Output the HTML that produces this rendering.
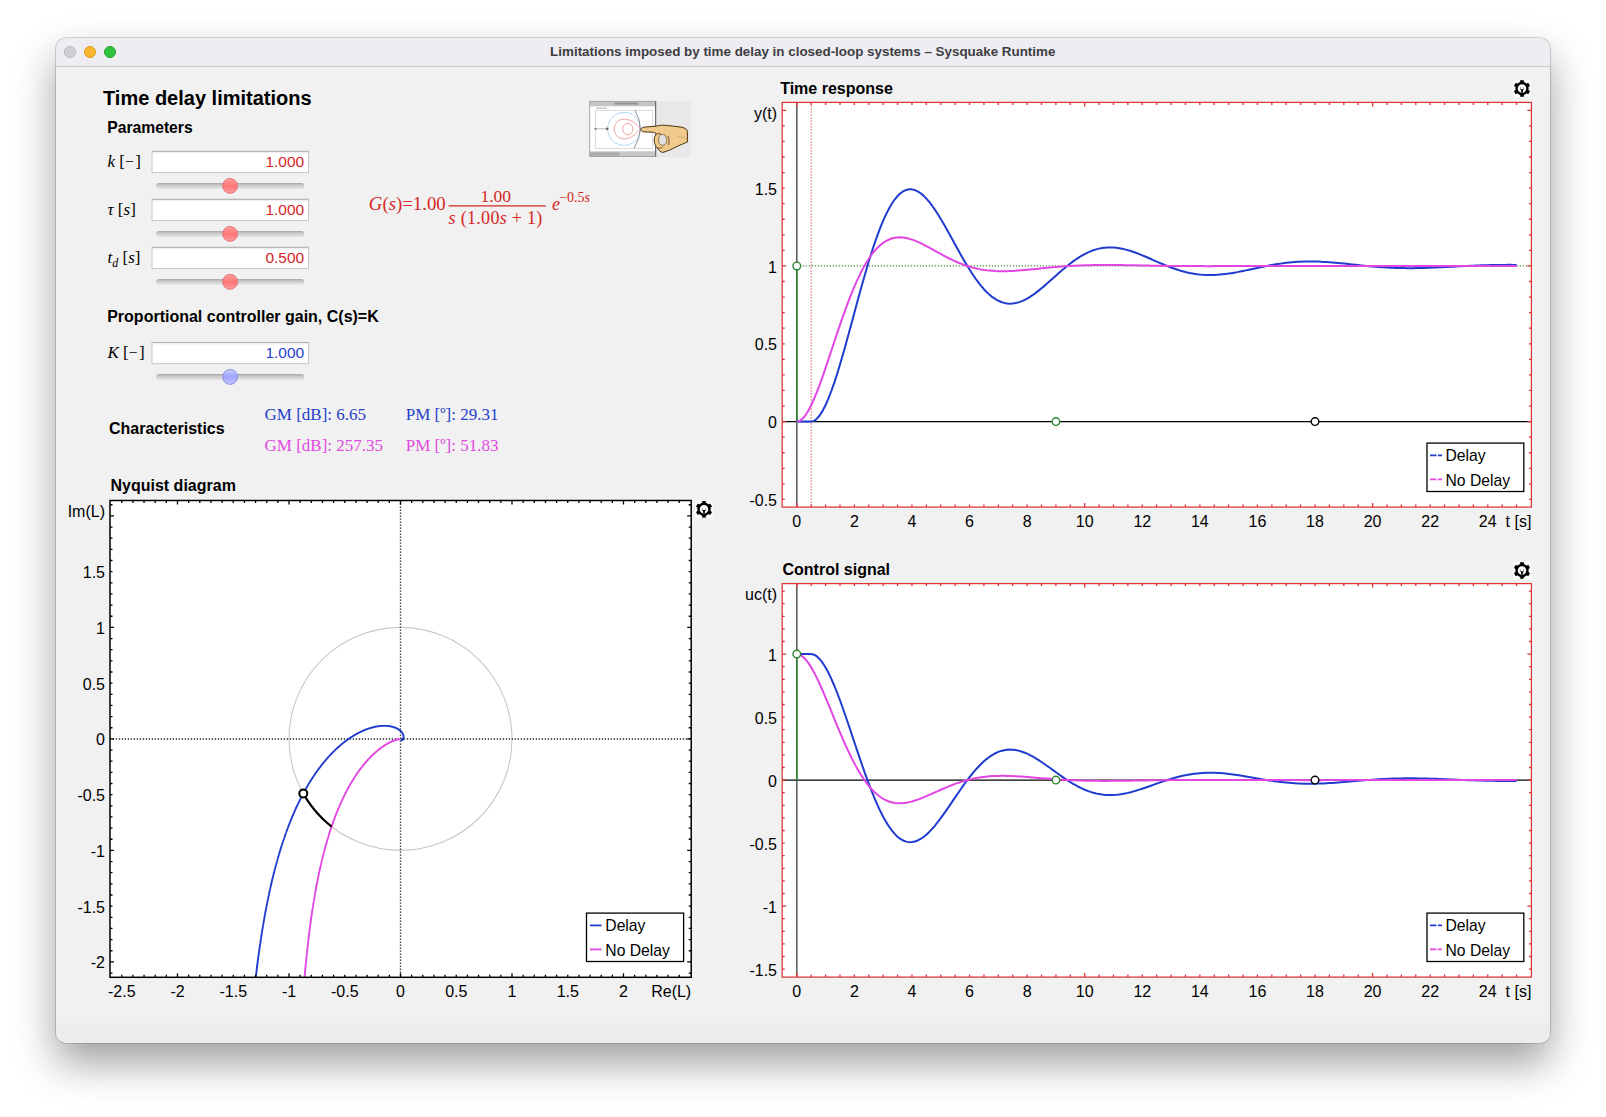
<!DOCTYPE html>
<html><head><meta charset="utf-8"><style>
html,body{margin:0;padding:0;background:#fff;width:1606px;height:1117px;overflow:hidden}
#win{position:absolute;left:55.5px;top:37.5px;width:1494.5px;height:1005.5px;border-radius:10px;background:#f1f1f1;
box-shadow:0 20px 42px rgba(0,0,0,0.38),0 0 0 0.6px rgba(0,0,0,0.28);overflow:hidden}
#tb{position:absolute;left:0;top:0;width:100%;height:28.5px;background:#eeedf1;border-bottom:1px solid #cdccd0}
#bb{position:absolute;left:0;bottom:0;width:100%;height:20px;background:#ececec}
.dot{position:absolute;top:8.5px;width:12px;height:12px;border-radius:50%;box-sizing:border-box}
#ttl{position:absolute;left:0;width:100%;top:6px;text-align:center;font:bold 13.4px "Liberation Sans",sans-serif;color:#3e3d42;letter-spacing:0}
svg{position:absolute;left:0;top:0}
</style></head><body>
<div id="win"><div id="tb"><div class="dot" style="left:8.5px;background:#d0cfd3;border:1px solid #b8b7bb"></div><div class="dot" style="left:28.5px;background:#f8b62c;border:1px solid #dd9a20"></div><div class="dot" style="left:48.5px;background:#2fc43f;border:1px solid #22a030"></div><div id="ttl">Limitations imposed by time delay in closed-loop systems – Sysquake Runtime</div></div><div id="bb"></div></div>
<svg width="1606" height="1117" viewBox="0 0 1606 1117">
<defs>
<linearGradient id="trk" x1="0" y1="0" x2="0" y2="1"><stop offset="0" stop-color="#a6a6a6"/><stop offset="0.35" stop-color="#c8c8c8"/><stop offset="1" stop-color="#e2e2e2"/></linearGradient>
<linearGradient id="thr" x1="0" y1="0" x2="0" y2="1"><stop offset="0" stop-color="#ffa0a0"/><stop offset="0.5" stop-color="#ff7676"/><stop offset="1" stop-color="#ff9c9c"/></linearGradient>
<linearGradient id="thb" x1="0" y1="0" x2="0" y2="1"><stop offset="0" stop-color="#c8ccff"/><stop offset="0.5" stop-color="#9ea4ff"/><stop offset="1" stop-color="#c4c8ff"/></linearGradient>
</defs>
<rect x="782.2" y="102.4" width="749.2" height="404.7" fill="#fff"/>
<clipPath id="c102"><rect x="782.2" y="102.4" width="749.2" height="404.7"/></clipPath>
<line x1="782.2" y1="421.6" x2="1531.4" y2="421.6" stroke="#000" stroke-width="1.3"/>
<line x1="796.8" y1="102.4" x2="796.8" y2="507.1" stroke="#555" stroke-width="1.5"/>
<line x1="796.8" y1="265.95" x2="1531.4" y2="265.95" stroke="#3f8a3f" stroke-width="1.2" stroke-dasharray="1.2 1.8"/>
<line x1="811.19" y1="102.4" x2="811.19" y2="507.1" stroke="#cc3030" stroke-width="1.2" stroke-dasharray="1.1 1.9"/>
<line x1="796.8" y1="421.6" x2="796.8" y2="265.95" stroke="#2a8530" stroke-width="1.6"/>
<path d="M796.8,421.6 L799.68,421.6 L802.56,421.6 L805.44,421.6 L808.32,421.6 L811.19,421.6 L814.07,420.85 L816.95,418.68 L819.83,415.25 L822.71,410.65 L825.59,405.02 L828.47,398.44 L831.35,391.01 L834.23,382.82 L837.11,373.97 L839.98,364.57 L842.86,354.71 L845.74,344.5 L848.62,334.03 L851.5,323.41 L854.38,312.74 L857.26,302.09 L860.14,291.57 L863.02,281.25 L865.9,271.22 L868.77,261.55 L871.65,252.3 L874.53,243.54 L877.41,235.32 L880.29,227.69 L883.17,220.68 L886.05,214.34 L888.93,208.69 L891.81,203.75 L894.69,199.54 L897.56,196.05 L900.44,193.29 L903.32,191.26 L906.2,189.94 L909.08,189.31 L911.96,189.35 L914.84,190.04 L917.72,191.35 L920.6,193.23 L923.48,195.64 L926.36,198.56 L929.23,201.92 L932.11,205.7 L934.99,209.82 L937.87,214.26 L940.75,218.95 L943.63,223.86 L946.51,228.92 L949.39,234.09 L952.27,239.32 L955.14,244.57 L958.02,249.79 L960.9,254.93 L963.78,259.96 L966.66,264.84 L969.54,269.53 L972.42,274 L975.3,278.23 L978.18,282.18 L981.06,285.84 L983.93,289.19 L986.81,292.2 L989.69,294.87 L992.57,297.19 L995.45,299.15 L998.33,300.75 L1001.21,302 L1004.09,302.89 L1006.97,303.43 L1009.85,303.64 L1012.72,303.52 L1015.6,303.09 L1018.48,302.36 L1021.36,301.35 L1024.24,300.08 L1027.12,298.58 L1030,296.86 L1032.88,294.95 L1035.76,292.88 L1038.64,290.65 L1041.51,288.31 L1044.39,285.88 L1047.27,283.37 L1050.15,280.82 L1053.03,278.24 L1055.91,275.67 L1058.79,273.11 L1061.67,270.6 L1064.55,268.15 L1067.43,265.78 L1070.3,263.5 L1073.18,261.34 L1076.06,259.3 L1078.94,257.4 L1081.82,255.65 L1084.7,254.06 L1087.58,252.63 L1090.46,251.37 L1093.34,250.28 L1096.22,249.37 L1099.1,248.64 L1101.97,248.08 L1104.85,247.7 L1107.73,247.48 L1110.61,247.43 L1113.49,247.54 L1116.37,247.8 L1119.25,248.2 L1122.13,248.73 L1125.01,249.39 L1127.88,250.16 L1130.76,251.04 L1133.64,252 L1136.52,253.05 L1139.4,254.16 L1142.28,255.32 L1145.16,256.53 L1148.04,257.77 L1150.92,259.03 L1153.8,260.3 L1156.67,261.56 L1159.55,262.81 L1162.43,264.04 L1165.31,265.23 L1168.19,266.38 L1171.07,267.48 L1173.95,268.53 L1176.83,269.51 L1179.71,270.42 L1182.59,271.26 L1185.46,272.02 L1188.34,272.69 L1191.22,273.29 L1194.1,273.79 L1196.98,274.22 L1199.86,274.55 L1202.74,274.8 L1205.62,274.96 L1208.5,275.04 L1211.38,275.04 L1214.25,274.97 L1217.13,274.82 L1220.01,274.6 L1222.89,274.32 L1225.77,273.98 L1228.65,273.58 L1231.53,273.14 L1234.41,272.65 L1237.29,272.13 L1240.17,271.57 L1243.05,270.99 L1245.92,270.39 L1248.8,269.78 L1251.68,269.16 L1254.56,268.54 L1257.44,267.92 L1260.32,267.31 L1263.2,266.71 L1266.08,266.13 L1268.96,265.57 L1271.84,265.04 L1274.71,264.53 L1277.59,264.06 L1280.47,263.62 L1283.35,263.22 L1286.23,262.86 L1289.11,262.54 L1291.99,262.26 L1294.87,262.03 L1297.75,261.83 L1300.62,261.68 L1303.5,261.57 L1306.38,261.51 L1309.26,261.48 L1312.14,261.49 L1315.02,261.54 L1317.9,261.62 L1320.78,261.74 L1323.66,261.89 L1326.54,262.06 L1329.41,262.26 L1332.29,262.49 L1335.17,262.73 L1338.05,263 L1340.93,263.27 L1343.81,263.56 L1346.69,263.86 L1349.57,264.16 L1352.45,264.47 L1355.33,264.77 L1358.2,265.08 L1361.08,265.37 L1363.96,265.67 L1366.84,265.95 L1369.72,266.22 L1372.6,266.48 L1375.48,266.72 L1378.36,266.95 L1381.24,267.16 L1384.12,267.35 L1386.99,267.52 L1389.87,267.67 L1392.75,267.8 L1395.63,267.91 L1398.51,268 L1401.39,268.07 L1404.27,268.11 L1407.15,268.14 L1410.03,268.15 L1412.91,268.14 L1415.78,268.11 L1418.66,268.06 L1421.54,268 L1424.42,267.92 L1427.3,267.83 L1430.18,267.73 L1433.06,267.61 L1435.94,267.49 L1438.82,267.36 L1441.7,267.22 L1444.57,267.08 L1447.45,266.93 L1450.33,266.78 L1453.21,266.63 L1456.09,266.48 L1458.97,266.33 L1461.85,266.19 L1464.73,266.05 L1467.61,265.91 L1470.49,265.78 L1473.36,265.65 L1476.24,265.54 L1479.12,265.43 L1482,265.33 L1484.88,265.24 L1487.76,265.16 L1490.64,265.08 L1493.52,265.02 L1496.4,264.97 L1499.28,264.93 L1502.15,264.9 L1505.03,264.88 L1507.91,264.87 L1510.79,264.87 L1513.67,264.88 L1516.55,264.9" fill="none" stroke="#1f3ccf" stroke-width="2" stroke-linejoin="round" clip-path="url(#c102)"/>
<path d="M796.8,421.6 L799.68,420.85 L802.56,418.69 L805.44,415.27 L808.32,410.74 L811.19,405.25 L814.07,398.92 L816.95,391.9 L819.83,384.32 L822.71,376.3 L825.59,367.95 L828.47,359.39 L831.35,350.71 L834.23,342.02 L837.11,333.38 L839.98,324.89 L842.86,316.6 L845.74,308.58 L848.62,300.88 L851.5,293.54 L854.38,286.61 L857.26,280.11 L860.14,274.06 L863.02,268.48 L865.9,263.38 L868.77,258.77 L871.65,254.64 L874.53,250.99 L877.41,247.82 L880.29,245.11 L883.17,242.84 L886.05,240.99 L888.93,239.55 L891.81,238.49 L894.69,237.79 L897.56,237.42 L900.44,237.36 L903.32,237.57 L906.2,238.03 L909.08,238.72 L911.96,239.6 L914.84,240.66 L917.72,241.86 L920.6,243.18 L923.48,244.6 L926.36,246.09 L929.23,247.64 L932.11,249.22 L934.99,250.82 L937.87,252.41 L940.75,253.99 L943.63,255.55 L946.51,257.06 L949.39,258.51 L952.27,259.91 L955.14,261.24 L958.02,262.49 L960.9,263.67 L963.78,264.75 L966.66,265.75 L969.54,266.67 L972.42,267.49 L975.3,268.22 L978.18,268.87 L981.06,269.43 L983.93,269.9 L986.81,270.3 L989.69,270.62 L992.57,270.86 L995.45,271.04 L998.33,271.15 L1001.21,271.2 L1004.09,271.2 L1006.97,271.15 L1009.85,271.05 L1012.72,270.91 L1015.6,270.74 L1018.48,270.54 L1021.36,270.31 L1024.24,270.06 L1027.12,269.8 L1030,269.52 L1032.88,269.24 L1035.76,268.94 L1038.64,268.65 L1041.51,268.36 L1044.39,268.07 L1047.27,267.78 L1050.15,267.51 L1053.03,267.24 L1055.91,266.99 L1058.79,266.75 L1061.67,266.52 L1064.55,266.31 L1067.43,266.12 L1070.3,265.94 L1073.18,265.77 L1076.06,265.63 L1078.94,265.5 L1081.82,265.38 L1084.7,265.28 L1087.58,265.2 L1090.46,265.13 L1093.34,265.08 L1096.22,265.04 L1099.1,265.01 L1101.97,264.99 L1104.85,264.98 L1107.73,264.99 L1110.61,265 L1113.49,265.02 L1116.37,265.05 L1119.25,265.08 L1122.13,265.12 L1125.01,265.16 L1127.88,265.21 L1130.76,265.26 L1133.64,265.31 L1136.52,265.36 L1139.4,265.41 L1142.28,265.47 L1145.16,265.52 L1148.04,265.58 L1150.92,265.63 L1153.8,265.68 L1156.67,265.73 L1159.55,265.77 L1162.43,265.81 L1165.31,265.86 L1168.19,265.89 L1171.07,265.93 L1173.95,265.96 L1176.83,265.99 L1179.71,266.02 L1182.59,266.04 L1185.46,266.06 L1188.34,266.08 L1191.22,266.09 L1194.1,266.1 L1196.98,266.11 L1199.86,266.12 L1202.74,266.12 L1205.62,266.13 L1208.5,266.13 L1211.38,266.13 L1214.25,266.12 L1217.13,266.12 L1220.01,266.11 L1222.89,266.11 L1225.77,266.1 L1228.65,266.09 L1231.53,266.08 L1234.41,266.07 L1237.29,266.07 L1240.17,266.06 L1243.05,266.05 L1245.92,266.04 L1248.8,266.03 L1251.68,266.02 L1254.56,266.01 L1257.44,266 L1260.32,265.99 L1263.2,265.98 L1266.08,265.97 L1268.96,265.97 L1271.84,265.96 L1274.71,265.95 L1277.59,265.95 L1280.47,265.94 L1283.35,265.94 L1286.23,265.93 L1289.11,265.93 L1291.99,265.93 L1294.87,265.92 L1297.75,265.92 L1300.62,265.92 L1303.5,265.92 L1306.38,265.92 L1309.26,265.92 L1312.14,265.92 L1315.02,265.92 L1317.9,265.92 L1320.78,265.92 L1323.66,265.92 L1326.54,265.92 L1329.41,265.92 L1332.29,265.92 L1335.17,265.93 L1338.05,265.93 L1340.93,265.93 L1343.81,265.93 L1346.69,265.93 L1349.57,265.93 L1352.45,265.94 L1355.33,265.94 L1358.2,265.94 L1361.08,265.94 L1363.96,265.94 L1366.84,265.94 L1369.72,265.95 L1372.6,265.95 L1375.48,265.95 L1378.36,265.95 L1381.24,265.95 L1384.12,265.95 L1386.99,265.95 L1389.87,265.95 L1392.75,265.95 L1395.63,265.95 L1398.51,265.96 L1401.39,265.96 L1404.27,265.96 L1407.15,265.96 L1410.03,265.96 L1412.91,265.96 L1415.78,265.96 L1418.66,265.96 L1421.54,265.96 L1424.42,265.96 L1427.3,265.96 L1430.18,265.96 L1433.06,265.95 L1435.94,265.95 L1438.82,265.95 L1441.7,265.95 L1444.57,265.95 L1447.45,265.95 L1450.33,265.95 L1453.21,265.95 L1456.09,265.95 L1458.97,265.95 L1461.85,265.95 L1464.73,265.95 L1467.61,265.95 L1470.49,265.95 L1473.36,265.95 L1476.24,265.95 L1479.12,265.95 L1482,265.95 L1484.88,265.95 L1487.76,265.95 L1490.64,265.95 L1493.52,265.95 L1496.4,265.95 L1499.28,265.95 L1502.15,265.95 L1505.03,265.95 L1507.91,265.95 L1510.79,265.95 L1513.67,265.95 L1516.55,265.95" fill="none" stroke="#e246e2" stroke-width="2" stroke-linejoin="round" clip-path="url(#c102)"/>
<circle cx="796.8" cy="265.95" r="3.8" fill="#fff" stroke="#2a8530" stroke-width="1.4"/>
<circle cx="1055.91" cy="421.6" r="3.8" fill="#fff" stroke="#2a8530" stroke-width="1.4"/>
<circle cx="1315.02" cy="421.6" r="3.8" fill="#fff" stroke="#000" stroke-width="1.4"/>
<path d="M796.8,507.1v-4M796.8,102.4v4M811.19,507.1v-2.5M811.19,102.4v2.5M825.59,507.1v-2.5M825.59,102.4v2.5M839.98,507.1v-2.5M839.98,102.4v2.5M854.38,507.1v-2.5M854.38,102.4v2.5M868.77,507.1v-2.5M868.77,102.4v2.5M883.17,507.1v-2.5M883.17,102.4v2.5M897.56,507.1v-2.5M897.56,102.4v2.5M911.96,507.1v-2.5M911.96,102.4v2.5M926.36,507.1v-2.5M926.36,102.4v2.5M940.75,507.1v-2.5M940.75,102.4v2.5M955.14,507.1v-2.5M955.14,102.4v2.5M969.54,507.1v-2.5M969.54,102.4v2.5M983.93,507.1v-2.5M983.93,102.4v2.5M998.33,507.1v-2.5M998.33,102.4v2.5M1012.72,507.1v-2.5M1012.72,102.4v2.5M1027.12,507.1v-2.5M1027.12,102.4v2.5M1041.51,507.1v-2.5M1041.51,102.4v2.5M1055.91,507.1v-2.5M1055.91,102.4v2.5M1070.3,507.1v-2.5M1070.3,102.4v2.5M1084.7,507.1v-4M1084.7,102.4v4M1099.1,507.1v-2.5M1099.1,102.4v2.5M1113.49,507.1v-2.5M1113.49,102.4v2.5M1127.88,507.1v-2.5M1127.88,102.4v2.5M1142.28,507.1v-2.5M1142.28,102.4v2.5M1156.67,507.1v-2.5M1156.67,102.4v2.5M1171.07,507.1v-2.5M1171.07,102.4v2.5M1185.46,507.1v-2.5M1185.46,102.4v2.5M1199.86,507.1v-2.5M1199.86,102.4v2.5M1214.25,507.1v-2.5M1214.25,102.4v2.5M1228.65,507.1v-2.5M1228.65,102.4v2.5M1243.05,507.1v-2.5M1243.05,102.4v2.5M1257.44,507.1v-2.5M1257.44,102.4v2.5M1271.84,507.1v-2.5M1271.84,102.4v2.5M1286.23,507.1v-2.5M1286.23,102.4v2.5M1300.62,507.1v-2.5M1300.62,102.4v2.5M1315.02,507.1v-2.5M1315.02,102.4v2.5M1329.41,507.1v-2.5M1329.41,102.4v2.5M1343.81,507.1v-2.5M1343.81,102.4v2.5M1358.2,507.1v-2.5M1358.2,102.4v2.5M1372.6,507.1v-4M1372.6,102.4v4M1386.99,507.1v-2.5M1386.99,102.4v2.5M1401.39,507.1v-2.5M1401.39,102.4v2.5M1415.78,507.1v-2.5M1415.78,102.4v2.5M1430.18,507.1v-2.5M1430.18,102.4v2.5M1444.57,507.1v-2.5M1444.57,102.4v2.5M1458.97,507.1v-2.5M1458.97,102.4v2.5M1473.36,507.1v-2.5M1473.36,102.4v2.5M1487.76,507.1v-2.5M1487.76,102.4v2.5M1502.15,507.1v-2.5M1502.15,102.4v2.5M1516.55,507.1v-2.5M1516.55,102.4v2.5M782.2,499.43h2.5M1531.4,499.43h-2.5M782.2,483.86h2.5M1531.4,483.86h-2.5M782.2,468.3h2.5M1531.4,468.3h-2.5M782.2,452.73h2.5M1531.4,452.73h-2.5M782.2,437.17h2.5M1531.4,437.17h-2.5M782.2,421.6h4M1531.4,421.6h-4M782.2,406.04h2.5M1531.4,406.04h-2.5M782.2,390.47h2.5M1531.4,390.47h-2.5M782.2,374.91h2.5M1531.4,374.91h-2.5M782.2,359.34h2.5M1531.4,359.34h-2.5M782.2,343.78h2.5M1531.4,343.78h-2.5M782.2,328.21h2.5M1531.4,328.21h-2.5M782.2,312.65h2.5M1531.4,312.65h-2.5M782.2,297.08h2.5M1531.4,297.08h-2.5M782.2,281.51h2.5M1531.4,281.51h-2.5M782.2,265.95h4M1531.4,265.95h-4M782.2,250.38h2.5M1531.4,250.38h-2.5M782.2,234.82h2.5M1531.4,234.82h-2.5M782.2,219.25h2.5M1531.4,219.25h-2.5M782.2,203.69h2.5M1531.4,203.69h-2.5M782.2,188.12h2.5M1531.4,188.12h-2.5M782.2,172.56h2.5M1531.4,172.56h-2.5M782.2,157h2.5M1531.4,157h-2.5M782.2,141.43h2.5M1531.4,141.43h-2.5M782.2,125.87h2.5M1531.4,125.87h-2.5M782.2,110.3h4M1531.4,110.3h-4" stroke="#de3535" stroke-width="1.3" fill="none"/>
<rect x="782.2" y="102.4" width="749.2" height="404.7" fill="none" stroke="#de3535" stroke-width="1.25"/>
<text x="777" y="506.03" font-family='"Liberation Sans", sans-serif' font-size="16" font-weight="normal" font-style="normal" fill="#000" text-anchor="end" >-0.5</text>
<text x="777" y="428.2" font-family='"Liberation Sans", sans-serif' font-size="16" font-weight="normal" font-style="normal" fill="#000" text-anchor="end" >0</text>
<text x="777" y="350.38" font-family='"Liberation Sans", sans-serif' font-size="16" font-weight="normal" font-style="normal" fill="#000" text-anchor="end" >0.5</text>
<text x="777" y="272.55" font-family='"Liberation Sans", sans-serif' font-size="16" font-weight="normal" font-style="normal" fill="#000" text-anchor="end" >1</text>
<text x="777" y="194.72" font-family='"Liberation Sans", sans-serif' font-size="16" font-weight="normal" font-style="normal" fill="#000" text-anchor="end" >1.5</text>
<text x="777" y="118.9" font-family='"Liberation Sans", sans-serif' font-size="16" font-weight="normal" font-style="normal" fill="#000" text-anchor="end" >y(t)</text>
<text x="796.8" y="526.8" font-family='"Liberation Sans", sans-serif' font-size="16" font-weight="normal" font-style="normal" fill="#000" text-anchor="middle" >0</text>
<text x="854.38" y="526.8" font-family='"Liberation Sans", sans-serif' font-size="16" font-weight="normal" font-style="normal" fill="#000" text-anchor="middle" >2</text>
<text x="911.96" y="526.8" font-family='"Liberation Sans", sans-serif' font-size="16" font-weight="normal" font-style="normal" fill="#000" text-anchor="middle" >4</text>
<text x="969.54" y="526.8" font-family='"Liberation Sans", sans-serif' font-size="16" font-weight="normal" font-style="normal" fill="#000" text-anchor="middle" >6</text>
<text x="1027.12" y="526.8" font-family='"Liberation Sans", sans-serif' font-size="16" font-weight="normal" font-style="normal" fill="#000" text-anchor="middle" >8</text>
<text x="1084.7" y="526.8" font-family='"Liberation Sans", sans-serif' font-size="16" font-weight="normal" font-style="normal" fill="#000" text-anchor="middle" >10</text>
<text x="1142.28" y="526.8" font-family='"Liberation Sans", sans-serif' font-size="16" font-weight="normal" font-style="normal" fill="#000" text-anchor="middle" >12</text>
<text x="1199.86" y="526.8" font-family='"Liberation Sans", sans-serif' font-size="16" font-weight="normal" font-style="normal" fill="#000" text-anchor="middle" >14</text>
<text x="1257.44" y="526.8" font-family='"Liberation Sans", sans-serif' font-size="16" font-weight="normal" font-style="normal" fill="#000" text-anchor="middle" >16</text>
<text x="1315.02" y="526.8" font-family='"Liberation Sans", sans-serif' font-size="16" font-weight="normal" font-style="normal" fill="#000" text-anchor="middle" >18</text>
<text x="1372.6" y="526.8" font-family='"Liberation Sans", sans-serif' font-size="16" font-weight="normal" font-style="normal" fill="#000" text-anchor="middle" >20</text>
<text x="1430.18" y="526.8" font-family='"Liberation Sans", sans-serif' font-size="16" font-weight="normal" font-style="normal" fill="#000" text-anchor="middle" >22</text>
<text x="1487.76" y="526.8" font-family='"Liberation Sans", sans-serif' font-size="16" font-weight="normal" font-style="normal" fill="#000" text-anchor="middle" >24</text>
<text x="1531.4" y="526.8" font-family='"Liberation Sans", sans-serif' font-size="16" font-weight="normal" font-style="normal" fill="#000" text-anchor="end" >t [s]</text>
<text x="780.2" y="93.5" font-family='"Liberation Sans", sans-serif' font-size="16" font-weight="bold" font-style="normal" fill="#000" text-anchor="start" >Time response</text>
<rect x="1427" y="443.1" width="96.8" height="48.4" fill="#fff" stroke="#000" stroke-width="1.3"/>
<path d="M1430,455.4h6.5M1438,455.4h4" stroke="#1f3ccf" stroke-width="1.8"/>
<path d="M1430,479.4h6.5M1438,479.4h4" stroke="#e246e2" stroke-width="1.8"/>
<text x="1445.5" y="461.4" font-family='"Liberation Sans", sans-serif' font-size="15.7" font-weight="normal" font-style="normal" fill="#000" text-anchor="start" >Delay</text>
<text x="1445.5" y="485.5" font-family='"Liberation Sans", sans-serif' font-size="15.7" font-weight="normal" font-style="normal" fill="#000" text-anchor="start" >No Delay</text>
<rect x="782.2" y="583.6" width="749.2" height="393.5" fill="#fff"/>
<clipPath id="c583"><rect x="782.2" y="583.6" width="749.2" height="393.5"/></clipPath>
<line x1="782.2" y1="780.1" x2="1531.4" y2="780.1" stroke="#000" stroke-width="1.3"/>
<line x1="796.8" y1="583.6" x2="796.8" y2="977.1" stroke="#555" stroke-width="1.5"/>
<line x1="796.8" y1="780.1" x2="796.8" y2="654.1" stroke="#2a8530" stroke-width="1.6"/>
<path d="M796.8,654.1 L799.68,654.1 L802.56,654.1 L805.44,654.1 L808.32,654.1 L811.19,654.1 L814.07,654.71 L816.95,656.46 L819.83,659.24 L822.71,662.96 L825.59,667.52 L828.47,672.85 L831.35,678.87 L834.23,685.5 L837.11,692.66 L839.98,700.27 L842.86,708.25 L845.74,716.51 L848.62,724.99 L851.5,733.58 L854.38,742.23 L857.26,750.84 L860.14,759.36 L863.02,767.71 L865.9,775.83 L868.77,783.66 L871.65,791.15 L874.53,798.24 L877.41,804.9 L880.29,811.07 L883.17,816.74 L886.05,821.88 L888.93,826.45 L891.81,830.45 L894.69,833.86 L897.56,836.68 L900.44,838.92 L903.32,840.56 L906.2,841.63 L909.08,842.14 L911.96,842.1 L914.84,841.55 L917.72,840.49 L920.6,838.97 L923.48,837.01 L926.36,834.65 L929.23,831.93 L932.11,828.88 L934.99,825.53 L937.87,821.94 L940.75,818.14 L943.63,814.17 L946.51,810.08 L949.39,805.89 L952.27,801.66 L955.14,797.41 L958.02,793.19 L960.9,789.02 L963.78,784.95 L966.66,781 L969.54,777.2 L972.42,773.58 L975.3,770.16 L978.18,766.96 L981.06,764 L983.93,761.29 L986.81,758.85 L989.69,756.69 L992.57,754.81 L995.45,753.22 L998.33,751.93 L1001.21,750.92 L1004.09,750.2 L1006.97,749.76 L1009.85,749.59 L1012.72,749.69 L1015.6,750.04 L1018.48,750.63 L1021.36,751.44 L1024.24,752.47 L1027.12,753.68 L1030,755.07 L1032.88,756.62 L1035.76,758.3 L1038.64,760.1 L1041.51,762 L1044.39,763.97 L1047.27,766 L1050.15,768.06 L1053.03,770.15 L1055.91,772.23 L1058.79,774.3 L1061.67,776.34 L1064.55,778.32 L1067.43,780.24 L1070.3,782.08 L1073.18,783.83 L1076.06,785.48 L1078.94,787.02 L1081.82,788.43 L1084.7,789.73 L1087.58,790.88 L1090.46,791.9 L1093.34,792.78 L1096.22,793.52 L1099.1,794.11 L1101.97,794.56 L1104.85,794.88 L1107.73,795.05 L1110.61,795.09 L1113.49,795 L1116.37,794.8 L1119.25,794.47 L1122.13,794.04 L1125.01,793.5 L1127.88,792.88 L1130.76,792.17 L1133.64,791.39 L1136.52,790.55 L1139.4,789.65 L1142.28,788.7 L1145.16,787.72 L1148.04,786.72 L1150.92,785.7 L1153.8,784.68 L1156.67,783.65 L1159.55,782.64 L1162.43,781.65 L1165.31,780.68 L1168.19,779.75 L1171.07,778.86 L1173.95,778.01 L1176.83,777.22 L1179.71,776.48 L1182.59,775.8 L1185.46,775.19 L1188.34,774.64 L1191.22,774.16 L1194.1,773.75 L1196.98,773.41 L1199.86,773.14 L1202.74,772.94 L1205.62,772.81 L1208.5,772.74 L1211.38,772.74 L1214.25,772.8 L1217.13,772.92 L1220.01,773.1 L1222.89,773.33 L1225.77,773.6 L1228.65,773.92 L1231.53,774.28 L1234.41,774.68 L1237.29,775.1 L1240.17,775.55 L1243.05,776.02 L1245.92,776.5 L1248.8,777 L1251.68,777.5 L1254.56,778.01 L1257.44,778.51 L1260.32,779 L1263.2,779.49 L1266.08,779.96 L1268.96,780.41 L1271.84,780.84 L1274.71,781.25 L1277.59,781.63 L1280.47,781.98 L1283.35,782.31 L1286.23,782.6 L1289.11,782.86 L1291.99,783.08 L1294.87,783.28 L1297.75,783.43 L1300.62,783.55 L1303.5,783.64 L1306.38,783.7 L1309.26,783.72 L1312.14,783.71 L1315.02,783.67 L1317.9,783.6 L1320.78,783.51 L1323.66,783.39 L1326.54,783.25 L1329.41,783.08 L1332.29,782.9 L1335.17,782.7 L1338.05,782.49 L1340.93,782.27 L1343.81,782.03 L1346.69,781.79 L1349.57,781.55 L1352.45,781.3 L1355.33,781.05 L1358.2,780.81 L1361.08,780.57 L1363.96,780.33 L1366.84,780.1 L1369.72,779.88 L1372.6,779.67 L1375.48,779.48 L1378.36,779.29 L1381.24,779.12 L1384.12,778.97 L1386.99,778.83 L1389.87,778.71 L1392.75,778.6 L1395.63,778.51 L1398.51,778.44 L1401.39,778.39 L1404.27,778.35 L1407.15,778.33 L1410.03,778.32 L1412.91,778.33 L1415.78,778.35 L1418.66,778.39 L1421.54,778.44 L1424.42,778.5 L1427.3,778.58 L1430.18,778.66 L1433.06,778.75 L1435.94,778.85 L1438.82,778.96 L1441.7,779.07 L1444.57,779.19 L1447.45,779.3 L1450.33,779.43 L1453.21,779.55 L1456.09,779.67 L1458.97,779.79 L1461.85,779.91 L1464.73,780.02 L1467.61,780.13 L1470.49,780.24 L1473.36,780.34 L1476.24,780.43 L1479.12,780.52 L1482,780.6 L1484.88,780.68 L1487.76,780.74 L1490.64,780.8 L1493.52,780.85 L1496.4,780.89 L1499.28,780.92 L1502.15,780.95 L1505.03,780.96 L1507.91,780.97 L1510.79,780.97 L1513.67,780.97 L1516.55,780.95" fill="none" stroke="#1f3ccf" stroke-width="2" stroke-linejoin="round" clip-path="url(#c583)"/>
<path d="M796.8,654.1 L799.68,654.71 L802.56,656.46 L805.44,659.22 L808.32,662.89 L811.19,667.34 L814.07,672.46 L816.95,678.14 L819.83,684.28 L822.71,690.77 L825.59,697.53 L828.47,704.46 L831.35,711.48 L834.23,718.52 L837.11,725.51 L839.98,732.39 L842.86,739.1 L845.74,745.59 L848.62,751.82 L851.5,757.76 L854.38,763.38 L857.26,768.64 L860.14,773.54 L863.02,778.05 L865.9,782.18 L868.77,785.91 L871.65,789.26 L874.53,792.21 L877.41,794.78 L880.29,796.97 L883.17,798.81 L886.05,800.3 L888.93,801.47 L891.81,802.33 L894.69,802.9 L897.56,803.19 L900.44,803.25 L903.32,803.08 L906.2,802.7 L909.08,802.14 L911.96,801.43 L914.84,800.57 L917.72,799.6 L920.6,798.53 L923.48,797.39 L926.36,796.18 L929.23,794.92 L932.11,793.64 L934.99,792.35 L937.87,791.06 L940.75,789.78 L943.63,788.52 L946.51,787.3 L949.39,786.12 L952.27,784.99 L955.14,783.91 L958.02,782.9 L960.9,781.95 L963.78,781.07 L966.66,780.26 L969.54,779.52 L972.42,778.85 L975.3,778.26 L978.18,777.74 L981.06,777.28 L983.93,776.9 L986.81,776.58 L989.69,776.32 L992.57,776.12 L995.45,775.98 L998.33,775.89 L1001.21,775.85 L1004.09,775.85 L1006.97,775.89 L1009.85,775.97 L1012.72,776.08 L1015.6,776.22 L1018.48,776.38 L1021.36,776.57 L1024.24,776.77 L1027.12,776.98 L1030,777.21 L1032.88,777.44 L1035.76,777.68 L1038.64,777.91 L1041.51,778.15 L1044.39,778.39 L1047.27,778.62 L1050.15,778.84 L1053.03,779.05 L1055.91,779.26 L1058.79,779.45 L1061.67,779.64 L1064.55,779.81 L1067.43,779.96 L1070.3,780.11 L1073.18,780.24 L1076.06,780.36 L1078.94,780.47 L1081.82,780.56 L1084.7,780.64 L1087.58,780.71 L1090.46,780.76 L1093.34,780.81 L1096.22,780.84 L1099.1,780.86 L1101.97,780.88 L1104.85,780.88 L1107.73,780.88 L1110.61,780.87 L1113.49,780.85 L1116.37,780.83 L1119.25,780.8 L1122.13,780.77 L1125.01,780.74 L1127.88,780.7 L1130.76,780.66 L1133.64,780.62 L1136.52,780.58 L1139.4,780.53 L1142.28,780.49 L1145.16,780.45 L1148.04,780.4 L1150.92,780.36 L1153.8,780.32 L1156.67,780.28 L1159.55,780.24 L1162.43,780.21 L1165.31,780.18 L1168.19,780.15 L1171.07,780.12 L1173.95,780.09 L1176.83,780.07 L1179.71,780.05 L1182.59,780.03 L1185.46,780.01 L1188.34,780 L1191.22,779.99 L1194.1,779.98 L1196.98,779.97 L1199.86,779.96 L1202.74,779.96 L1205.62,779.96 L1208.5,779.96 L1211.38,779.96 L1214.25,779.96 L1217.13,779.96 L1220.01,779.97 L1222.89,779.97 L1225.77,779.98 L1228.65,779.98 L1231.53,779.99 L1234.41,780 L1237.29,780.01 L1240.17,780.01 L1243.05,780.02 L1245.92,780.03 L1248.8,780.04 L1251.68,780.05 L1254.56,780.05 L1257.44,780.06 L1260.32,780.07 L1263.2,780.08 L1266.08,780.08 L1268.96,780.09 L1271.84,780.09 L1274.71,780.1 L1277.59,780.1 L1280.47,780.11 L1283.35,780.11 L1286.23,780.11 L1289.11,780.12 L1291.99,780.12 L1294.87,780.12 L1297.75,780.12 L1300.62,780.12 L1303.5,780.13 L1306.38,780.13 L1309.26,780.13 L1312.14,780.13 L1315.02,780.13 L1317.9,780.13 L1320.78,780.13 L1323.66,780.12 L1326.54,780.12 L1329.41,780.12 L1332.29,780.12 L1335.17,780.12 L1338.05,780.12 L1340.93,780.12 L1343.81,780.12 L1346.69,780.11 L1349.57,780.11 L1352.45,780.11 L1355.33,780.11 L1358.2,780.11 L1361.08,780.11 L1363.96,780.11 L1366.84,780.1 L1369.72,780.1 L1372.6,780.1 L1375.48,780.1 L1378.36,780.1 L1381.24,780.1 L1384.12,780.1 L1386.99,780.1 L1389.87,780.1 L1392.75,780.1 L1395.63,780.1 L1398.51,780.1 L1401.39,780.1 L1404.27,780.1 L1407.15,780.1 L1410.03,780.1 L1412.91,780.1 L1415.78,780.1 L1418.66,780.1 L1421.54,780.1 L1424.42,780.1 L1427.3,780.1 L1430.18,780.1 L1433.06,780.1 L1435.94,780.1 L1438.82,780.1 L1441.7,780.1 L1444.57,780.1 L1447.45,780.1 L1450.33,780.1 L1453.21,780.1 L1456.09,780.1 L1458.97,780.1 L1461.85,780.1 L1464.73,780.1 L1467.61,780.1 L1470.49,780.1 L1473.36,780.1 L1476.24,780.1 L1479.12,780.1 L1482,780.1 L1484.88,780.1 L1487.76,780.1 L1490.64,780.1 L1493.52,780.1 L1496.4,780.1 L1499.28,780.1 L1502.15,780.1 L1505.03,780.1 L1507.91,780.1 L1510.79,780.1 L1513.67,780.1 L1516.55,780.1" fill="none" stroke="#e246e2" stroke-width="2" stroke-linejoin="round" clip-path="url(#c583)"/>
<circle cx="796.8" cy="654.1" r="3.8" fill="#fff" stroke="#2a8530" stroke-width="1.4"/>
<circle cx="1055.91" cy="780.1" r="3.8" fill="#fff" stroke="#2a8530" stroke-width="1.4"/>
<circle cx="1315.02" cy="780.1" r="3.8" fill="#fff" stroke="#000" stroke-width="1.4"/>
<path d="M796.8,977.1v-4M796.8,583.6v4M811.19,977.1v-2.5M811.19,583.6v2.5M825.59,977.1v-2.5M825.59,583.6v2.5M839.98,977.1v-2.5M839.98,583.6v2.5M854.38,977.1v-2.5M854.38,583.6v2.5M868.77,977.1v-2.5M868.77,583.6v2.5M883.17,977.1v-2.5M883.17,583.6v2.5M897.56,977.1v-2.5M897.56,583.6v2.5M911.96,977.1v-2.5M911.96,583.6v2.5M926.36,977.1v-2.5M926.36,583.6v2.5M940.75,977.1v-2.5M940.75,583.6v2.5M955.14,977.1v-2.5M955.14,583.6v2.5M969.54,977.1v-2.5M969.54,583.6v2.5M983.93,977.1v-2.5M983.93,583.6v2.5M998.33,977.1v-2.5M998.33,583.6v2.5M1012.72,977.1v-2.5M1012.72,583.6v2.5M1027.12,977.1v-2.5M1027.12,583.6v2.5M1041.51,977.1v-2.5M1041.51,583.6v2.5M1055.91,977.1v-2.5M1055.91,583.6v2.5M1070.3,977.1v-2.5M1070.3,583.6v2.5M1084.7,977.1v-4M1084.7,583.6v4M1099.1,977.1v-2.5M1099.1,583.6v2.5M1113.49,977.1v-2.5M1113.49,583.6v2.5M1127.88,977.1v-2.5M1127.88,583.6v2.5M1142.28,977.1v-2.5M1142.28,583.6v2.5M1156.67,977.1v-2.5M1156.67,583.6v2.5M1171.07,977.1v-2.5M1171.07,583.6v2.5M1185.46,977.1v-2.5M1185.46,583.6v2.5M1199.86,977.1v-2.5M1199.86,583.6v2.5M1214.25,977.1v-2.5M1214.25,583.6v2.5M1228.65,977.1v-2.5M1228.65,583.6v2.5M1243.05,977.1v-2.5M1243.05,583.6v2.5M1257.44,977.1v-2.5M1257.44,583.6v2.5M1271.84,977.1v-2.5M1271.84,583.6v2.5M1286.23,977.1v-2.5M1286.23,583.6v2.5M1300.62,977.1v-2.5M1300.62,583.6v2.5M1315.02,977.1v-2.5M1315.02,583.6v2.5M1329.41,977.1v-2.5M1329.41,583.6v2.5M1343.81,977.1v-2.5M1343.81,583.6v2.5M1358.2,977.1v-2.5M1358.2,583.6v2.5M1372.6,977.1v-4M1372.6,583.6v4M1386.99,977.1v-2.5M1386.99,583.6v2.5M1401.39,977.1v-2.5M1401.39,583.6v2.5M1415.78,977.1v-2.5M1415.78,583.6v2.5M1430.18,977.1v-2.5M1430.18,583.6v2.5M1444.57,977.1v-2.5M1444.57,583.6v2.5M1458.97,977.1v-2.5M1458.97,583.6v2.5M1473.36,977.1v-2.5M1473.36,583.6v2.5M1487.76,977.1v-2.5M1487.76,583.6v2.5M1502.15,977.1v-2.5M1502.15,583.6v2.5M1516.55,977.1v-2.5M1516.55,583.6v2.5M782.2,969.1h2.5M1531.4,969.1h-2.5M782.2,956.5h2.5M1531.4,956.5h-2.5M782.2,943.9h2.5M1531.4,943.9h-2.5M782.2,931.3h2.5M1531.4,931.3h-2.5M782.2,918.7h2.5M1531.4,918.7h-2.5M782.2,906.1h4M1531.4,906.1h-4M782.2,893.5h2.5M1531.4,893.5h-2.5M782.2,880.9h2.5M1531.4,880.9h-2.5M782.2,868.3h2.5M1531.4,868.3h-2.5M782.2,855.7h2.5M1531.4,855.7h-2.5M782.2,843.1h2.5M1531.4,843.1h-2.5M782.2,830.5h2.5M1531.4,830.5h-2.5M782.2,817.9h2.5M1531.4,817.9h-2.5M782.2,805.3h2.5M1531.4,805.3h-2.5M782.2,792.7h2.5M1531.4,792.7h-2.5M782.2,780.1h4M1531.4,780.1h-4M782.2,767.5h2.5M1531.4,767.5h-2.5M782.2,754.9h2.5M1531.4,754.9h-2.5M782.2,742.3h2.5M1531.4,742.3h-2.5M782.2,729.7h2.5M1531.4,729.7h-2.5M782.2,717.1h2.5M1531.4,717.1h-2.5M782.2,704.5h2.5M1531.4,704.5h-2.5M782.2,691.9h2.5M1531.4,691.9h-2.5M782.2,679.3h2.5M1531.4,679.3h-2.5M782.2,666.7h2.5M1531.4,666.7h-2.5M782.2,654.1h4M1531.4,654.1h-4M782.2,641.5h2.5M1531.4,641.5h-2.5M782.2,628.9h2.5M1531.4,628.9h-2.5M782.2,616.3h2.5M1531.4,616.3h-2.5M782.2,603.7h2.5M1531.4,603.7h-2.5M782.2,591.1h2.5M1531.4,591.1h-2.5" stroke="#de3535" stroke-width="1.3" fill="none"/>
<rect x="782.2" y="583.6" width="749.2" height="393.5" fill="none" stroke="#de3535" stroke-width="1.25"/>
<text x="777" y="975.7" font-family='"Liberation Sans", sans-serif' font-size="16" font-weight="normal" font-style="normal" fill="#000" text-anchor="end" >-1.5</text>
<text x="777" y="912.7" font-family='"Liberation Sans", sans-serif' font-size="16" font-weight="normal" font-style="normal" fill="#000" text-anchor="end" >-1</text>
<text x="777" y="849.7" font-family='"Liberation Sans", sans-serif' font-size="16" font-weight="normal" font-style="normal" fill="#000" text-anchor="end" >-0.5</text>
<text x="777" y="786.7" font-family='"Liberation Sans", sans-serif' font-size="16" font-weight="normal" font-style="normal" fill="#000" text-anchor="end" >0</text>
<text x="777" y="723.7" font-family='"Liberation Sans", sans-serif' font-size="16" font-weight="normal" font-style="normal" fill="#000" text-anchor="end" >0.5</text>
<text x="777" y="660.7" font-family='"Liberation Sans", sans-serif' font-size="16" font-weight="normal" font-style="normal" fill="#000" text-anchor="end" >1</text>
<text x="777" y="600.1" font-family='"Liberation Sans", sans-serif' font-size="16" font-weight="normal" font-style="normal" fill="#000" text-anchor="end" >uc(t)</text>
<text x="796.8" y="996.8" font-family='"Liberation Sans", sans-serif' font-size="16" font-weight="normal" font-style="normal" fill="#000" text-anchor="middle" >0</text>
<text x="854.38" y="996.8" font-family='"Liberation Sans", sans-serif' font-size="16" font-weight="normal" font-style="normal" fill="#000" text-anchor="middle" >2</text>
<text x="911.96" y="996.8" font-family='"Liberation Sans", sans-serif' font-size="16" font-weight="normal" font-style="normal" fill="#000" text-anchor="middle" >4</text>
<text x="969.54" y="996.8" font-family='"Liberation Sans", sans-serif' font-size="16" font-weight="normal" font-style="normal" fill="#000" text-anchor="middle" >6</text>
<text x="1027.12" y="996.8" font-family='"Liberation Sans", sans-serif' font-size="16" font-weight="normal" font-style="normal" fill="#000" text-anchor="middle" >8</text>
<text x="1084.7" y="996.8" font-family='"Liberation Sans", sans-serif' font-size="16" font-weight="normal" font-style="normal" fill="#000" text-anchor="middle" >10</text>
<text x="1142.28" y="996.8" font-family='"Liberation Sans", sans-serif' font-size="16" font-weight="normal" font-style="normal" fill="#000" text-anchor="middle" >12</text>
<text x="1199.86" y="996.8" font-family='"Liberation Sans", sans-serif' font-size="16" font-weight="normal" font-style="normal" fill="#000" text-anchor="middle" >14</text>
<text x="1257.44" y="996.8" font-family='"Liberation Sans", sans-serif' font-size="16" font-weight="normal" font-style="normal" fill="#000" text-anchor="middle" >16</text>
<text x="1315.02" y="996.8" font-family='"Liberation Sans", sans-serif' font-size="16" font-weight="normal" font-style="normal" fill="#000" text-anchor="middle" >18</text>
<text x="1372.6" y="996.8" font-family='"Liberation Sans", sans-serif' font-size="16" font-weight="normal" font-style="normal" fill="#000" text-anchor="middle" >20</text>
<text x="1430.18" y="996.8" font-family='"Liberation Sans", sans-serif' font-size="16" font-weight="normal" font-style="normal" fill="#000" text-anchor="middle" >22</text>
<text x="1487.76" y="996.8" font-family='"Liberation Sans", sans-serif' font-size="16" font-weight="normal" font-style="normal" fill="#000" text-anchor="middle" >24</text>
<text x="1531.4" y="996.8" font-family='"Liberation Sans", sans-serif' font-size="16" font-weight="normal" font-style="normal" fill="#000" text-anchor="end" >t [s]</text>
<text x="782.5" y="575" font-family='"Liberation Sans", sans-serif' font-size="16" font-weight="bold" font-style="normal" fill="#000" text-anchor="start" >Control signal</text>
<rect x="1427" y="913.1" width="96.8" height="48.4" fill="#fff" stroke="#000" stroke-width="1.3"/>
<path d="M1430,925.4h6.5M1438,925.4h4" stroke="#1f3ccf" stroke-width="1.8"/>
<path d="M1430,949.4h6.5M1438,949.4h4" stroke="#e246e2" stroke-width="1.8"/>
<text x="1445.5" y="931.4" font-family='"Liberation Sans", sans-serif' font-size="15.7" font-weight="normal" font-style="normal" fill="#000" text-anchor="start" >Delay</text>
<text x="1445.5" y="955.5" font-family='"Liberation Sans", sans-serif' font-size="15.7" font-weight="normal" font-style="normal" fill="#000" text-anchor="start" >No Delay</text>
<rect x="110" y="500.5" width="581.2" height="476.8" fill="#fff"/>
<clipPath id="cn"><rect x="110" y="500.5" width="581.2" height="476.8"/></clipPath>
<circle cx="400.5" cy="738.9" r="111.5" fill="none" stroke="#c8c8c8" stroke-width="1.1"/>
<line x1="110" y1="738.9" x2="691.2" y2="738.9" stroke="#222" stroke-width="1.5" stroke-dasharray="1.3 1.7" stroke-dashoffset="0.25"/>
<line x1="400.5" y1="500.5" x2="400.5" y2="977.3" stroke="#222" stroke-width="1.4" stroke-dasharray="1.3 1.7"/>
<path d="M248.4,1060.76 L248.43,1060.29 L248.46,1059.83 L248.49,1059.36 L248.53,1058.89 L248.56,1058.43 L248.59,1057.96 L248.62,1057.49 L248.65,1057.03 L248.69,1056.56 L248.72,1056.1 L248.75,1055.64 L248.78,1055.17 L248.81,1054.71 L248.85,1054.25 L248.88,1053.79 L248.91,1053.32 L248.94,1052.86 L248.98,1052.4 L249.01,1051.94 L249.04,1051.48 L249.08,1051.02 L249.11,1050.56 L249.14,1050.11 L249.17,1049.65 L249.21,1049.19 L249.24,1048.73 L249.27,1048.28 L249.31,1047.82 L249.34,1047.36 L249.37,1046.91 L249.41,1046.45 L249.44,1046 L249.47,1045.55 L249.51,1045.09 L249.54,1044.64 L249.57,1044.19 L249.61,1043.73 L249.64,1043.28 L249.68,1042.83 L249.71,1042.38 L249.74,1041.93 L249.78,1041.48 L249.81,1041.03 L249.85,1040.58 L249.88,1040.13 L249.91,1039.68 L249.95,1039.24 L249.98,1038.79 L250.02,1038.34 L250.05,1037.89 L250.09,1037.45 L250.12,1037 L250.16,1036.56 L250.19,1036.11 L250.23,1035.67 L250.26,1035.22 L250.3,1034.78 L250.33,1034.34 L250.37,1033.89 L250.4,1033.45 L250.44,1033.01 L250.47,1032.57 L250.51,1032.13 L250.54,1031.69 L250.58,1031.25 L250.61,1030.81 L250.65,1030.37 L250.69,1029.93 L250.72,1029.49 L250.76,1029.05 L250.79,1028.61 L250.83,1028.18 L250.87,1027.74 L250.9,1027.3 L250.94,1026.87 L250.97,1026.43 L251.01,1026 L251.05,1025.56 L251.08,1025.13 L251.12,1024.69 L251.16,1024.26 L251.19,1023.83 L251.23,1023.39 L251.27,1022.96 L251.3,1022.53 L251.34,1022.1 L251.38,1021.67 L251.41,1021.24 L251.45,1020.81 L251.49,1020.38 L251.53,1019.95 L251.56,1019.52 L251.6,1019.09 L251.64,1018.66 L251.68,1018.23 L251.71,1017.81 L251.75,1017.38 L251.79,1016.95 L251.83,1016.53 L251.87,1016.1 L251.9,1015.67 L251.94,1015.25 L251.98,1014.83 L252.02,1014.4 L252.06,1013.98 L252.09,1013.55 L252.13,1013.13 L252.17,1012.71 L252.21,1012.29 L252.25,1011.87 L252.29,1011.44 L252.33,1011.02 L252.36,1010.6 L252.4,1010.18 L252.44,1009.76 L252.48,1009.34 L252.52,1008.93 L252.56,1008.51 L252.6,1008.09 L252.64,1007.67 L252.68,1007.25 L252.72,1006.84 L252.76,1006.42 L252.8,1006.01 L252.83,1005.59 L252.87,1005.17 L252.91,1004.76 L252.95,1004.35 L252.99,1003.93 L253.03,1003.52 L253.07,1003.1 L253.11,1002.69 L253.15,1002.28 L253.19,1001.87 L253.24,1001.46 L253.28,1001.04 L253.32,1000.63 L253.36,1000.22 L253.4,999.81 L253.44,999.4 L253.48,998.99 L253.52,998.58 L253.56,998.18 L253.6,997.77 L253.64,997.36 L253.68,996.95 L253.72,996.55 L253.77,996.14 L253.81,995.73 L253.85,995.33 L253.89,994.92 L253.93,994.52 L253.97,994.11 L254.02,993.71 L254.06,993.31 L254.1,992.9 L254.14,992.5 L254.18,992.1 L254.23,991.69 L254.27,991.29 L254.31,990.89 L254.35,990.49 L254.39,990.09 L254.44,989.69 L254.48,989.29 L254.52,988.89 L254.56,988.49 L254.61,988.09 L254.65,987.69 L254.69,987.29 L254.74,986.9 L254.78,986.5 L254.82,986.1 L254.87,985.71 L254.91,985.31 L254.95,984.91 L255,984.52 L255.04,984.12 L255.08,983.73 L255.13,983.34 L255.17,982.94 L255.21,982.55 L255.26,982.15 L255.3,981.76 L255.35,981.37 L255.39,980.98 L255.43,980.59 L255.48,980.19 L255.52,979.8 L255.57,979.41 L255.61,979.02 L255.66,978.63 L255.7,978.24 L255.75,977.86 L255.79,977.47 L255.84,977.08 L255.88,976.69 L255.93,976.3 L255.97,975.92 L256.02,975.53 L256.06,975.14 L256.11,974.76 L256.15,974.37 L256.2,973.99 L256.24,973.6 L256.29,973.22 L256.33,972.83 L256.38,972.45 L256.43,972.07 L256.47,971.68 L256.52,971.3 L256.56,970.92 L256.61,970.54 L256.66,970.15 L256.7,969.77 L256.75,969.39 L256.8,969.01 L256.84,968.63 L256.89,968.25 L256.94,967.87 L256.98,967.49 L257.03,967.12 L257.08,966.74 L257.12,966.36 L257.17,965.98 L257.22,965.61 L257.26,965.23 L257.31,964.85 L257.36,964.48 L257.41,964.1 L257.45,963.72 L257.5,963.35 L257.55,962.98 L257.6,962.6 L257.65,962.23 L257.69,961.85 L257.74,961.48 L257.79,961.11 L257.84,960.74 L257.89,960.36 L257.93,959.99 L257.98,959.62 L258.03,959.25 L258.08,958.88 L258.13,958.51 L258.18,958.14 L258.23,957.77 L258.28,957.4 L258.32,957.03 L258.37,956.66 L258.42,956.29 L258.47,955.93 L258.52,955.56 L258.57,955.19 L258.62,954.83 L258.67,954.46 L258.72,954.09 L258.77,953.73 L258.82,953.36 L258.87,953 L258.92,952.63 L258.97,952.27 L259.02,951.9 L259.07,951.54 L259.12,951.18 L259.17,950.81 L259.22,950.45 L259.27,950.09 L259.32,949.73 L259.37,949.37 L259.42,949.01 L259.48,948.65 L259.53,948.29 L259.58,947.93 L259.63,947.57 L259.68,947.21 L259.73,946.85 L259.78,946.49 L259.83,946.13 L259.89,945.77 L259.94,945.41 L259.99,945.06 L260.04,944.7 L260.09,944.34 L260.15,943.99 L260.2,943.63 L260.25,943.28 L260.3,942.92 L260.35,942.57 L260.41,942.21 L260.46,941.86 L260.51,941.5 L260.56,941.15 L260.62,940.8 L260.67,940.45 L260.72,940.09 L260.78,939.74 L260.83,939.39 L260.88,939.04 L260.94,938.69 L260.99,938.34 L261.04,937.99 L261.1,937.64 L261.15,937.29 L261.2,936.94 L261.26,936.59 L261.31,936.24 L261.36,935.89 L261.42,935.54 L261.47,935.2 L261.53,934.85 L261.58,934.5 L261.64,934.16 L261.69,933.81 L261.74,933.46 L261.8,933.12 L261.85,932.77 L261.91,932.43 L261.96,932.08 L262.02,931.74 L262.07,931.4 L262.13,931.05 L262.18,930.71 L262.24,930.37 L262.29,930.02 L262.35,929.68 L262.41,929.34 L262.46,929 L262.52,928.66 L262.57,928.32 L262.63,927.98 L262.68,927.64 L262.74,927.3 L262.8,926.96 L262.85,926.62 L262.91,926.28 L262.97,925.94 L263.02,925.6 L263.08,925.27 L263.14,924.93 L263.19,924.59 L263.25,924.25 L263.31,923.92 L263.36,923.58 L263.42,923.25 L263.48,922.91 L263.53,922.58 L263.59,922.24 L263.65,921.91 L263.71,921.57 L263.76,921.24 L263.82,920.91 L263.88,920.57 L263.94,920.24 L264,919.91 L264.05,919.57 L264.11,919.24 L264.17,918.91 L264.23,918.58 L264.29,918.25 L264.35,917.92 L264.4,917.59 L264.46,917.26 L264.52,916.93 L264.58,916.6 L264.64,916.27 L264.7,915.94 L264.76,915.62 L264.82,915.29 L264.88,914.96 L264.94,914.63 L264.99,914.31 L265.05,913.98 L265.11,913.65 L265.17,913.33 L265.23,913 L265.29,912.68 L265.35,912.35 L265.41,912.03 L265.47,911.7 L265.53,911.38 L265.59,911.06 L265.65,910.73 L265.72,910.41 L265.78,910.09 L265.84,909.77 L265.9,909.44 L265.96,909.12 L266.02,908.8 L266.08,908.48 L266.14,908.16 L266.2,907.84 L266.26,907.52 L266.33,907.2 L266.39,906.88 L266.45,906.56 L266.51,906.24 L266.57,905.92 L266.63,905.61 L266.7,905.29 L266.76,904.97 L266.82,904.65 L266.88,904.34 L266.94,904.02 L267.01,903.7 L267.07,903.39 L267.13,903.07 L267.19,902.76 L267.26,902.44 L267.32,902.13 L267.38,901.82 L267.45,901.5 L267.51,901.19 L267.57,900.87 L267.64,900.56 L267.7,900.25 L267.76,899.94 L267.83,899.63 L267.89,899.31 L267.95,899 L268.02,898.69 L268.08,898.38 L268.15,898.07 L268.21,897.76 L268.27,897.45 L268.34,897.14 L268.4,896.83 L268.47,896.52 L268.53,896.22 L268.6,895.91 L268.66,895.6 L268.73,895.29 L268.79,894.98 L268.86,894.68 L268.92,894.37 L268.99,894.07 L269.05,893.76 L269.12,893.45 L269.18,893.15 L269.25,892.84 L269.31,892.54 L269.38,892.23 L269.44,891.93 L269.51,891.63 L269.58,891.32 L269.64,891.02 L269.71,890.72 L269.78,890.42 L269.84,890.11 L269.91,889.81 L269.97,889.51 L270.04,889.21 L270.11,888.91 L270.17,888.61 L270.24,888.31 L270.31,888.01 L270.38,887.71 L270.44,887.41 L270.51,887.11 L270.58,886.81 L270.65,886.51 L270.71,886.22 L270.78,885.92 L270.85,885.62 L270.92,885.32 L270.98,885.03 L271.05,884.73 L271.12,884.43 L271.19,884.14 L271.26,883.84 L271.32,883.55 L271.39,883.25 L271.46,882.96 L271.53,882.66 L271.6,882.37 L271.67,882.08 L271.74,881.78 L271.81,881.49 L271.87,881.2 L271.94,880.91 L272.01,880.61 L272.08,880.32 L272.15,880.03 L272.22,879.74 L272.29,879.45 L272.36,879.16 L272.43,878.87 L272.5,878.58 L272.57,878.29 L272.64,878 L272.71,877.71 L272.78,877.42 L272.85,877.13 L272.92,876.85 L272.99,876.56 L273.06,876.27 L273.13,875.98 L273.2,875.7 L273.28,875.41 L273.35,875.12 L273.42,874.84 L273.49,874.55 L273.56,874.27 L273.63,873.98 L273.7,873.7 L273.77,873.41 L273.85,873.13 L273.92,872.85 L273.99,872.56 L274.06,872.28 L274.13,872 L274.2,871.71 L274.28,871.43 L274.35,871.15 L274.42,870.87 L274.49,870.59 L274.57,870.31 L274.64,870.03 L274.71,869.75 L274.78,869.47 L274.86,869.19 L274.93,868.91 L275,868.63 L275.08,868.35 L275.15,868.07 L275.22,867.79 L275.3,867.51 L275.37,867.24 L275.44,866.96 L275.52,866.68 L275.59,866.41 L275.67,866.13 L275.74,865.85 L275.81,865.58 L275.89,865.3 L275.96,865.03 L276.04,864.75 L276.11,864.48 L276.18,864.2 L276.26,863.93 L276.33,863.66 L276.41,863.38 L276.48,863.11 L276.56,862.84 L276.63,862.56 L276.71,862.29 L276.78,862.02 L276.86,861.75 L276.93,861.48 L277.01,861.21 L277.09,860.94 L277.16,860.67 L277.24,860.4 L277.31,860.13 L277.39,859.86 L277.46,859.59 L277.54,859.32 L277.62,859.05 L277.69,858.78 L277.77,858.52 L277.85,858.25 L277.92,857.98 L278,857.71 L278.08,857.45 L278.15,857.18 L278.23,856.91 L278.31,856.65 L278.38,856.38 L278.46,856.12 L278.54,855.85 L278.62,855.59 L278.69,855.33 L278.77,855.06 L278.85,854.8 L278.93,854.53 L279,854.27 L279.08,854.01 L279.16,853.75 L279.24,853.48 L279.32,853.22 L279.39,852.96 L279.47,852.7 L279.55,852.44 L279.63,852.18 L279.71,851.92 L279.79,851.66 L279.87,851.4 L279.94,851.14 L280.02,850.88 L280.1,850.62 L280.18,850.36 L280.26,850.1 L280.34,849.85 L280.42,849.59 L280.5,849.33 L280.58,849.08 L280.66,848.82 L280.74,848.56 L280.82,848.31 L280.9,848.05 L280.98,847.79 L281.06,847.54 L281.14,847.28 L281.22,847.03 L281.3,846.78 L281.38,846.52 L281.46,846.27 L281.54,846.01 L281.62,845.76 L281.7,845.51 L281.78,845.26 L281.86,845 L281.94,844.75 L282.02,844.5 L282.11,844.25 L282.19,844 L282.27,843.75 L282.35,843.5 L282.43,843.25 L282.51,843 L282.59,842.75 L282.68,842.5 L282.76,842.25 L282.84,842 L282.92,841.75 L283,841.51 L283.09,841.26 L283.17,841.01 L283.25,840.76 L283.33,840.52 L283.42,840.27 L283.5,840.02 L283.58,839.78 L283.66,839.53 L283.75,839.29 L283.83,839.04 L283.91,838.8 L284,838.55 L284.08,838.31 L284.16,838.06 L284.25,837.82 L284.33,837.58 L284.41,837.34 L284.5,837.09 L284.58,836.85 L284.66,836.61 L284.75,836.37 L284.83,836.13 L284.92,835.88 L285,835.64 L285.08,835.4 L285.17,835.16 L285.25,834.92 L285.34,834.68 L285.42,834.44 L285.51,834.2 L285.59,833.97 L285.68,833.73 L285.76,833.49 L285.85,833.25 L285.93,833.01 L286.02,832.78 L286.1,832.54 L286.19,832.3 L286.27,832.07 L286.36,831.83 L286.44,831.59 L286.53,831.36 L286.61,831.12 L286.7,830.89 L286.79,830.65 L286.87,830.42 L286.96,830.19 L287.04,829.95 L287.13,829.72 L287.22,829.49 L287.3,829.25 L287.39,829.02 L287.48,828.79 L287.56,828.56 L287.65,828.32 L287.74,828.09 L287.82,827.86 L287.91,827.63 L288,827.4 L288.08,827.17 L288.17,826.94 L288.26,826.71 L288.35,826.48 L288.43,826.25 L288.52,826.02 L288.61,825.79 L288.7,825.57 L288.78,825.34 L288.87,825.11 L288.96,824.88 L289.05,824.66 L289.13,824.43 L289.22,824.2 L289.31,823.98 L289.4,823.75 L289.49,823.53 L289.58,823.3 L289.66,823.08 L289.75,822.85 L289.84,822.63 L289.93,822.4 L290.02,822.18 L290.11,821.96 L290.2,821.73 L290.29,821.51 L290.37,821.29 L290.46,821.07 L290.55,820.84 L290.64,820.62 L290.73,820.4 L290.82,820.18 L290.91,819.96 L291,819.74 L291.09,819.52 L291.18,819.3 L291.27,819.08 L291.36,818.86 L291.45,818.64 L291.54,818.42 L291.63,818.2 L291.72,817.99 L291.81,817.77 L291.9,817.55 L291.99,817.33 L292.08,817.12 L292.17,816.9 L292.26,816.68 L292.35,816.47 L292.44,816.25 L292.53,816.04 L292.63,815.82 L292.72,815.61 L292.81,815.39 L292.9,815.18 L292.99,814.96 L293.08,814.75 L293.17,814.53 L293.26,814.32 L293.36,814.11 L293.45,813.9 L293.54,813.68 L293.63,813.47 L293.72,813.26 L293.81,813.05 L293.91,812.84 L294,812.63 L294.09,812.42 L294.18,812.21 L294.27,812 L294.37,811.79 L294.46,811.58 L294.55,811.37 L294.64,811.16 L294.74,810.95 L294.83,810.74 L294.92,810.53 L295.01,810.33 L295.11,810.12 L295.2,809.91 L295.29,809.71 L295.39,809.5 L295.48,809.29 L295.57,809.09 L295.67,808.88 L295.76,808.68 L295.85,808.47 L295.95,808.27 L296.04,808.06 L296.13,807.86 L296.23,807.65 L296.32,807.45 L296.41,807.25 L296.51,807.04 L296.6,806.84 L296.69,806.64 L296.79,806.44 L296.88,806.24 L296.98,806.03 L297.07,805.83 L297.17,805.63 L297.26,805.43 L297.35,805.23 L297.45,805.03 L297.54,804.83 L297.64,804.63 L297.73,804.43 L297.83,804.23 L297.92,804.04 L298.02,803.84 L298.11,803.64 L298.21,803.44 L298.3,803.24 L298.4,803.05 L298.49,802.85 L298.59,802.65 L298.68,802.46 L298.78,802.26 L298.87,802.07 L298.97,801.87 L299.06,801.67 L299.16,801.48 L299.26,801.29 L299.35,801.09 L299.45,800.9 L299.54,800.7 L299.64,800.51 L299.73,800.32 L299.83,800.12 L299.93,799.93 L300.02,799.74 L300.12,799.55 L300.21,799.36 L300.31,799.16 L300.41,798.97 L300.5,798.78 L300.6,798.59 L300.7,798.4 L300.79,798.21 L300.89,798.02 L300.99,797.83 L301.08,797.64 L301.18,797.46 L301.28,797.27 L301.37,797.08 L301.47,796.89 L301.57,796.7 L301.67,796.52 L301.76,796.33 L301.86,796.14 L301.96,795.96 L302.05,795.77 L302.15,795.58 L302.25,795.4 L302.35,795.21 L302.44,795.03 L302.54,794.84 L302.64,794.66 L302.74,794.47 L302.83,794.29 L302.93,794.11 L303.03,793.92 L303.13,793.74 L303.23,793.56 L303.32,793.38 L303.42,793.19 L303.52,793.01 L303.62,792.83 L303.72,792.65 L303.81,792.47 L303.91,792.29 L304.01,792.11 L304.11,791.93 L304.21,791.75 L304.31,791.57 L304.41,791.39 L304.5,791.21 L304.6,791.03 L304.7,790.85 L304.8,790.67 L304.9,790.49 L305,790.32 L305.1,790.14 L305.2,789.96 L305.29,789.79 L305.39,789.61 L305.49,789.43 L305.59,789.26 L305.69,789.08 L305.79,788.91 L305.89,788.73 L305.99,788.56 L306.09,788.38 L306.19,788.21 L306.29,788.03 L306.39,787.86 L306.49,787.69 L306.59,787.52 L306.68,787.34 L306.78,787.17 L306.88,787 L306.98,786.83 L307.08,786.65 L307.18,786.48 L307.28,786.31 L307.38,786.14 L307.48,785.97 L307.58,785.8 L307.68,785.63 L307.78,785.46 L307.88,785.29 L307.98,785.12 L308.08,784.95 L308.18,784.79 L308.28,784.62 L308.38,784.45 L308.49,784.28 L308.59,784.11 L308.69,783.95 L308.79,783.78 L308.89,783.61 L308.99,783.45 L309.09,783.28 L309.19,783.12 L309.29,782.95 L309.39,782.79 L309.49,782.62 L309.59,782.46 L309.69,782.29 L309.79,782.13 L309.89,781.97 L310,781.8 L310.1,781.64 L310.2,781.48 L310.3,781.31 L310.4,781.15 L310.5,780.99 L310.6,780.83 L310.7,780.67 L310.8,780.5 L310.91,780.34 L311.01,780.18 L311.11,780.02 L311.21,779.86 L311.31,779.7 L311.41,779.54 L311.51,779.39 L311.62,779.23 L311.72,779.07 L311.82,778.91 L311.92,778.75 L312.02,778.59 L312.12,778.44 L312.23,778.28 L312.33,778.12 L312.43,777.97 L312.53,777.81 L312.63,777.65 L312.73,777.5 L312.84,777.34 L312.94,777.19 L313.04,777.03 L313.14,776.88 L313.24,776.72 L313.35,776.57 L313.45,776.41 L313.55,776.26 L313.65,776.11 L313.75,775.95 L313.86,775.8 L313.96,775.65 L314.06,775.5 L314.16,775.35 L314.27,775.19 L314.37,775.04 L314.47,774.89 L314.57,774.74 L314.67,774.59 L314.78,774.44 L314.88,774.29 L314.98,774.14 L315.08,773.99 L315.19,773.84 L315.29,773.69 L315.39,773.54 L315.49,773.4 L315.6,773.25 L315.7,773.1 L315.8,772.95 L315.9,772.81 L316.01,772.66 L316.11,772.51 L316.21,772.37 L316.32,772.22 L316.42,772.07 L316.52,771.93 L316.62,771.78 L316.73,771.64 L316.83,771.49 L316.93,771.35 L317.04,771.21 L317.14,771.06 L317.24,770.92 L317.34,770.77 L317.45,770.63 L317.55,770.49 L317.65,770.35 L317.76,770.2 L317.86,770.06 L317.96,769.92 L318.06,769.78 L318.17,769.64 L318.27,769.5 L318.37,769.36 L318.48,769.22 L318.58,769.08 L318.68,768.94 L318.79,768.8 L318.89,768.66 L318.99,768.52 L319.1,768.38 L319.2,768.24 L319.3,768.1 L319.41,767.97 L319.51,767.83 L319.61,767.69 L319.72,767.55 L319.82,767.42 L319.92,767.28 L320.03,767.15 L320.13,767.01 L320.23,766.87 L320.34,766.74 L320.44,766.6 L320.54,766.47 L320.65,766.33 L320.75,766.2 L320.85,766.07 L320.96,765.93 L321.06,765.8 L321.16,765.67 L321.27,765.53 L321.37,765.4 L321.47,765.27 L321.58,765.13 L321.68,765 L321.78,764.87 L321.89,764.74 L321.99,764.61 L322.09,764.48 L322.2,764.35 L322.3,764.22 L322.4,764.09 L322.51,763.96 L322.61,763.83 L322.71,763.7 L322.82,763.57 L322.92,763.44 L323.02,763.31 L323.13,763.19 L323.23,763.06 L323.34,762.93 L323.44,762.8 L323.54,762.68 L323.65,762.55 L323.75,762.42 L323.85,762.3 L323.96,762.17 L324.06,762.04 L324.16,761.92 L324.27,761.79 L324.37,761.67 L324.47,761.54 L324.58,761.42 L324.68,761.3 L324.78,761.17 L324.89,761.05 L324.99,760.92 L325.1,760.8 L325.2,760.68 L325.3,760.56 L325.41,760.43 L325.51,760.31 L325.61,760.19 L325.72,760.07 L325.82,759.95 L325.92,759.83 L326.03,759.71 L326.13,759.59 L326.23,759.47 L326.34,759.35 L326.44,759.23 L326.54,759.11 L326.65,758.99 L326.75,758.87 L326.85,758.75 L326.96,758.63 L327.06,758.51 L327.16,758.4 L327.27,758.28 L327.37,758.16 L327.47,758.04 L327.58,757.93 L327.68,757.81 L327.79,757.69 L327.89,757.58 L327.99,757.46 L328.1,757.35 L328.2,757.23 L328.3,757.12 L328.41,757 L328.51,756.89 L328.61,756.77 L328.72,756.66 L328.82,756.55 L328.92,756.43 L329.02,756.32 L329.13,756.21 L329.23,756.09 L329.33,755.98 L329.44,755.87 L329.54,755.76 L329.64,755.65 L329.75,755.53 L329.85,755.42 L329.95,755.31 L330.06,755.2 L330.16,755.09 L330.26,754.98 L330.37,754.87 L330.47,754.76 L330.57,754.65 L330.67,754.54 L330.78,754.44 L330.88,754.33 L330.98,754.22 L331.09,754.11 L331.19,754 L331.29,753.9 L331.4,753.79 L331.5,753.68 L331.6,753.57 L331.7,753.47 L331.81,753.36 L331.91,753.26 L332.01,753.15 L332.12,753.04 L332.22,752.94 L332.32,752.83 L332.42,752.73 L332.53,752.63 L332.63,752.52 L332.73,752.42 L332.83,752.31 L332.94,752.21 L333.04,752.11 L333.14,752 L333.24,751.9 L333.35,751.8 L333.45,751.7 L333.55,751.59 L333.65,751.49 L333.76,751.39 L333.86,751.29 L333.96,751.19 L334.06,751.09 L334.17,750.99 L334.27,750.89 L334.37,750.79 L334.47,750.69 L334.57,750.59 L334.68,750.49 L334.78,750.39 L334.88,750.29 L334.98,750.19 L335.08,750.09 L335.19,750 L335.29,749.9 L335.39,749.8 L335.49,749.7 L335.59,749.61 L335.7,749.51 L335.8,749.41 L335.9,749.32 L336,749.22 L336.1,749.13 L336.21,749.03 L336.31,748.93 L336.41,748.84 L336.51,748.74 L336.61,748.65 L336.71,748.56 L336.82,748.46 L336.92,748.37 L337.02,748.27 L337.12,748.18 L337.22,748.09 L337.32,747.99 L337.42,747.9 L337.52,747.81 L337.63,747.72 L337.73,747.63 L337.83,747.53 L337.93,747.44 L338.03,747.35 L338.13,747.26 L338.23,747.17 L338.33,747.08 L338.44,746.99 L338.54,746.9 L338.64,746.81 L338.74,746.72 L338.84,746.63 L338.94,746.54 L339.04,746.45 L339.14,746.36 L339.24,746.28 L339.34,746.19 L339.44,746.1 L339.54,746.01 L339.64,745.92 L339.74,745.84 L339.84,745.75 L339.95,745.66 L340.05,745.58 L340.15,745.49 L340.25,745.4 L340.35,745.32 L340.45,745.23 L340.55,745.15 L340.65,745.06 L340.75,744.98 L340.85,744.89 L340.95,744.81 L341.05,744.72 L341.15,744.64 L341.25,744.56 L341.35,744.47 L341.45,744.39 L341.55,744.31 L341.65,744.22 L341.75,744.14 L341.84,744.06 L341.94,743.98 L342.04,743.9 L342.14,743.81 L342.24,743.73 L342.34,743.65 L342.44,743.57 L342.54,743.49 L342.64,743.41 L342.74,743.33 L342.84,743.25 L342.94,743.17 L343.04,743.09 L343.14,743.01 L343.23,742.93 L343.33,742.85 L343.43,742.77 L343.53,742.7 L343.63,742.62 L343.73,742.54 L343.83,742.46 L343.93,742.38 L344.02,742.31 L344.12,742.23 L344.22,742.15 L344.32,742.08 L344.42,742 L344.52,741.92 L344.61,741.85 L344.71,741.77 L344.81,741.7 L344.91,741.62 L345.01,741.55 L345.11,741.47 L345.2,741.4 L345.3,741.32 L345.4,741.25 L345.5,741.18 L345.59,741.1 L345.69,741.03 L345.79,740.95 L345.89,740.88 L345.98,740.81 L346.08,740.74 L346.18,740.66 L346.28,740.59 L346.37,740.52 L346.47,740.45 L346.57,740.38 L346.67,740.31 L346.76,740.23 L346.86,740.16 L346.96,740.09 L347.05,740.02 L347.15,739.95 L347.25,739.88 L347.34,739.81 L347.44,739.74 L347.54,739.67 L347.63,739.6 L347.73,739.54 L347.83,739.47 L347.92,739.4 L348.02,739.33 L348.12,739.26 L348.21,739.19 L348.31,739.13 L348.4,739.06 L348.5,738.99 L348.6,738.92 L348.69,738.86 L348.79,738.79 L348.88,738.72 L348.98,738.66 L349.08,738.59 L349.17,738.53 L349.27,738.46 L349.36,738.4 L349.46,738.33 L349.55,738.27 L349.65,738.2 L349.74,738.14 L349.84,738.07 L349.93,738.01 L350.03,737.94 L350.12,737.88 L350.22,737.82 L350.31,737.75 L350.41,737.69 L350.5,737.63 L350.6,737.57 L350.69,737.5 L350.79,737.44 L350.88,737.38 L350.98,737.32 L351.07,737.26 L351.16,737.19 L351.26,737.13 L351.35,737.07 L351.45,737.01 L351.54,736.95 L351.63,736.89 L351.73,736.83 L351.82,736.77 L351.92,736.71 L352.01,736.65 L352.1,736.59 L352.2,736.53 L352.29,736.47 L352.38,736.42 L352.48,736.36 L352.57,736.3 L352.66,736.24 L352.76,736.18 L352.85,736.12 L352.94,736.07 L353.04,736.01 L353.13,735.95 L353.22,735.9 L353.31,735.84 L353.41,735.78 L353.5,735.73 L353.59,735.67 L353.68,735.61 L353.78,735.56 L353.87,735.5 L353.96,735.45 L354.05,735.39 L354.15,735.34 L354.24,735.28 L354.33,735.23 L354.42,735.17 L354.51,735.12 L354.6,735.07 L354.7,735.01 L354.79,734.96 L354.88,734.9 L354.97,734.85 L355.06,734.8 L355.15,734.75 L355.24,734.69 L355.34,734.64 L355.43,734.59 L355.52,734.54 L355.61,734.48 L355.7,734.43 L355.79,734.38 L355.88,734.33 L355.97,734.28 L356.06,734.23 L356.15,734.18 L356.24,734.13 L356.33,734.08 L356.42,734.03 L356.51,733.98 L356.6,733.93 L356.69,733.88 L356.78,733.83 L356.87,733.78 L356.96,733.73 L357.05,733.68 L357.14,733.63 L357.23,733.58 L357.32,733.53 L357.41,733.49 L357.5,733.44 L357.59,733.39 L357.68,733.34 L357.77,733.29 L357.86,733.25 L357.95,733.2 L358.04,733.15 L358.12,733.11 L358.21,733.06 L358.3,733.01 L358.39,732.97 L358.48,732.92 L358.57,732.88 L358.66,732.83 L358.74,732.79 L358.83,732.74 L358.92,732.7 L359.01,732.65 L359.1,732.61 L359.18,732.56 L359.27,732.52 L359.36,732.47 L359.45,732.43 L359.53,732.39 L359.62,732.34 L359.71,732.3 L359.8,732.25 L359.88,732.21 L359.97,732.17 L360.06,732.13 L360.15,732.08 L360.23,732.04 L360.32,732 L360.41,731.96 L360.49,731.91 L360.58,731.87 L360.67,731.83 L360.75,731.79 L360.84,731.75 L360.92,731.71 L361.01,731.67 L361.1,731.63 L361.18,731.59 L361.27,731.55 L361.35,731.51 L361.44,731.47 L361.53,731.43 L361.61,731.39 L361.7,731.35 L361.78,731.31 L361.87,731.27 L361.95,731.23 L362.04,731.19 L362.12,731.15 L362.21,731.11 L362.29,731.08 L362.38,731.04 L362.46,731 L362.55,730.96 L362.63,730.92 L362.72,730.89 L362.8,730.85 L362.88,730.81 L362.97,730.78 L363.05,730.74 L363.14,730.7 L363.22,730.67 L363.3,730.63 L363.39,730.59 L363.47,730.56 L363.56,730.52 L363.64,730.49 L363.72,730.45 L363.81,730.42 L363.89,730.38 L363.97,730.35 L364.06,730.31 L364.14,730.28 L364.22,730.24 L364.3,730.21 L364.39,730.17 L364.47,730.14 L364.55,730.1 L364.63,730.07 L364.72,730.04 L364.8,730 L364.88,729.97 L364.96,729.94 L365.05,729.91 L365.13,729.87 L365.21,729.84 L365.29,729.81 L365.37,729.78 L365.45,729.74 L365.54,729.71 L365.62,729.68 L365.7,729.65 L365.78,729.62 L365.86,729.58 L365.94,729.55 L366.02,729.52 L366.1,729.49 L366.18,729.46 L366.27,729.43 L366.35,729.4 L366.43,729.37 L366.51,729.34 L366.59,729.31 L366.67,729.28 L366.75,729.25 L366.83,729.22 L366.91,729.19 L366.99,729.16 L367.07,729.13 L367.15,729.1 L367.23,729.08 L367.31,729.05 L367.39,729.02 L367.47,728.99 L367.54,728.96 L367.62,728.93 L367.7,728.91 L367.78,728.88 L367.86,728.85 L367.94,728.82 L368.02,728.8 L368.1,728.77 L368.18,728.74 L368.25,728.72 L368.33,728.69 L368.41,728.66 L368.49,728.64 L368.57,728.61 L368.64,728.58 L368.72,728.56 L368.8,728.53 L368.88,728.51 L368.96,728.48 L369.03,728.46 L369.11,728.43 L369.19,728.4 L369.27,728.38 L369.34,728.35 L369.42,728.33 L369.5,728.31 L369.57,728.28 L369.65,728.26 L369.73,728.23 L369.8,728.21 L369.88,728.19 L369.96,728.16 L370.03,728.14 L370.11,728.11 L370.19,728.09 L370.26,728.07 L370.34,728.05 L370.41,728.02 L370.49,728 L370.56,727.98 L370.64,727.95 L370.72,727.93 L370.79,727.91 L370.87,727.89 L370.94,727.87 L371.02,727.84 L371.09,727.82 L371.17,727.8 L371.24,727.78 L371.32,727.76 L371.39,727.74 L371.47,727.72 L371.54,727.7 L371.61,727.67 L371.69,727.65 L371.76,727.63 L371.84,727.61 L371.91,727.59 L371.98,727.57 L372.06,727.55 L372.13,727.53 L372.21,727.51 L372.28,727.49 L372.35,727.47 L372.43,727.46 L372.5,727.44 L372.57,727.42 L372.65,727.4 L372.72,727.38 L372.79,727.36 L372.86,727.34 L372.94,727.32 L373.01,727.31 L373.08,727.29 L373.15,727.27 L373.23,727.25 L373.3,727.23 L373.37,727.22 L373.44,727.2 L373.51,727.18 L373.59,727.16 L373.66,727.15 L373.73,727.13 L373.8,727.11 L373.87,727.1 L373.94,727.08 L374.01,727.06 L374.09,727.05 L374.16,727.03 L374.23,727.02 L374.3,727 L374.37,726.98 L374.44,726.97 L374.51,726.95 L374.58,726.94 L374.65,726.92 L374.72,726.91 L374.79,726.89 L374.86,726.88 L374.93,726.86 L375,726.85 L375.07,726.83 L375.14,726.82 L375.21,726.8 L375.28,726.79 L375.35,726.77 L375.42,726.76 L375.49,726.75 L375.56,726.73 L375.63,726.72 L375.7,726.7 L375.76,726.69 L375.83,726.68 L375.9,726.66 L375.97,726.65 L376.04,726.64 L376.11,726.63 L376.18,726.61 L376.24,726.6 L376.31,726.59 L376.38,726.57 L376.45,726.56 L376.52,726.55 L376.58,726.54 L376.65,726.53 L376.72,726.51 L376.79,726.5 L376.85,726.49 L376.92,726.48 L376.99,726.47 L377.05,726.46 L377.12,726.44 L377.19,726.43 L377.25,726.42 L377.32,726.41 L377.39,726.4 L377.45,726.39 L377.52,726.38 L377.59,726.37 L377.65,726.36 L377.72,726.35 L377.78,726.34 L377.85,726.33 L377.92,726.32 L377.98,726.31 L378.05,726.3 L378.11,726.29 L378.18,726.28 L378.24,726.27 L378.31,726.26 L378.37,726.25 L378.44,726.24 L378.5,726.23 L378.57,726.23 L378.63,726.22 L378.7,726.21 L378.76,726.2 L378.83,726.19 L378.89,726.18 L378.95,726.17 L379.02,726.17 L379.08,726.16 L379.15,726.15 L379.21,726.14 L379.27,726.13 L379.34,726.13 L379.4,726.12 L379.46,726.11 L379.53,726.1 L379.59,726.1 L379.65,726.09 L379.72,726.08 L379.78,726.08 L379.84,726.07 L379.91,726.06 L379.97,726.06 L380.03,726.05 L380.09,726.04 L380.16,726.04 L380.22,726.03 L380.28,726.02 L380.34,726.02 L380.4,726.01 L380.47,726.01 L380.53,726 L380.59,725.99 L380.65,725.99 L380.71,725.98 L380.77,725.98 L380.84,725.97 L380.9,725.97 L380.96,725.96 L381.02,725.96 L381.08,725.95 L381.14,725.95 L381.2,725.94 L381.26,725.94 L381.32,725.93 L381.38,725.93 L381.44,725.93 L381.5,725.92 L381.56,725.92 L381.62,725.91 L381.68,725.91 L381.74,725.9 L381.8,725.9 L381.86,725.9 L381.92,725.89 L381.98,725.89 L382.04,725.89 L382.1,725.88 L382.16,725.88 L382.22,725.88 L382.28,725.87 L382.34,725.87 L382.4,725.87 L382.45,725.87 L382.51,725.86 L382.57,725.86 L382.63,725.86 L382.69,725.85 L382.75,725.85 L382.8,725.85 L382.86,725.85 L382.92,725.85 L382.98,725.84 L383.04,725.84 L383.09,725.84 L383.15,725.84 L383.21,725.84 L383.27,725.84 L383.32,725.83 L383.38,725.83 L383.44,725.83 L383.49,725.83 L383.55,725.83 L383.61,725.83 L383.67,725.83 L383.72,725.83 L383.78,725.82 L383.83,725.82 L383.89,725.82 L383.95,725.82 L384,725.82 L384.06,725.82 L384.12,725.82 L384.17,725.82 L384.23,725.82 L384.28,725.82 L384.34,725.82 L384.39,725.82 L384.45,725.82 L384.5,725.82 L384.56,725.82 L384.61,725.82 L384.67,725.82 L384.72,725.82 L384.78,725.82 L384.83,725.82 L384.89,725.82 L384.94,725.83 L385,725.83 L385.05,725.83 L385.11,725.83 L385.16,725.83 L385.21,725.83 L385.27,725.83 L385.32,725.83 L385.38,725.83 L385.43,725.84 L385.48,725.84 L385.54,725.84 L385.59,725.84 L385.64,725.84 L385.7,725.85 L385.75,725.85 L385.8,725.85 L385.86,725.85 L385.91,725.85 L385.96,725.86 L386.01,725.86 L386.07,725.86 L386.12,725.86 L386.17,725.87 L386.22,725.87 L386.28,725.87 L386.33,725.87 L386.38,725.88 L386.43,725.88 L386.48,725.88 L386.53,725.89 L386.59,725.89 L386.64,725.89 L386.69,725.9 L386.74,725.9 L386.79,725.9 L386.84,725.91 L386.89,725.91 L386.94,725.91 L387,725.92 L387.05,725.92 L387.1,725.92 L387.15,725.93 L387.2,725.93 L387.25,725.94 L387.3,725.94 L387.35,725.94 L387.4,725.95 L387.45,725.95 L387.5,725.96 L387.55,725.96 L387.6,725.97 L387.65,725.97 L387.7,725.97 L387.75,725.98 L387.8,725.98 L387.85,725.99 L387.9,725.99 L387.94,726 L387.99,726 L388.04,726.01 L388.09,726.01 L388.14,726.02 L388.19,726.02 L388.24,726.03 L388.29,726.04 L388.33,726.04 L388.38,726.05 L388.43,726.05 L388.48,726.06 L388.53,726.06 L388.57,726.07 L388.62,726.08 L388.67,726.08 L388.72,726.09 L388.77,726.09 L388.81,726.1 L388.86,726.11 L388.91,726.11 L388.95,726.12 L389,726.12 L389.05,726.13 L389.1,726.14 L389.14,726.14 L389.19,726.15 L389.24,726.16 L389.28,726.16 L389.33,726.17 L389.37,726.18 L389.42,726.18 L389.47,726.19 L389.51,726.2 L389.56,726.2 L389.61,726.21 L389.65,726.22 L389.7,726.23 L389.74,726.23 L389.79,726.24 L389.83,726.25 L389.88,726.26 L389.92,726.26 L389.97,726.27 L390.01,726.28 L390.06,726.29 L390.1,726.29 L390.15,726.3 L390.19,726.31 L390.24,726.32 L390.28,726.33 L390.33,726.33 L390.37,726.34 L390.42,726.35 L390.46,726.36 L390.5,726.37 L390.55,726.37 L390.59,726.38 L390.64,726.39 L390.68,726.4 L390.72,726.41 L390.77,726.42 L390.81,726.43 L390.85,726.43 L390.9,726.44 L390.94,726.45 L390.98,726.46 L391.03,726.47 L391.07,726.48 L391.11,726.49 L391.16,726.5 L391.2,726.5 L391.24,726.51 L391.28,726.52 L391.33,726.53 L391.37,726.54 L391.41,726.55 L391.45,726.56 L391.5,726.57 L391.54,726.58 L391.58,726.59 L391.62,726.6 L391.66,726.61 L391.7,726.62 L391.75,726.63 L391.79,726.64 L391.83,726.65 L391.87,726.66 L391.91,726.67 L391.95,726.68 L391.99,726.69 L392.03,726.7 L392.08,726.71 L392.12,726.72 L392.16,726.73 L392.2,726.74 L392.24,726.75 L392.28,726.76 L392.32,726.77 L392.36,726.78 L392.4,726.79 L392.44,726.8 L392.48,726.81 L392.52,726.82 L392.56,726.83 L392.6,726.84 L392.64,726.85 L392.68,726.86 L392.72,726.87 L392.76,726.88 L392.8,726.9 L392.84,726.91 L392.87,726.92 L392.91,726.93 L392.95,726.94 L392.99,726.95 L393.03,726.96 L393.07,726.97 L393.11,726.98 L393.15,727 L393.18,727.01 L393.22,727.02 L393.26,727.03 L393.3,727.04 L393.34,727.05 L393.38,727.06 L393.41,727.08 L393.45,727.09 L393.49,727.1 L393.53,727.11 L393.56,727.12 L393.6,727.13 L393.64,727.15 L393.68,727.16 L393.71,727.17 L393.75,727.18 L393.79,727.19 L393.83,727.21 L393.86,727.22 L393.9,727.23 L393.94,727.24 L393.97,727.25 L394.01,727.27 L394.05,727.28 L394.08,727.29 L394.12,727.3 L394.16,727.32 L394.19,727.33 L394.23,727.34 L394.26,727.35 L394.3,727.37 L394.34,727.38 L394.37,727.39 L394.41,727.4 L394.44,727.42 L394.48,727.43 L394.51,727.44 L394.55,727.45 L394.58,727.47 L394.62,727.48 L394.66,727.49 L394.69,727.51 L394.73,727.52 L394.76,727.53 L394.79,727.55 L394.83,727.56 L394.86,727.57 L394.9,727.58 L394.93,727.6 L394.97,727.61 L395,727.62 L395.04,727.64 L395.07,727.65 L395.1,727.66 L395.14,727.68 L395.17,727.69 L395.21,727.7 L395.24,727.72 L395.27,727.73 L395.31,727.74 L395.34,727.76 L395.37,727.77 L395.41,727.79 L395.44,727.8 L395.47,727.81 L395.51,727.83 L395.54,727.84 L395.57,727.85 L395.61,727.87 L395.64,727.88 L395.67,727.9 L395.7,727.91 L395.74,727.92 L395.77,727.94 L395.8,727.95 L395.83,727.97 L395.87,727.98 L395.9,727.99 L395.93,728.01 L395.96,728.02 L395.99,728.04 L396.03,728.05 L396.06,728.07 L396.09,728.08 L396.12,728.09 L396.15,728.11 L396.18,728.12 L396.22,728.14 L396.25,728.15 L396.28,728.17 L396.31,728.18 L396.34,728.19 L396.37,728.21 L396.4,728.22 L396.43,728.24 L396.46,728.25 L396.49,728.27 L396.52,728.28 L396.56,728.3 L396.59,728.31 L396.62,728.33 L396.65,728.34 L396.68,728.36 L396.71,728.37 L396.74,728.39 L396.77,728.4 L396.8,728.42 L396.83,728.43 L396.86,728.45 L396.89,728.46 L396.92,728.48 L396.94,728.49 L396.97,728.51 L397,728.52 L397.03,728.54 L397.06,728.55 L397.09,728.57 L397.12,728.58 L397.15,728.6 L397.18,728.61 L397.21,728.63 L397.24,728.64 L397.26,728.66 L397.29,728.67 L397.32,728.69 L397.35,728.7 L397.38,728.72 L397.41,728.73 L397.43,728.75 L397.46,728.77 L397.49,728.78 L397.52,728.8 L397.55,728.81 L397.57,728.83 L397.6,728.84 L397.63,728.86 L397.66,728.87 L397.69,728.89 L397.71,728.91 L397.74,728.92 L397.77,728.94 L397.79,728.95 L397.82,728.97 L397.85,728.98 L397.88,729 L397.9,729.02 L397.93,729.03 L397.96,729.05 L397.98,729.06 L398.01,729.08 L398.04,729.1 L398.06,729.11 L398.09,729.13 L398.12,729.14 L398.14,729.16 L398.17,729.18 L398.19,729.19 L398.22,729.21 L398.25,729.22 L398.27,729.24 L398.3,729.26 L398.32,729.27 L398.35,729.29 L398.37,729.31 L398.4,729.32 L398.43,729.34 L398.45,729.35 L398.48,729.37 L398.5,729.39 L398.53,729.4 L398.55,729.42 L398.58,729.44 L398.6,729.45 L398.63,729.47 L398.65,729.48 L398.68,729.5 L398.7,729.52 L398.73,729.53 L398.75,729.55 L398.77,729.57 L398.8,729.58 L398.82,729.6 L398.85,729.62 L398.87,729.63 L398.9,729.65 L398.92,729.67 L398.94,729.68 L398.97,729.7 L398.99,729.72 L399.02,729.73 L399.04,729.75 L399.06,729.77 L399.09,729.78 L399.11,729.8 L399.13,729.82 L399.16,729.83 L399.18,729.85 L399.2,729.87 L399.23,729.88 L399.25,729.9 L399.27,729.92 L399.29,729.93 L399.32,729.95 L399.34,729.97 L399.36,729.98 L399.39,730 L399.41,730.02 L399.43,730.03 L399.45,730.05 L399.48,730.07 L399.5,730.09 L399.52,730.1 L399.54,730.12 L399.56,730.14 L399.59,730.15 L399.61,730.17 L399.63,730.19 L399.65,730.2 L399.67,730.22 L399.69,730.24 L399.72,730.26 L399.74,730.27 L399.76,730.29 L399.78,730.31 L399.8,730.32 L399.82,730.34 L399.84,730.36 L399.86,730.38 L399.89,730.39 L399.91,730.41 L399.93,730.43 L399.95,730.44 L399.97,730.46 L399.99,730.48 L400.01,730.5 L400.03,730.51 L400.05,730.53 L400.07,730.55 L400.09,730.56 L400.11,730.58 L400.13,730.6 L400.15,730.62 L400.17,730.63 L400.19,730.65 L400.21,730.67 L400.23,730.69 L400.25,730.7 L400.27,730.72 L400.29,730.74 L400.31,730.76 L400.33,730.77 L400.35,730.79 L400.37,730.81 L400.39,730.82 L400.41,730.84 L400.43,730.86 L400.45,730.88 L400.47,730.89 L400.48,730.91 L400.5,730.93 L400.52,730.95 L400.54,730.96 L400.56,730.98 L400.58,731 L400.6,731.02 L400.62,731.03 L400.63,731.05 L400.65,731.07 L400.67,731.09 L400.69,731.1 L400.71,731.12 L400.73,731.14 L400.74,731.16 L400.76,731.17 L400.78,731.19 L400.8,731.21 L400.82,731.23 L400.83,731.25 L400.85,731.26 L400.87,731.28 L400.89,731.3 L400.9,731.32 L400.92,731.33 L400.94,731.35 L400.96,731.37 L400.97,731.39 L400.99,731.4 L401.01,731.42 L401.02,731.44 L401.04,731.46 L401.06,731.47 L401.07,731.49 L401.09,731.51 L401.11,731.53 L401.12,731.54 L401.14,731.56 L401.16,731.58 L401.17,731.6 L401.19,731.62 L401.21,731.63 L401.22,731.65 L401.24,731.67 L401.26,731.69 L401.27,731.7 L401.29,731.72 L401.3,731.74 L401.32,731.76 L401.34,731.78 L401.35,731.79 L401.37,731.81 L401.38,731.83 L401.4,731.85 L401.41,731.86 L401.43,731.88 L401.44,731.9 L401.46,731.92 L401.47,731.93 L401.49,731.95 L401.51,731.97 L401.52,731.99 L401.54,732.01 L401.55,732.02 L401.57,732.04 L401.58,732.06 L401.59,732.08 L401.61,732.09 L401.62,732.11 L401.64,732.13 L401.65,732.15 L401.67,732.17 L401.68,732.18 L401.7,732.2 L401.71,732.22 L401.72,732.24 L401.74,732.25 L401.75,732.27 L401.77,732.29 L401.78,732.31 L401.79,732.33 L401.81,732.34 L401.82,732.36 L401.84,732.38 L401.85,732.4 L401.86,732.41 L401.88,732.43 L401.89,732.45 L401.9,732.47 L401.92,732.49 L401.93,732.5 L401.94,732.52 L401.96,732.54 L401.97,732.56 L401.98,732.57 L402,732.59 L402.01,732.61 L402.02,732.63 L402.03,732.65 L402.05,732.66 L402.06,732.68 L402.07,732.7 L402.09,732.72 L402.1,732.73 L402.11,732.75 L402.12,732.77 L402.14,732.79 L402.15,732.81 L402.16,732.82 L402.17,732.84 L402.18,732.86 L402.2,732.88 L402.21,732.89 L402.22,732.91 L402.23,732.93 L402.24,732.95 L402.26,732.96 L402.27,732.98 L402.28,733 L402.29,733.02 L402.3,733.04 L402.31,733.05 L402.33,733.07 L402.34,733.09 L402.35,733.11 L402.36,733.12 L402.37,733.14 L402.38,733.16 L402.39,733.18 L402.4,733.19 L402.41,733.21 L402.43,733.23 L402.44,733.25 L402.45,733.27 L402.46,733.28 L402.47,733.3 L402.48,733.32 L402.49,733.34 L402.5,733.35 L402.51,733.37 L402.52,733.39 L402.53,733.41 L402.54,733.42 L402.55,733.44 L402.56,733.46 L402.57,733.48 L402.58,733.49 L402.59,733.51 L402.6,733.53 L402.61,733.55 L402.62,733.56 L402.63,733.58 L402.64,733.6 L402.65,733.62 L402.66,733.63 L402.67,733.65 L402.68,733.67 L402.69,733.69 L402.7,733.7 L402.71,733.72 L402.72,733.74 L402.73,733.76 L402.73,733.77 L402.74,733.79 L402.75,733.81 L402.76,733.83 L402.77,733.84 L402.78,733.86 L402.79,733.88 L402.8,733.9 L402.81,733.91 L402.81,733.93 L402.82,733.95 L402.83,733.97 L402.84,733.98 L402.85,734 L402.86,734.02 L402.87,734.04 L402.87,734.05 L402.88,734.07 L402.89,734.09 L402.9,734.11 L402.91,734.12 L402.91,734.14 L402.92,734.16 L402.93,734.17 L402.94,734.19 L402.95,734.21 L402.95,734.23 L402.96,734.24 L402.97,734.26 L402.98,734.28 L402.98,734.3 L402.99,734.31 L403,734.33 L403.01,734.35 L403.01,734.36 L403.02,734.38 L403.03,734.4 L403.04,734.42 L403.04,734.43 L403.05,734.45 L403.06,734.47 L403.06,734.48 L403.07,734.5 L403.08,734.52 L403.08,734.54 L403.09,734.55 L403.1,734.57 L403.1,734.59 L403.11,734.6 L403.12,734.62 L403.12,734.64 L403.13,734.65 L403.14,734.67 L403.14,734.69 L403.15,734.71 L403.16,734.72 L403.16,734.74 L403.17,734.76 L403.17,734.77 L403.18,734.79 L403.19,734.81 L403.19,734.82 L403.2,734.84 L403.2,734.86 L403.21,734.87 L403.21,734.89 L403.22,734.91 L403.23,734.93 L403.23,734.94 L403.24,734.96 L403.24,734.98 L403.25,734.99 L403.25,735.01 L403.26,735.03 L403.26,735.04 L403.27,735.06 L403.27,735.08 L403.28,735.09 L403.28,735.11 L403.29,735.13 L403.29,735.14 L403.3,735.16 L403.3,735.18 L403.31,735.19 L403.31,735.21 L403.32,735.23 L403.32,735.24 L403.33,735.26 L403.33,735.28 L403.34,735.29 L403.34,735.31 L403.35,735.32 L403.35,735.34 L403.35,735.36 L403.36,735.37 L403.36,735.39 L403.37,735.41 L403.37,735.42 L403.37,735.44 L403.38,735.46 L403.38,735.47 L403.39,735.49 L403.39,735.5 L403.39,735.52 L403.4,735.54 L403.4,735.55 L403.41,735.57 L403.41,735.59 L403.41,735.6 L403.42,735.62 L403.42,735.63 L403.42,735.65 L403.43,735.67 L403.43,735.68 L403.43,735.7 L403.44,735.72 L403.44,735.73 L403.44,735.75 L403.45,735.76 L403.45,735.78 L403.45,735.8 L403.46,735.81 L403.46,735.83 L403.46,735.84 L403.46,735.86 L403.47,735.88 L403.47,735.89 L403.47,735.91 L403.47,735.92 L403.48,735.94 L403.48,735.95 L403.48,735.97 L403.48,735.99 L403.49,736 L403.49,736.02 L403.49,736.03 L403.49,736.05 L403.5,736.07 L403.5,736.08 L403.5,736.1 L403.5,736.11 L403.5,736.13 L403.51,736.14 L403.51,736.16 L403.51,736.17 L403.51,736.19 L403.51,736.21 L403.52,736.22 L403.52,736.24 L403.52,736.25 L403.52,736.27 L403.52,736.28 L403.52,736.3 L403.53,736.31 L403.53,736.33 L403.53,736.34 L403.53,736.36 L403.53,736.38 L403.53,736.39 L403.53,736.41 L403.54,736.42 L403.54,736.44 L403.54,736.45 L403.54,736.47 L403.54,736.48 L403.54,736.5 L403.54,736.51 L403.54,736.53 L403.54,736.54 L403.54,736.56 L403.54,736.57 L403.55,736.59 L403.55,736.6 L403.55,736.62 L403.55,736.63 L403.55,736.65 L403.55,736.66 L403.55,736.68 L403.55,736.69 L403.55,736.71 L403.55,736.72 L403.55,736.74 L403.55,736.75 L403.55,736.77 L403.55,736.78 L403.55,736.8 L403.55,736.81 L403.55,736.83 L403.55,736.84 L403.55,736.85 L403.55,736.87 L403.55,736.88 L403.55,736.9 L403.55,736.91 L403.55,736.93 L403.55,736.94 L403.55,736.96 L403.55,736.97 L403.55,736.99 L403.55,737 L403.55,737.01 L403.55,737.03 L403.55,737.04 L403.55,737.06 L403.55,737.07 L403.55,737.09 L403.54,737.1 L403.54,737.11 L403.54,737.13 L403.54,737.14 L403.54,737.16 L403.54,737.17 L403.54,737.19 L403.54,737.2 L403.54,737.21 L403.54,737.23 L403.53,737.24 L403.53,737.26 L403.53,737.27 L403.53,737.28 L403.53,737.3 L403.53,737.31 L403.53,737.32 L403.53,737.34 L403.52,737.35 L403.52,737.37 L403.52,737.38 L403.52,737.39 L403.52,737.41 L403.52,737.42 L403.51,737.43 L403.51,737.45 L403.51,737.46 L403.51,737.48 L403.51,737.49 L403.51,737.5 L403.5,737.52 L403.5,737.53 L403.5,737.54 L403.5,737.56 L403.5,737.57 L403.49,737.58 L403.49,737.6 L403.49,737.61 L403.49,737.62 L403.49,737.64 L403.48,737.65 L403.48,737.66 L403.48,737.68 L403.48,737.69 L403.47,737.7 L403.47,737.72 L403.47,737.73 L403.47,737.74 L403.46,737.75 L403.46,737.77 L403.46,737.78 L403.46,737.79 L403.45,737.81 L403.45,737.82 L403.45,737.83 L403.44,737.84 L403.44,737.86 L403.44,737.87 L403.44,737.88 L403.43,737.9 L403.43,737.91 L403.43,737.92 L403.42,737.93 L403.42,737.95 L403.42,737.96 L403.41,737.97 L403.41,737.98 L403.41,738 L403.4,738.01 L403.4,738.02 L403.4,738.03 L403.39,738.05 L403.39,738.06 L403.39,738.07 L403.38,738.08 L403.38,738.1 L403.38,738.11 L403.37,738.12 L403.37,738.13 L403.37,738.14 L403.36,738.16 L403.36,738.17 L403.35,738.18 L403.35,738.19 L403.35,738.2 L403.34,738.22 L403.34,738.23 L403.34,738.24 L403.33,738.25 L403.33,738.26 L403.32,738.28 L403.32,738.29 L403.32,738.3 L403.31,738.31 L403.31,738.32 L403.3,738.33 L403.3,738.35 L403.29,738.36 L403.29,738.37 L403.29,738.38 L403.28,738.39 L403.28,738.4 L403.27,738.41 L403.27,738.43 L403.26,738.44 L403.26,738.45 L403.26,738.46 L403.25,738.47 L403.25,738.48 L403.24,738.49 L403.24,738.5 L403.23,738.52 L403.23,738.53 L403.22,738.54 L403.22,738.55 L403.21,738.56 L403.21,738.57 L403.2,738.58 L403.2,738.59 L403.19,738.6 L403.19,738.61 L403.18,738.63 L403.18,738.64 L403.17,738.65 L403.17,738.66 L403.16,738.67 L403.16,738.68 L403.15,738.69 L403.15,738.7 L403.14,738.71 L403.14,738.72 L403.13,738.73 L403.13,738.74 L403.12,738.75 L403.12,738.76 L403.11,738.77 L403.11,738.78 L403.1,738.79 L403.1,738.8 L403.09,738.81 L403.08,738.82 L403.08,738.84 L403.07,738.85 L403.07,738.86 L403.06,738.87 L403.06,738.88 L403.05,738.89 L403.05,738.9 L403.04,738.91 L403.03,738.92 L403.03,738.93 L403.02,738.93 L403.02,738.94 L403.01,738.95 L403,738.96 L403,738.97 L402.99,738.98 L402.99,738.99 L402.98,739 L402.98,739.01 L402.97,739.02 L402.96,739.03 L402.96,739.04 L402.95,739.05 L402.94,739.06 L402.94,739.07 L402.93,739.08 L402.93,739.09 L402.92,739.1 L402.91,739.11 L402.91,739.11 L402.9,739.12 L402.9,739.13 L402.89,739.14 L402.88,739.15 L402.88,739.16 L402.87,739.17 L402.86,739.18 L402.86,739.19 L402.85,739.2 L402.84,739.2 L402.84,739.21 L402.83,739.22 L402.82,739.23 L402.82,739.24 L402.81,739.25 L402.8,739.26 L402.8,739.26 L402.79,739.27 L402.78,739.28 L402.78,739.29 L402.77,739.3 L402.76,739.31 L402.76,739.32 L402.75,739.32 L402.74,739.33 L402.74,739.34 L402.73,739.35 L402.72,739.36 L402.72,739.36 L402.71,739.37 L402.7,739.38 L402.7,739.39 L402.69,739.4 L402.68,739.4 L402.67,739.41 L402.67,739.42 L402.66,739.43 L402.65,739.44 L402.65,739.44 L402.64,739.45 L402.63,739.46 L402.63,739.47 L402.62,739.47 L402.61,739.48 L402.6,739.49 L402.6,739.5 L402.59,739.5 L402.58,739.51 L402.58,739.52 L402.57,739.53 L402.56,739.53 L402.55,739.54 L402.55,739.55 L402.54,739.56 L402.53,739.56 L402.52,739.57 L402.52,739.58 L402.51,739.58 L402.5,739.59 L402.49,739.6 L402.49,739.6 L402.48,739.61 L402.47,739.62 L402.46,739.62 L402.46,739.63 L402.45,739.64 L402.44,739.64 L402.43,739.65 L402.43,739.66 L402.42,739.66 L402.41,739.67 L402.4,739.68 L402.4,739.68 L402.39,739.69 L402.38,739.7 L402.37,739.7 L402.37,739.71 L402.36,739.72 L402.35,739.72 L402.34,739.73 L402.33,739.73 L402.33,739.74 L402.32,739.75 L402.31,739.75 L402.3,739.76 L402.3,739.76 L402.29,739.77 L402.28,739.78 L402.27,739.78 L402.26,739.79 L402.26,739.79 L402.25,739.8 L402.24,739.8 L402.23,739.81 L402.22,739.82 L402.22,739.82 L402.21,739.83 L402.2,739.83 L402.19,739.84 L402.18,739.84 L402.18,739.85 L402.17,739.85 L402.16,739.86 L402.15,739.86 L402.14,739.87 L402.14,739.87 L402.13,739.88 L402.12,739.88 L402.11,739.89 L402.1,739.89 L402.1,739.9 L402.09,739.9 L402.08,739.91 L402.07,739.91 L402.06,739.92 L402.06,739.92 L402.05,739.93 L402.04,739.93 L402.03,739.94 L402.02,739.94 L402.02,739.95 L402.01,739.95 L402,739.96 L401.99,739.96 L401.98,739.96 L401.97,739.97 L401.97,739.97 L401.96,739.98 L401.95,739.98 L401.94,739.99 L401.93,739.99 L401.93,739.99 L401.92,740 L401.91,740 L401.9,740.01 L401.89,740.01 L401.88,740.01 L401.88,740.02 L401.87,740.02 L401.86,740.03 L401.85,740.03 L401.84,740.03 L401.83,740.04 L401.83,740.04 L401.82,740.04 L401.81,740.05 L401.8,740.05 L401.79,740.05 L401.78,740.06 L401.78,740.06 L401.77,740.06 L401.76,740.07 L401.75,740.07 L401.74,740.07 L401.73,740.08 L401.73,740.08 L401.72,740.08 L401.71,740.09 L401.7,740.09 L401.69,740.09 L401.68,740.1 L401.68,740.1 L401.67,740.1 L401.66,740.1 L401.65,740.11 L401.64,740.11 L401.63,740.11 L401.63,740.11 L401.62,740.12 L401.61,740.12 L401.6,740.12 L401.59,740.13 L401.58,740.13 L401.58,740.13 L401.57,740.13 L401.56,740.13 L401.55,740.14 L401.54,740.14 L401.53,740.14 L401.53,740.14 L401.52,740.15 L401.51,740.15 L401.5,740.15 L401.49,740.15 L401.49,740.15 L401.48,740.16 L401.47,740.16 L401.46,740.16 L401.45,740.16 L401.44,740.16 L401.44,740.17 L401.43,740.17 L401.42,740.17 L401.41,740.17 L401.4,740.17 L401.39,740.17 L401.39,740.17 L401.38,740.18 L401.37,740.18 L401.36,740.18 L401.35,740.18 L401.34,740.18 L401.34,740.18 L401.33,740.18 L401.32,740.19 L401.31,740.19 L401.3,740.19 L401.29,740.19 L401.29,740.19 L401.28,740.19 L401.27,740.19 L401.26,740.19 L401.25,740.19 L401.25,740.19 L401.24,740.2 L401.23,740.2 L401.22,740.2 L401.21,740.2 L401.21,740.2 L401.2,740.2 L401.19,740.2 L401.18,740.2 L401.17,740.2 L401.16,740.2 L401.16,740.2 L401.15,740.2 L401.14,740.2 L401.13,740.2 L401.12,740.2 L401.12,740.2 L401.11,740.2 L401.1,740.2 L401.09,740.2 L401.08,740.2 L401.08,740.2 L401.07,740.2 L401.06,740.2 L401.05,740.2 L401.04,740.2 L401.04,740.2 L401.03,740.2 L401.02,740.2 L401.01,740.2 L401,740.2 L401,740.2 L400.99,740.2 L400.98,740.2 L400.97,740.2 L400.97,740.2 L400.96,740.2 L400.95,740.2 L400.94,740.2 L400.93,740.2" fill="none" stroke="#1f3ccf" stroke-width="1.9" clip-path="url(#cn)"/>
<path d="M298.21,1079.88 L298.23,1079.43 L298.24,1078.98 L298.26,1078.53 L298.28,1078.08 L298.3,1077.63 L298.32,1077.18 L298.34,1076.74 L298.36,1076.29 L298.38,1075.84 L298.4,1075.4 L298.42,1074.95 L298.44,1074.5 L298.46,1074.06 L298.48,1073.62 L298.5,1073.17 L298.52,1072.73 L298.54,1072.29 L298.56,1071.84 L298.58,1071.4 L298.6,1070.96 L298.62,1070.52 L298.64,1070.08 L298.66,1069.64 L298.68,1069.2 L298.7,1068.76 L298.72,1068.32 L298.74,1067.88 L298.76,1067.44 L298.78,1067 L298.8,1066.57 L298.82,1066.13 L298.84,1065.69 L298.86,1065.26 L298.88,1064.82 L298.9,1064.39 L298.92,1063.95 L298.94,1063.52 L298.96,1063.09 L298.98,1062.65 L299,1062.22 L299.02,1061.79 L299.04,1061.36 L299.06,1060.93 L299.09,1060.49 L299.11,1060.06 L299.13,1059.63 L299.15,1059.2 L299.17,1058.77 L299.19,1058.35 L299.21,1057.92 L299.23,1057.49 L299.25,1057.06 L299.27,1056.64 L299.3,1056.21 L299.32,1055.78 L299.34,1055.36 L299.36,1054.93 L299.38,1054.51 L299.4,1054.08 L299.42,1053.66 L299.44,1053.24 L299.47,1052.81 L299.49,1052.39 L299.51,1051.97 L299.53,1051.55 L299.55,1051.12 L299.57,1050.7 L299.6,1050.28 L299.62,1049.86 L299.64,1049.44 L299.66,1049.02 L299.68,1048.61 L299.71,1048.19 L299.73,1047.77 L299.75,1047.35 L299.77,1046.93 L299.79,1046.52 L299.82,1046.1 L299.84,1045.69 L299.86,1045.27 L299.88,1044.86 L299.9,1044.44 L299.93,1044.03 L299.95,1043.61 L299.97,1043.2 L299.99,1042.79 L300.02,1042.38 L300.04,1041.96 L300.06,1041.55 L300.08,1041.14 L300.11,1040.73 L300.13,1040.32 L300.15,1039.91 L300.18,1039.5 L300.2,1039.09 L300.22,1038.68 L300.24,1038.27 L300.27,1037.87 L300.29,1037.46 L300.31,1037.05 L300.34,1036.65 L300.36,1036.24 L300.38,1035.83 L300.41,1035.43 L300.43,1035.02 L300.45,1034.62 L300.48,1034.22 L300.5,1033.81 L300.52,1033.41 L300.55,1033.01 L300.57,1032.6 L300.59,1032.2 L300.62,1031.8 L300.64,1031.4 L300.66,1031 L300.69,1030.6 L300.71,1030.2 L300.73,1029.8 L300.76,1029.4 L300.78,1029 L300.81,1028.6 L300.83,1028.2 L300.85,1027.81 L300.88,1027.41 L300.9,1027.01 L300.93,1026.62 L300.95,1026.22 L300.97,1025.82 L301,1025.43 L301.02,1025.03 L301.05,1024.64 L301.07,1024.25 L301.1,1023.85 L301.12,1023.46 L301.15,1023.07 L301.17,1022.67 L301.19,1022.28 L301.22,1021.89 L301.24,1021.5 L301.27,1021.11 L301.29,1020.72 L301.32,1020.33 L301.34,1019.94 L301.37,1019.55 L301.39,1019.16 L301.42,1018.77 L301.44,1018.39 L301.47,1018 L301.49,1017.61 L301.52,1017.22 L301.54,1016.84 L301.57,1016.45 L301.59,1016.07 L301.62,1015.68 L301.65,1015.3 L301.67,1014.91 L301.7,1014.53 L301.72,1014.14 L301.75,1013.76 L301.77,1013.38 L301.8,1013 L301.82,1012.61 L301.85,1012.23 L301.88,1011.85 L301.9,1011.47 L301.93,1011.09 L301.95,1010.71 L301.98,1010.33 L302.01,1009.95 L302.03,1009.57 L302.06,1009.19 L302.08,1008.82 L302.11,1008.44 L302.14,1008.06 L302.16,1007.68 L302.19,1007.31 L302.22,1006.93 L302.24,1006.55 L302.27,1006.18 L302.3,1005.8 L302.32,1005.43 L302.35,1005.06 L302.37,1004.68 L302.4,1004.31 L302.43,1003.93 L302.46,1003.56 L302.48,1003.19 L302.51,1002.82 L302.54,1002.45 L302.56,1002.07 L302.59,1001.7 L302.62,1001.33 L302.64,1000.96 L302.67,1000.59 L302.7,1000.22 L302.73,999.85 L302.75,999.49 L302.78,999.12 L302.81,998.75 L302.84,998.38 L302.86,998.02 L302.89,997.65 L302.92,997.28 L302.95,996.92 L302.97,996.55 L303,996.19 L303.03,995.82 L303.06,995.46 L303.08,995.09 L303.11,994.73 L303.14,994.36 L303.17,994 L303.2,993.64 L303.22,993.28 L303.25,992.91 L303.28,992.55 L303.31,992.19 L303.34,991.83 L303.37,991.47 L303.39,991.11 L303.42,990.75 L303.45,990.39 L303.48,990.03 L303.51,989.67 L303.54,989.32 L303.57,988.96 L303.59,988.6 L303.62,988.24 L303.65,987.89 L303.68,987.53 L303.71,987.17 L303.74,986.82 L303.77,986.46 L303.8,986.11 L303.83,985.75 L303.86,985.4 L303.89,985.05 L303.91,984.69 L303.94,984.34 L303.97,983.99 L304,983.63 L304.03,983.28 L304.06,982.93 L304.09,982.58 L304.12,982.23 L304.15,981.88 L304.18,981.53 L304.21,981.18 L304.24,980.83 L304.27,980.48 L304.3,980.13 L304.33,979.78 L304.36,979.43 L304.39,979.08 L304.42,978.74 L304.45,978.39 L304.48,978.04 L304.51,977.7 L304.54,977.35 L304.57,977.01 L304.6,976.66 L304.63,976.32 L304.66,975.97 L304.69,975.63 L304.72,975.28 L304.75,974.94 L304.78,974.6 L304.82,974.25 L304.85,973.91 L304.88,973.57 L304.91,973.23 L304.94,972.89 L304.97,972.54 L305,972.2 L305.03,971.86 L305.06,971.52 L305.09,971.18 L305.13,970.84 L305.16,970.51 L305.19,970.17 L305.22,969.83 L305.25,969.49 L305.28,969.15 L305.31,968.82 L305.35,968.48 L305.38,968.14 L305.41,967.81 L305.44,967.47 L305.47,967.13 L305.5,966.8 L305.54,966.46 L305.57,966.13 L305.6,965.8 L305.63,965.46 L305.67,965.13 L305.7,964.8 L305.73,964.46 L305.76,964.13 L305.79,963.8 L305.83,963.47 L305.86,963.14 L305.89,962.8 L305.92,962.47 L305.96,962.14 L305.99,961.81 L306.02,961.48 L306.05,961.15 L306.09,960.83 L306.12,960.5 L306.15,960.17 L306.19,959.84 L306.22,959.51 L306.25,959.19 L306.29,958.86 L306.32,958.53 L306.35,958.21 L306.38,957.88 L306.42,957.55 L306.45,957.23 L306.48,956.9 L306.52,956.58 L306.55,956.25 L306.59,955.93 L306.62,955.61 L306.65,955.28 L306.69,954.96 L306.72,954.64 L306.75,954.32 L306.79,953.99 L306.82,953.67 L306.86,953.35 L306.89,953.03 L306.92,952.71 L306.96,952.39 L306.99,952.07 L307.03,951.75 L307.06,951.43 L307.1,951.11 L307.13,950.79 L307.16,950.47 L307.2,950.16 L307.23,949.84 L307.27,949.52 L307.3,949.2 L307.34,948.89 L307.37,948.57 L307.41,948.26 L307.44,947.94 L307.48,947.63 L307.51,947.31 L307.55,947 L307.58,946.68 L307.62,946.37 L307.65,946.05 L307.69,945.74 L307.72,945.43 L307.76,945.11 L307.79,944.8 L307.83,944.49 L307.86,944.18 L307.9,943.87 L307.94,943.56 L307.97,943.24 L308.01,942.93 L308.04,942.62 L308.08,942.31 L308.11,942 L308.15,941.7 L308.19,941.39 L308.22,941.08 L308.26,940.77 L308.3,940.46 L308.33,940.15 L308.37,939.85 L308.4,939.54 L308.44,939.23 L308.48,938.93 L308.51,938.62 L308.55,938.32 L308.59,938.01 L308.62,937.71 L308.66,937.4 L308.7,937.1 L308.73,936.79 L308.77,936.49 L308.81,936.19 L308.84,935.88 L308.88,935.58 L308.92,935.28 L308.96,934.98 L308.99,934.67 L309.03,934.37 L309.07,934.07 L309.1,933.77 L309.14,933.47 L309.18,933.17 L309.22,932.87 L309.25,932.57 L309.29,932.27 L309.33,931.97 L309.37,931.67 L309.41,931.37 L309.44,931.08 L309.48,930.78 L309.52,930.48 L309.56,930.18 L309.59,929.89 L309.63,929.59 L309.67,929.29 L309.71,929 L309.75,928.7 L309.79,928.41 L309.82,928.11 L309.86,927.82 L309.9,927.52 L309.94,927.23 L309.98,926.94 L310.02,926.64 L310.06,926.35 L310.09,926.06 L310.13,925.77 L310.17,925.47 L310.21,925.18 L310.25,924.89 L310.29,924.6 L310.33,924.31 L310.37,924.02 L310.41,923.73 L310.45,923.44 L310.49,923.15 L310.52,922.86 L310.56,922.57 L310.6,922.28 L310.64,921.99 L310.68,921.7 L310.72,921.42 L310.76,921.13 L310.8,920.84 L310.84,920.55 L310.88,920.27 L310.92,919.98 L310.96,919.7 L311,919.41 L311.04,919.12 L311.08,918.84 L311.12,918.55 L311.16,918.27 L311.2,917.99 L311.24,917.7 L311.28,917.42 L311.32,917.14 L311.36,916.85 L311.4,916.57 L311.45,916.29 L311.49,916.01 L311.53,915.72 L311.57,915.44 L311.61,915.16 L311.65,914.88 L311.69,914.6 L311.73,914.32 L311.77,914.04 L311.81,913.76 L311.85,913.48 L311.9,913.2 L311.94,912.92 L311.98,912.64 L312.02,912.37 L312.06,912.09 L312.1,911.81 L312.14,911.53 L312.19,911.26 L312.23,910.98 L312.27,910.7 L312.31,910.43 L312.35,910.15 L312.4,909.88 L312.44,909.6 L312.48,909.33 L312.52,909.05 L312.56,908.78 L312.61,908.5 L312.65,908.23 L312.69,907.96 L312.73,907.68 L312.77,907.41 L312.82,907.14 L312.86,906.87 L312.9,906.6 L312.94,906.32 L312.99,906.05 L313.03,905.78 L313.07,905.51 L313.12,905.24 L313.16,904.97 L313.2,904.7 L313.24,904.43 L313.29,904.16 L313.33,903.89 L313.37,903.62 L313.42,903.36 L313.46,903.09 L313.5,902.82 L313.55,902.55 L313.59,902.29 L313.63,902.02 L313.68,901.75 L313.72,901.49 L313.77,901.22 L313.81,900.95 L313.85,900.69 L313.9,900.42 L313.94,900.16 L313.98,899.89 L314.03,899.63 L314.07,899.37 L314.12,899.1 L314.16,898.84 L314.2,898.58 L314.25,898.31 L314.29,898.05 L314.34,897.79 L314.38,897.53 L314.43,897.26 L314.47,897 L314.52,896.74 L314.56,896.48 L314.61,896.22 L314.65,895.96 L314.69,895.7 L314.74,895.44 L314.78,895.18 L314.83,894.92 L314.87,894.66 L314.92,894.4 L314.96,894.15 L315.01,893.89 L315.06,893.63 L315.1,893.37 L315.15,893.12 L315.19,892.86 L315.24,892.6 L315.28,892.35 L315.33,892.09 L315.37,891.84 L315.42,891.58 L315.47,891.33 L315.51,891.07 L315.56,890.82 L315.6,890.56 L315.65,890.31 L315.69,890.05 L315.74,889.8 L315.79,889.55 L315.83,889.29 L315.88,889.04 L315.93,888.79 L315.97,888.54 L316.02,888.29 L316.06,888.04 L316.11,887.78 L316.16,887.53 L316.2,887.28 L316.25,887.03 L316.3,886.78 L316.34,886.53 L316.39,886.28 L316.44,886.03 L316.49,885.79 L316.53,885.54 L316.58,885.29 L316.63,885.04 L316.67,884.79 L316.72,884.55 L316.77,884.3 L316.82,884.05 L316.86,883.8 L316.91,883.56 L316.96,883.31 L317.01,883.07 L317.05,882.82 L317.1,882.58 L317.15,882.33 L317.2,882.09 L317.24,881.84 L317.29,881.6 L317.34,881.35 L317.39,881.11 L317.44,880.87 L317.48,880.62 L317.53,880.38 L317.58,880.14 L317.63,879.9 L317.68,879.65 L317.73,879.41 L317.77,879.17 L317.82,878.93 L317.87,878.69 L317.92,878.45 L317.97,878.21 L318.02,877.97 L318.06,877.73 L318.11,877.49 L318.16,877.25 L318.21,877.01 L318.26,876.77 L318.31,876.54 L318.36,876.3 L318.41,876.06 L318.46,875.82 L318.51,875.59 L318.56,875.35 L318.6,875.11 L318.65,874.88 L318.7,874.64 L318.75,874.4 L318.8,874.17 L318.85,873.93 L318.9,873.7 L318.95,873.46 L319,873.23 L319.05,872.99 L319.1,872.76 L319.15,872.53 L319.2,872.29 L319.25,872.06 L319.3,871.83 L319.35,871.59 L319.4,871.36 L319.45,871.13 L319.5,870.9 L319.55,870.67 L319.6,870.44 L319.65,870.21 L319.7,869.97 L319.75,869.74 L319.8,869.51 L319.85,869.28 L319.9,869.05 L319.95,868.83 L320.01,868.6 L320.06,868.37 L320.11,868.14 L320.16,867.91 L320.21,867.68 L320.26,867.46 L320.31,867.23 L320.36,867 L320.41,866.77 L320.46,866.55 L320.52,866.32 L320.57,866.09 L320.62,865.87 L320.67,865.64 L320.72,865.42 L320.77,865.19 L320.82,864.97 L320.88,864.74 L320.93,864.52 L320.98,864.3 L321.03,864.07 L321.08,863.85 L321.13,863.63 L321.19,863.4 L321.24,863.18 L321.29,862.96 L321.34,862.74 L321.39,862.51 L321.45,862.29 L321.5,862.07 L321.55,861.85 L321.6,861.63 L321.66,861.41 L321.71,861.19 L321.76,860.97 L321.81,860.75 L321.87,860.53 L321.92,860.31 L321.97,860.09 L322.02,859.87 L322.08,859.65 L322.13,859.44 L322.18,859.22 L322.24,859 L322.29,858.78 L322.34,858.57 L322.39,858.35 L322.45,858.13 L322.5,857.92 L322.55,857.7 L322.61,857.49 L322.66,857.27 L322.71,857.06 L322.77,856.84 L322.82,856.63 L322.87,856.41 L322.93,856.2 L322.98,855.98 L323.03,855.77 L323.09,855.56 L323.14,855.34 L323.2,855.13 L323.25,854.92 L323.3,854.71 L323.36,854.49 L323.41,854.28 L323.47,854.07 L323.52,853.86 L323.57,853.65 L323.63,853.44 L323.68,853.23 L323.74,853.02 L323.79,852.81 L323.84,852.6 L323.9,852.39 L323.95,852.18 L324.01,851.97 L324.06,851.76 L324.12,851.55 L324.17,851.35 L324.23,851.14 L324.28,850.93 L324.34,850.72 L324.39,850.52 L324.44,850.31 L324.5,850.1 L324.55,849.9 L324.61,849.69 L324.66,849.48 L324.72,849.28 L324.77,849.07 L324.83,848.87 L324.88,848.66 L324.94,848.46 L325,848.25 L325.05,848.05 L325.11,847.85 L325.16,847.64 L325.22,847.44 L325.27,847.24 L325.33,847.03 L325.38,846.83 L325.44,846.63 L325.49,846.43 L325.55,846.23 L325.61,846.03 L325.66,845.82 L325.72,845.62 L325.77,845.42 L325.83,845.22 L325.89,845.02 L325.94,844.82 L326,844.62 L326.05,844.42 L326.11,844.22 L326.17,844.03 L326.22,843.83 L326.28,843.63 L326.33,843.43 L326.39,843.23 L326.45,843.03 L326.5,842.84 L326.56,842.64 L326.62,842.44 L326.67,842.25 L326.73,842.05 L326.79,841.85 L326.84,841.66 L326.9,841.46 L326.96,841.27 L327.01,841.07 L327.07,840.88 L327.13,840.68 L327.18,840.49 L327.24,840.3 L327.3,840.1 L327.36,839.91 L327.41,839.72 L327.47,839.52 L327.53,839.33 L327.58,839.14 L327.64,838.94 L327.7,838.75 L327.76,838.56 L327.81,838.37 L327.87,838.18 L327.93,837.99 L327.99,837.8 L328.04,837.61 L328.1,837.42 L328.16,837.23 L328.22,837.04 L328.27,836.85 L328.33,836.66 L328.39,836.47 L328.45,836.28 L328.5,836.09 L328.56,835.9 L328.62,835.72 L328.68,835.53 L328.74,835.34 L328.79,835.15 L328.85,834.97 L328.91,834.78 L328.97,834.59 L329.03,834.41 L329.09,834.22 L329.14,834.04 L329.2,833.85 L329.26,833.66 L329.32,833.48 L329.38,833.29 L329.44,833.11 L329.49,832.93 L329.55,832.74 L329.61,832.56 L329.67,832.37 L329.73,832.19 L329.79,832.01 L329.85,831.83 L329.9,831.64 L329.96,831.46 L330.02,831.28 L330.08,831.1 L330.14,830.92 L330.2,830.73 L330.26,830.55 L330.32,830.37 L330.38,830.19 L330.43,830.01 L330.49,829.83 L330.55,829.65 L330.61,829.47 L330.67,829.29 L330.73,829.11 L330.79,828.94 L330.85,828.76 L330.91,828.58 L330.97,828.4 L331.03,828.22 L331.09,828.05 L331.15,827.87 L331.2,827.69 L331.26,827.51 L331.32,827.34 L331.38,827.16 L331.44,826.99 L331.5,826.81 L331.56,826.63 L331.62,826.46 L331.68,826.28 L331.74,826.11 L331.8,825.93 L331.86,825.76 L331.92,825.59 L331.98,825.41 L332.04,825.24 L332.1,825.07 L332.16,824.89 L332.22,824.72 L332.28,824.55 L332.34,824.37 L332.4,824.2 L332.46,824.03 L332.52,823.86 L332.58,823.69 L332.64,823.52 L332.7,823.34 L332.76,823.17 L332.82,823 L332.88,822.83 L332.94,822.66 L333,822.49 L333.06,822.32 L333.12,822.15 L333.19,821.99 L333.25,821.82 L333.31,821.65 L333.37,821.48 L333.43,821.31 L333.49,821.14 L333.55,820.98 L333.61,820.81 L333.67,820.64 L333.73,820.48 L333.79,820.31 L333.85,820.14 L333.91,819.98 L333.97,819.81 L334.04,819.64 L334.1,819.48 L334.16,819.31 L334.22,819.15 L334.28,818.98 L334.34,818.82 L334.4,818.66 L334.46,818.49 L334.52,818.33 L334.58,818.16 L334.65,818 L334.71,817.84 L334.77,817.67 L334.83,817.51 L334.89,817.35 L334.95,817.19 L335.01,817.03 L335.07,816.86 L335.14,816.7 L335.2,816.54 L335.26,816.38 L335.32,816.22 L335.38,816.06 L335.44,815.9 L335.5,815.74 L335.57,815.58 L335.63,815.42 L335.69,815.26 L335.75,815.1 L335.81,814.94 L335.87,814.79 L335.93,814.63 L336,814.47 L336.06,814.31 L336.12,814.15 L336.18,814 L336.24,813.84 L336.31,813.68 L336.37,813.53 L336.43,813.37 L336.49,813.21 L336.55,813.06 L336.61,812.9 L336.68,812.75 L336.74,812.59 L336.8,812.44 L336.86,812.28 L336.92,812.13 L336.99,811.97 L337.05,811.82 L337.11,811.66 L337.17,811.51 L337.23,811.36 L337.3,811.2 L337.36,811.05 L337.42,810.9 L337.48,810.75 L337.54,810.59 L337.61,810.44 L337.67,810.29 L337.73,810.14 L337.79,809.99 L337.86,809.84 L337.92,809.68 L337.98,809.53 L338.04,809.38 L338.1,809.23 L338.17,809.08 L338.23,808.93 L338.29,808.78 L338.35,808.64 L338.42,808.49 L338.48,808.34 L338.54,808.19 L338.6,808.04 L338.67,807.89 L338.73,807.74 L338.79,807.6 L338.85,807.45 L338.92,807.3 L338.98,807.16 L339.04,807.01 L339.1,806.86 L339.17,806.72 L339.23,806.57 L339.29,806.42 L339.35,806.28 L339.42,806.13 L339.48,805.99 L339.54,805.84 L339.61,805.7 L339.67,805.55 L339.73,805.41 L339.79,805.27 L339.86,805.12 L339.92,804.98 L339.98,804.84 L340.04,804.69 L340.11,804.55 L340.17,804.41 L340.23,804.27 L340.3,804.12 L340.36,803.98 L340.42,803.84 L340.48,803.7 L340.55,803.56 L340.61,803.42 L340.67,803.27 L340.74,803.13 L340.8,802.99 L340.86,802.85 L340.92,802.71 L340.99,802.57 L341.05,802.43 L341.11,802.3 L341.18,802.16 L341.24,802.02 L341.3,801.88 L341.37,801.74 L341.43,801.6 L341.49,801.47 L341.55,801.33 L341.62,801.19 L341.68,801.05 L341.74,800.92 L341.81,800.78 L341.87,800.64 L341.93,800.51 L342,800.37 L342.06,800.23 L342.12,800.1 L342.18,799.96 L342.25,799.83 L342.31,799.69 L342.37,799.56 L342.44,799.42 L342.5,799.29 L342.56,799.16 L342.63,799.02 L342.69,798.89 L342.75,798.75 L342.82,798.62 L342.88,798.49 L342.94,798.36 L343.01,798.22 L343.07,798.09 L343.13,797.96 L343.19,797.83 L343.26,797.69 L343.32,797.56 L343.38,797.43 L343.45,797.3 L343.51,797.17 L343.57,797.04 L343.64,796.91 L343.7,796.78 L343.76,796.65 L343.83,796.52 L343.89,796.39 L343.95,796.26 L344.02,796.13 L344.08,796 L344.14,795.87 L344.21,795.75 L344.27,795.62 L344.33,795.49 L344.4,795.36 L344.46,795.23 L344.52,795.11 L344.59,794.98 L344.65,794.85 L344.71,794.73 L344.78,794.6 L344.84,794.47 L344.9,794.35 L344.96,794.22 L345.03,794.1 L345.09,793.97 L345.15,793.85 L345.22,793.72 L345.28,793.6 L345.34,793.47 L345.41,793.35 L345.47,793.22 L345.53,793.1 L345.6,792.97 L345.66,792.85 L345.72,792.73 L345.79,792.61 L345.85,792.48 L345.91,792.36 L345.98,792.24 L346.04,792.12 L346.1,791.99 L346.17,791.87 L346.23,791.75 L346.29,791.63 L346.36,791.51 L346.42,791.39 L346.48,791.27 L346.54,791.14 L346.61,791.02 L346.67,790.9 L346.73,790.78 L346.8,790.67 L346.86,790.55 L346.92,790.43 L346.99,790.31 L347.05,790.19 L347.11,790.07 L347.18,789.95 L347.24,789.83 L347.3,789.72 L347.37,789.6 L347.43,789.48 L347.49,789.36 L347.55,789.25 L347.62,789.13 L347.68,789.01 L347.74,788.89 L347.81,788.78 L347.87,788.66 L347.93,788.55 L348,788.43 L348.06,788.32 L348.12,788.2 L348.19,788.08 L348.25,787.97 L348.31,787.86 L348.37,787.74 L348.44,787.63 L348.5,787.51 L348.56,787.4 L348.63,787.28 L348.69,787.17 L348.75,787.06 L348.81,786.95 L348.88,786.83 L348.94,786.72 L349,786.61 L349.07,786.49 L349.13,786.38 L349.19,786.27 L349.25,786.16 L349.32,786.05 L349.38,785.94 L349.44,785.83 L349.51,785.72 L349.57,785.6 L349.63,785.49 L349.69,785.38 L349.76,785.27 L349.82,785.16 L349.88,785.05 L349.94,784.94 L350.01,784.84 L350.07,784.73 L350.13,784.62 L350.2,784.51 L350.26,784.4 L350.32,784.29 L350.38,784.18 L350.45,784.08 L350.51,783.97 L350.57,783.86 L350.63,783.75 L350.7,783.65 L350.76,783.54 L350.82,783.43 L350.88,783.33 L350.95,783.22 L351.01,783.12 L351.07,783.01 L351.13,782.9 L351.2,782.8 L351.26,782.69 L351.32,782.59 L351.38,782.48 L351.44,782.38 L351.51,782.27 L351.57,782.17 L351.63,782.07 L351.69,781.96 L351.76,781.86 L351.82,781.76 L351.88,781.65 L351.94,781.55 L352,781.45 L352.07,781.34 L352.13,781.24 L352.19,781.14 L352.25,781.04 L352.32,780.93 L352.38,780.83 L352.44,780.73 L352.5,780.63 L352.56,780.53 L352.63,780.43 L352.69,780.33 L352.75,780.23 L352.81,780.13 L352.87,780.03 L352.94,779.93 L353,779.83 L353.06,779.73 L353.12,779.63 L353.18,779.53 L353.24,779.43 L353.31,779.33 L353.37,779.23 L353.43,779.13 L353.49,779.03 L353.55,778.94 L353.61,778.84 L353.68,778.74 L353.74,778.64 L353.8,778.55 L353.86,778.45 L353.92,778.35 L353.98,778.26 L354.05,778.16 L354.11,778.06 L354.17,777.97 L354.23,777.87 L354.29,777.77 L354.35,777.68 L354.41,777.58 L354.47,777.49 L354.54,777.39 L354.6,777.3 L354.66,777.2 L354.72,777.11 L354.78,777.01 L354.84,776.92 L354.9,776.83 L354.96,776.73 L355.03,776.64 L355.09,776.55 L355.15,776.45 L355.21,776.36 L355.27,776.27 L355.33,776.17 L355.39,776.08 L355.45,775.99 L355.51,775.9 L355.57,775.81 L355.64,775.71 L355.7,775.62 L355.76,775.53 L355.82,775.44 L355.88,775.35 L355.94,775.26 L356,775.17 L356.06,775.08 L356.12,774.99 L356.18,774.9 L356.24,774.81 L356.3,774.72 L356.36,774.63 L356.42,774.54 L356.48,774.45 L356.54,774.36 L356.6,774.27 L356.66,774.18 L356.73,774.09 L356.79,774 L356.85,773.92 L356.91,773.83 L356.97,773.74 L357.03,773.65 L357.09,773.57 L357.15,773.48 L357.21,773.39 L357.27,773.3 L357.33,773.22 L357.39,773.13 L357.45,773.05 L357.51,772.96 L357.57,772.87 L357.63,772.79 L357.69,772.7 L357.75,772.62 L357.81,772.53 L357.87,772.45 L357.93,772.36 L357.99,772.28 L358.04,772.19 L358.1,772.11 L358.16,772.02 L358.22,771.94 L358.28,771.85 L358.34,771.77 L358.4,771.69 L358.46,771.6 L358.52,771.52 L358.58,771.44 L358.64,771.35 L358.7,771.27 L358.76,771.19 L358.82,771.11 L358.88,771.03 L358.94,770.94 L358.99,770.86 L359.05,770.78 L359.11,770.7 L359.17,770.62 L359.23,770.54 L359.29,770.45 L359.35,770.37 L359.41,770.29 L359.47,770.21 L359.53,770.13 L359.58,770.05 L359.64,769.97 L359.7,769.89 L359.76,769.81 L359.82,769.73 L359.88,769.65 L359.94,769.57 L359.99,769.5 L360.05,769.42 L360.11,769.34 L360.17,769.26 L360.23,769.18 L360.29,769.1 L360.34,769.03 L360.4,768.95 L360.46,768.87 L360.52,768.79 L360.58,768.72 L360.64,768.64 L360.69,768.56 L360.75,768.48 L360.81,768.41 L360.87,768.33 L360.93,768.25 L360.98,768.18 L361.04,768.1 L361.1,768.03 L361.16,767.95 L361.21,767.88 L361.27,767.8 L361.33,767.73 L361.39,767.65 L361.45,767.58 L361.5,767.5 L361.56,767.43 L361.62,767.35 L361.68,767.28 L361.73,767.2 L361.79,767.13 L361.85,767.06 L361.9,766.98 L361.96,766.91 L362.02,766.84 L362.08,766.76 L362.13,766.69 L362.19,766.62 L362.25,766.54 L362.3,766.47 L362.36,766.4 L362.42,766.33 L362.47,766.26 L362.53,766.18 L362.59,766.11 L362.65,766.04 L362.7,765.97 L362.76,765.9 L362.81,765.83 L362.87,765.76 L362.93,765.68 L362.98,765.61 L363.04,765.54 L363.1,765.47 L363.15,765.4 L363.21,765.33 L363.27,765.26 L363.32,765.19 L363.38,765.12 L363.43,765.06 L363.49,764.99 L363.55,764.92 L363.6,764.85 L363.66,764.78 L363.71,764.71 L363.77,764.64 L363.83,764.57 L363.88,764.51 L363.94,764.44 L363.99,764.37 L364.05,764.3 L364.11,764.24 L364.16,764.17 L364.22,764.1 L364.27,764.03 L364.33,763.97 L364.38,763.9 L364.44,763.83 L364.49,763.77 L364.55,763.7 L364.6,763.63 L364.66,763.57 L364.71,763.5 L364.77,763.44 L364.82,763.37 L364.88,763.31 L364.93,763.24 L364.99,763.18 L365.04,763.11 L365.1,763.05 L365.15,762.98 L365.21,762.92 L365.26,762.85 L365.32,762.79 L365.37,762.72 L365.43,762.66 L365.48,762.6 L365.54,762.53 L365.59,762.47 L365.64,762.41 L365.7,762.34 L365.75,762.28 L365.81,762.22 L365.86,762.15 L365.92,762.09 L365.97,762.03 L366.02,761.97 L366.08,761.9 L366.13,761.84 L366.19,761.78 L366.24,761.72 L366.29,761.66 L366.35,761.59 L366.4,761.53 L366.45,761.47 L366.51,761.41 L366.56,761.35 L366.62,761.29 L366.67,761.23 L366.72,761.17 L366.78,761.11 L366.83,761.05 L366.88,760.99 L366.94,760.93 L366.99,760.87 L367.04,760.81 L367.09,760.75 L367.15,760.69 L367.2,760.63 L367.25,760.57 L367.31,760.51 L367.36,760.45 L367.41,760.39 L367.47,760.33 L367.52,760.28 L367.57,760.22 L367.62,760.16 L367.68,760.1 L367.73,760.04 L367.78,759.99 L367.83,759.93 L367.89,759.87 L367.94,759.81 L367.99,759.76 L368.04,759.7 L368.09,759.64 L368.15,759.59 L368.2,759.53 L368.25,759.47 L368.3,759.42 L368.35,759.36 L368.41,759.3 L368.46,759.25 L368.51,759.19 L368.56,759.14 L368.61,759.08 L368.67,759.02 L368.72,758.97 L368.77,758.91 L368.82,758.86 L368.87,758.8 L368.92,758.75 L368.97,758.69 L369.02,758.64 L369.08,758.59 L369.13,758.53 L369.18,758.48 L369.23,758.42 L369.28,758.37 L369.33,758.31 L369.38,758.26 L369.43,758.21 L369.48,758.15 L369.53,758.1 L369.59,758.05 L369.64,757.99 L369.69,757.94 L369.74,757.89 L369.79,757.84 L369.84,757.78 L369.89,757.73 L369.94,757.68 L369.99,757.63 L370.04,757.57 L370.09,757.52 L370.14,757.47 L370.19,757.42 L370.24,757.37 L370.29,757.32 L370.34,757.27 L370.39,757.21 L370.44,757.16 L370.49,757.11 L370.54,757.06 L370.59,757.01 L370.64,756.96 L370.69,756.91 L370.74,756.86 L370.79,756.81 L370.84,756.76 L370.89,756.71 L370.94,756.66 L370.98,756.61 L371.03,756.56 L371.08,756.51 L371.13,756.46 L371.18,756.41 L371.23,756.36 L371.28,756.31 L371.33,756.27 L371.38,756.22 L371.43,756.17 L371.47,756.12 L371.52,756.07 L371.57,756.02 L371.62,755.97 L371.67,755.93 L371.72,755.88 L371.77,755.83 L371.81,755.78 L371.86,755.74 L371.91,755.69 L371.96,755.64 L372.01,755.59 L372.05,755.55 L372.1,755.5 L372.15,755.45 L372.2,755.41 L372.25,755.36 L372.29,755.31 L372.34,755.27 L372.39,755.22 L372.44,755.17 L372.48,755.13 L372.53,755.08 L372.58,755.04 L372.63,754.99 L372.67,754.95 L372.72,754.9 L372.77,754.86 L372.82,754.81 L372.86,754.76 L372.91,754.72 L372.96,754.67 L373,754.63 L373.05,754.59 L373.1,754.54 L373.15,754.5 L373.19,754.45 L373.24,754.41 L373.29,754.36 L373.33,754.32 L373.38,754.28 L373.43,754.23 L373.47,754.19 L373.52,754.14 L373.56,754.1 L373.61,754.06 L373.66,754.01 L373.7,753.97 L373.75,753.93 L373.8,753.89 L373.84,753.84 L373.89,753.8 L373.93,753.76 L373.98,753.72 L374.03,753.67 L374.07,753.63 L374.12,753.59 L374.16,753.55 L374.21,753.5 L374.25,753.46 L374.3,753.42 L374.34,753.38 L374.39,753.34 L374.44,753.3 L374.48,753.26 L374.53,753.21 L374.57,753.17 L374.62,753.13 L374.66,753.09 L374.71,753.05 L374.75,753.01 L374.8,752.97 L374.84,752.93 L374.89,752.89 L374.93,752.85 L374.98,752.81 L375.02,752.77 L375.06,752.73 L375.11,752.69 L375.15,752.65 L375.2,752.61 L375.24,752.57 L375.29,752.53 L375.33,752.49 L375.37,752.45 L375.42,752.41 L375.46,752.37 L375.51,752.33 L375.55,752.3 L375.59,752.26 L375.64,752.22 L375.68,752.18 L375.73,752.14 L375.77,752.1 L375.81,752.06 L375.86,752.03 L375.9,751.99 L375.94,751.95 L375.99,751.91 L376.03,751.87 L376.07,751.84 L376.12,751.8 L376.16,751.76 L376.2,751.72 L376.25,751.69 L376.29,751.65 L376.33,751.61 L376.38,751.58 L376.42,751.54 L376.46,751.5 L376.5,751.47 L376.55,751.43 L376.59,751.39 L376.63,751.36 L376.67,751.32 L376.72,751.28 L376.76,751.25 L376.8,751.21 L376.84,751.18 L376.89,751.14 L376.93,751.1 L376.97,751.07 L377.01,751.03 L377.05,751 L377.1,750.96 L377.14,750.93 L377.18,750.89 L377.22,750.86 L377.26,750.82 L377.31,750.79 L377.35,750.75 L377.39,750.72 L377.43,750.68 L377.47,750.65 L377.51,750.61 L377.55,750.58 L377.6,750.55 L377.64,750.51 L377.68,750.48 L377.72,750.44 L377.76,750.41 L377.8,750.38 L377.84,750.34 L377.88,750.31 L377.92,750.28 L377.97,750.24 L378.01,750.21 L378.05,750.17 L378.09,750.14 L378.13,750.11 L378.17,750.08 L378.21,750.04 L378.25,750.01 L378.29,749.98 L378.33,749.94 L378.37,749.91 L378.41,749.88 L378.45,749.85 L378.49,749.81 L378.53,749.78 L378.57,749.75 L378.61,749.72 L378.65,749.69 L378.69,749.65 L378.73,749.62 L378.77,749.59 L378.81,749.56 L378.85,749.53 L378.89,749.5 L378.93,749.47 L378.97,749.43 L379.01,749.4 L379.05,749.37 L379.09,749.34 L379.12,749.31 L379.16,749.28 L379.2,749.25 L379.24,749.22 L379.28,749.19 L379.32,749.16 L379.36,749.13 L379.4,749.1 L379.44,749.07 L379.48,749.04 L379.51,749.01 L379.55,748.98 L379.59,748.95 L379.63,748.92 L379.67,748.89 L379.71,748.86 L379.74,748.83 L379.78,748.8 L379.82,748.77 L379.86,748.74 L379.9,748.71 L379.94,748.68 L379.97,748.65 L380.01,748.62 L380.05,748.59 L380.09,748.56 L380.13,748.53 L380.16,748.51 L380.2,748.48 L380.24,748.45 L380.28,748.42 L380.31,748.39 L380.35,748.36 L380.39,748.33 L380.43,748.31 L380.46,748.28 L380.5,748.25 L380.54,748.22 L380.57,748.19 L380.61,748.17 L380.65,748.14 L380.69,748.11 L380.72,748.08 L380.76,748.06 L380.8,748.03 L380.83,748 L380.87,747.97 L380.91,747.95 L380.94,747.92 L380.98,747.89 L381.02,747.87 L381.05,747.84 L381.09,747.81 L381.13,747.79 L381.16,747.76 L381.2,747.73 L381.23,747.71 L381.27,747.68 L381.31,747.65 L381.34,747.63 L381.38,747.6 L381.41,747.57 L381.45,747.55 L381.49,747.52 L381.52,747.5 L381.56,747.47 L381.59,747.44 L381.63,747.42 L381.66,747.39 L381.7,747.37 L381.73,747.34 L381.77,747.32 L381.81,747.29 L381.84,747.27 L381.88,747.24 L381.91,747.21 L381.95,747.19 L381.98,747.16 L382.02,747.14 L382.05,747.11 L382.09,747.09 L382.12,747.07 L382.16,747.04 L382.19,747.02 L382.23,746.99 L382.26,746.97 L382.29,746.94 L382.33,746.92 L382.36,746.89 L382.4,746.87 L382.43,746.85 L382.47,746.82 L382.5,746.8 L382.53,746.77 L382.57,746.75 L382.6,746.73 L382.64,746.7 L382.67,746.68 L382.71,746.65 L382.74,746.63 L382.77,746.61 L382.81,746.58 L382.84,746.56 L382.87,746.54 L382.91,746.51 L382.94,746.49 L382.97,746.47 L383.01,746.45 L383.04,746.42 L383.08,746.4 L383.11,746.38 L383.14,746.35 L383.17,746.33 L383.21,746.31 L383.24,746.29 L383.27,746.26 L383.31,746.24 L383.34,746.22 L383.37,746.2 L383.41,746.17 L383.44,746.15 L383.47,746.13 L383.5,746.11 L383.54,746.09 L383.57,746.06 L383.6,746.04 L383.63,746.02 L383.67,746 L383.7,745.98 L383.73,745.95 L383.76,745.93 L383.8,745.91 L383.83,745.89 L383.86,745.87 L383.89,745.85 L383.92,745.83 L383.96,745.81 L383.99,745.78 L384.02,745.76 L384.05,745.74 L384.08,745.72 L384.12,745.7 L384.15,745.68 L384.18,745.66 L384.21,745.64 L384.24,745.62 L384.27,745.6 L384.31,745.58 L384.34,745.56 L384.37,745.53 L384.4,745.51 L384.43,745.49 L384.46,745.47 L384.49,745.45 L384.52,745.43 L384.55,745.41 L384.59,745.39 L384.62,745.37 L384.65,745.35 L384.68,745.33 L384.71,745.31 L384.74,745.29 L384.77,745.27 L384.8,745.26 L384.83,745.24 L384.86,745.22 L384.89,745.2 L384.92,745.18 L384.95,745.16 L384.98,745.14 L385.01,745.12 L385.04,745.1 L385.07,745.08 L385.1,745.06 L385.13,745.04 L385.16,745.02 L385.19,745.01 L385.22,744.99 L385.25,744.97 L385.28,744.95 L385.31,744.93 L385.34,744.91 L385.37,744.89 L385.4,744.87 L385.43,744.86 L385.46,744.84 L385.49,744.82 L385.52,744.8 L385.55,744.78 L385.58,744.76 L385.61,744.75 L385.64,744.73 L385.67,744.71 L385.7,744.69 L385.73,744.67 L385.75,744.66 L385.78,744.64 L385.81,744.62 L385.84,744.6 L385.87,744.59 L385.9,744.57 L385.93,744.55 L385.96,744.53 L385.99,744.52 L386.01,744.5 L386.04,744.48 L386.07,744.46 L386.1,744.45 L386.13,744.43 L386.16,744.41 L386.18,744.39 L386.21,744.38 L386.24,744.36 L386.27,744.34 L386.3,744.33 L386.33,744.31 L386.35,744.29 L386.38,744.28 L386.41,744.26 L386.44,744.24 L386.47,744.23 L386.49,744.21 L386.52,744.19 L386.55,744.18 L386.58,744.16 L386.6,744.14 L386.63,744.13 L386.66,744.11 L386.69,744.09 L386.71,744.08 L386.74,744.06 L386.77,744.05 L386.8,744.03 L386.82,744.01 L386.85,744 L386.88,743.98 L386.9,743.97 L386.93,743.95 L386.96,743.93 L386.99,743.92 L387.01,743.9 L387.04,743.89 L387.07,743.87 L387.09,743.86 L387.12,743.84 L387.15,743.83 L387.17,743.81 L387.2,743.79 L387.23,743.78 L387.25,743.76 L387.28,743.75 L387.31,743.73 L387.33,743.72 L387.36,743.7 L387.38,743.69 L387.41,743.67 L387.44,743.66 L387.46,743.64 L387.49,743.63 L387.52,743.61 L387.54,743.6 L387.57,743.58 L387.59,743.57 L387.62,743.56 L387.64,743.54 L387.67,743.53 L387.7,743.51 L387.72,743.5 L387.75,743.48 L387.77,743.47 L387.8,743.45 L387.82,743.44 L387.85,743.43 L387.88,743.41 L387.9,743.4 L387.93,743.38 L387.95,743.37 L387.98,743.35 L388,743.34 L388.03,743.33 L388.05,743.31 L388.08,743.3 L388.1,743.29 L388.13,743.27 L388.15,743.26 L388.18,743.24 L388.2,743.23 L388.23,743.22 L388.25,743.2 L388.28,743.19 L388.3,743.18 L388.32,743.16 L388.35,743.15 L388.37,743.14 L388.4,743.12 L388.42,743.11 L388.45,743.1 L388.47,743.08 L388.5,743.07 L388.52,743.06 L388.54,743.04 L388.57,743.03 L388.59,743.02 L388.62,743 L388.64,742.99 L388.67,742.98 L388.69,742.97 L388.71,742.95 L388.74,742.94 L388.76,742.93 L388.78,742.91 L388.81,742.9 L388.83,742.89 L388.86,742.88 L388.88,742.86 L388.9,742.85 L388.93,742.84 L388.95,742.83 L388.97,742.81 L389,742.8 L389.02,742.79 L389.04,742.78 L389.07,742.76 L389.09,742.75 L389.11,742.74 L389.14,742.73 L389.16,742.72 L389.18,742.7 L389.21,742.69 L389.23,742.68 L389.25,742.67 L389.27,742.66 L389.3,742.64 L389.32,742.63 L389.34,742.62 L389.37,742.61 L389.39,742.6 L389.41,742.58 L389.43,742.57 L389.46,742.56 L389.48,742.55 L389.5,742.54 L389.52,742.53 L389.55,742.52 L389.57,742.5 L389.59,742.49 L389.61,742.48 L389.64,742.47 L389.66,742.46 L389.68,742.45 L389.7,742.44 L389.72,742.42 L389.75,742.41 L389.77,742.4 L389.79,742.39 L389.81,742.38 L389.83,742.37 L389.86,742.36 L389.88,742.35 L389.9,742.34 L389.92,742.32 L389.94,742.31 L389.96,742.3 L389.99,742.29 L390.01,742.28 L390.03,742.27 L390.05,742.26 L390.07,742.25 L390.09,742.24 L390.12,742.23 L390.14,742.22 L390.16,742.21 L390.18,742.2 L390.2,742.19 L390.22,742.18 L390.24,742.16 L390.26,742.15 L390.28,742.14 L390.31,742.13 L390.33,742.12 L390.35,742.11 L390.37,742.1 L390.39,742.09 L390.41,742.08 L390.43,742.07 L390.45,742.06 L390.47,742.05 L390.49,742.04 L390.51,742.03 L390.53,742.02 L390.56,742.01 L390.58,742 L390.6,741.99 L390.62,741.98 L390.64,741.97 L390.66,741.96 L390.68,741.95 L390.7,741.94 L390.72,741.93 L390.74,741.92 L390.76,741.91 L390.78,741.9 L390.8,741.89 L390.82,741.89 L390.84,741.88 L390.86,741.87 L390.88,741.86 L390.9,741.85 L390.92,741.84 L390.94,741.83 L390.96,741.82 L390.98,741.81 L391,741.8 L391.02,741.79 L391.04,741.78 L391.06,741.77 L391.08,741.76 L391.1,741.75 L391.12,741.74 L391.14,741.74 L391.15,741.73 L391.17,741.72 L391.19,741.71 L391.21,741.7 L391.23,741.69 L391.25,741.68 L391.27,741.67 L391.29,741.66 L391.31,741.65 L391.33,741.65 L391.35,741.64 L391.37,741.63 L391.39,741.62 L391.4,741.61 L391.42,741.6 L391.44,741.59 L391.46,741.58 L391.48,741.58 L391.5,741.57 L391.52,741.56 L391.54,741.55 L391.55,741.54 L391.57,741.53 L391.59,741.53 L391.61,741.52 L391.63,741.51 L391.65,741.5 L391.67,741.49 L391.68,741.48 L391.7,741.47 L391.72,741.47 L391.74,741.46 L391.76,741.45 L391.78,741.44 L391.79,741.43 L391.81,741.43 L391.83,741.42 L391.85,741.41 L391.87,741.4 L391.88,741.39 L391.9,741.39 L391.92,741.38 L391.94,741.37 L391.96,741.36 L391.97,741.35 L391.99,741.35 L392.01,741.34 L392.03,741.33 L392.05,741.32 L392.06,741.31 L392.08,741.31 L392.1,741.3 L392.12,741.29 L392.13,741.28 L392.15,741.28 L392.17,741.27 L392.19,741.26 L392.2,741.25 L392.22,741.24 L392.24,741.24 L392.26,741.23 L392.27,741.22 L392.29,741.21 L392.31,741.21 L392.32,741.2 L392.34,741.19 L392.36,741.18 L392.38,741.18 L392.39,741.17 L392.41,741.16 L392.43,741.16 L392.44,741.15 L392.46,741.14 L392.48,741.13 L392.5,741.13 L392.51,741.12 L392.53,741.11 L392.55,741.1 L392.56,741.1 L392.58,741.09 L392.6,741.08 L392.61,741.08 L392.63,741.07 L392.65,741.06 L392.66,741.06 L392.68,741.05 L392.69,741.04 L392.71,741.03 L392.73,741.03 L392.74,741.02 L392.76,741.01 L392.78,741.01 L392.79,741 L392.81,740.99 L392.83,740.99 L392.84,740.98 L392.86,740.97 L392.87,740.97 L392.89,740.96 L392.91,740.95 L392.92,740.95 L392.94,740.94 L392.95,740.93 L392.97,740.93 L392.99,740.92 L393,740.91 L393.02,740.91 L393.03,740.9 L393.05,740.89 L393.07,740.89 L393.08,740.88 L393.1,740.87 L393.11,740.87 L393.13,740.86 L393.14,740.86 L393.16,740.85 L393.17,740.84 L393.19,740.84 L393.21,740.83 L393.22,740.82 L393.24,740.82 L393.25,740.81 L393.27,740.8 L393.28,740.8 L393.3,740.79 L393.31,740.79 L393.33,740.78 L393.34,740.77 L393.36,740.77 L393.37,740.76 L393.39,740.76 L393.4,740.75 L393.42,740.74 L393.43,740.74 L393.45,740.73 L393.46,740.73 L393.48,740.72 L393.49,740.71 L393.51,740.71 L393.52,740.7 L393.54,740.7 L393.55,740.69 L393.57,740.68 L393.58,740.68 L393.6,740.67 L393.61,740.67 L393.63,740.66 L393.64,740.66 L393.66,740.65 L393.67,740.64 L393.69,740.64 L393.7,740.63 L393.71,740.63 L393.73,740.62 L393.74,740.62 L393.76,740.61 L393.77,740.61 L393.79,740.6 L393.8,740.59 L393.81,740.59 L393.83,740.58 L393.84,740.58 L393.86,740.57 L393.87,740.57 L393.89,740.56 L393.9,740.56 L393.91,740.55 L393.93,740.54 L393.94,740.54 L393.96,740.53 L393.97,740.53 L393.98,740.52 L394,740.52 L394.01,740.51 L394.03,740.51 L394.04,740.5 L394.05,740.5 L394.07,740.49 L394.08,740.49 L394.09,740.48 L394.11,740.48 L394.12,740.47 L394.13,740.47 L394.15,740.46 L394.16,740.46 L394.18,740.45 L394.19,740.45 L394.2,740.44 L394.22,740.44 L394.23,740.43 L394.24,740.43 L394.26,740.42 L394.27,740.42 L394.28,740.41 L394.3,740.41 L394.31,740.4 L394.32,740.4 L394.34,740.39 L394.35,740.39 L394.36,740.38 L394.38,740.38 L394.39,740.37 L394.4,740.37 L394.41,740.36 L394.43,740.36 L394.44,740.35 L394.45,740.35 L394.47,740.34 L394.48,740.34 L394.49,740.33 L394.51,740.33 L394.52,740.32 L394.53,740.32 L394.54,740.31 L394.56,740.31 L394.57,740.31 L394.58,740.3 L394.6,740.3 L394.61,740.29 L394.62,740.29 L394.63,740.28 L394.65,740.28 L394.66,740.27 L394.67,740.27 L394.68,740.26 L394.7,740.26 L394.71,740.26 L394.72,740.25 L394.73,740.25 L394.75,740.24 L394.76,740.24 L394.77,740.23 L394.78,740.23 L394.79,740.22 L394.81,740.22 L394.82,740.22 L394.83,740.21 L394.84,740.21 L394.86,740.2 L394.87,740.2 L394.88,740.19 L394.89,740.19 L394.9,740.19 L394.92,740.18 L394.93,740.18 L394.94,740.17 L394.95,740.17 L394.96,740.17 L394.98,740.16 L394.99,740.16 L395,740.15 L395.01,740.15 L395.02,740.14 L395.04,740.14 L395.05,740.14 L395.06,740.13 L395.07,740.13 L395.08,740.12 L395.09,740.12 L395.11,740.12 L395.12,740.11 L395.13,740.11 L395.14,740.1 L395.15,740.1 L395.16,740.1 L395.18,740.09 L395.19,740.09 L395.2,740.08 L395.21,740.08 L395.22,740.08 L395.23,740.07 L395.24,740.07 L395.25,740.07 L395.27,740.06 L395.28,740.06 L395.29,740.05 L395.3,740.05 L395.31,740.05 L395.32,740.04 L395.33,740.04 L395.34,740.03 L395.36,740.03 L395.37,740.03 L395.38,740.02 L395.39,740.02 L395.4,740.02 L395.41,740.01 L395.42,740.01 L395.43,740.01 L395.44,740 L395.46,740 L395.47,739.99 L395.48,739.99 L395.49,739.99 L395.5,739.98 L395.51,739.98 L395.52,739.98 L395.53,739.97 L395.54,739.97 L395.55,739.97 L395.56,739.96 L395.57,739.96 L395.58,739.96 L395.6,739.95 L395.61,739.95 L395.62,739.95 L395.63,739.94 L395.64,739.94 L395.65,739.93 L395.66,739.93 L395.67,739.93 L395.68,739.92 L395.69,739.92 L395.7,739.92 L395.71,739.91 L395.72,739.91 L395.73,739.91 L395.74,739.9 L395.75,739.9 L395.76,739.9 L395.77,739.89 L395.78,739.89 L395.79,739.89 L395.8,739.88 L395.81,739.88 L395.82,739.88 L395.83,739.88 L395.84,739.87 L395.85,739.87 L395.86,739.87 L395.87,739.86 L395.88,739.86 L395.89,739.86 L395.9,739.85 L395.91,739.85 L395.92,739.85 L395.93,739.84 L395.94,739.84 L395.95,739.84 L395.96,739.83 L395.97,739.83 L395.98,739.83 L395.99,739.82 L396,739.82 L396.01,739.82 L396.02,739.82 L396.03,739.81 L396.04,739.81 L396.05,739.81 L396.06,739.8 L396.07,739.8 L396.08,739.8 L396.09,739.79 L396.1,739.79 L396.11,739.79 L396.12,739.79 L396.13,739.78 L396.14,739.78 L396.15,739.78 L396.16,739.77 L396.17,739.77 L396.18,739.77 L396.19,739.77 L396.2,739.76 L396.2,739.76 L396.21,739.76 L396.22,739.75 L396.23,739.75 L396.24,739.75 L396.25,739.75 L396.26,739.74 L396.27,739.74 L396.28,739.74 L396.29,739.73 L396.3,739.73 L396.31,739.73 L396.32,739.73 L396.32,739.72 L396.33,739.72 L396.34,739.72 L396.35,739.72 L396.36,739.71 L396.37,739.71 L396.38,739.71 L396.39,739.7 L396.4,739.7 L396.41,739.7 L396.42,739.7 L396.42,739.69 L396.43,739.69 L396.44,739.69 L396.45,739.69 L396.46,739.68 L396.47,739.68 L396.48,739.68 L396.49,739.68 L396.49,739.67 L396.5,739.67 L396.51,739.67 L396.52,739.67 L396.53,739.66 L396.54,739.66 L396.55,739.66 L396.56,739.66 L396.56,739.65 L396.57,739.65 L396.58,739.65 L396.59,739.65 L396.6,739.64 L396.61,739.64 L396.62,739.64 L396.62,739.64 L396.63,739.63 L396.64,739.63 L396.65,739.63 L396.66,739.63 L396.67,739.62 L396.67,739.62 L396.68,739.62 L396.69,739.62 L396.7,739.61 L396.71,739.61 L396.72,739.61 L396.72,739.61 L396.73,739.6 L396.74,739.6 L396.75,739.6 L396.76,739.6 L396.77,739.6 L396.77,739.59 L396.78,739.59 L396.79,739.59 L396.8,739.59 L396.81,739.58 L396.81,739.58 L396.82,739.58 L396.83,739.58 L396.84,739.57 L396.85,739.57 L396.85,739.57 L396.86,739.57 L396.87,739.57 L396.88,739.56 L396.89,739.56 L396.89,739.56 L396.9,739.56 L396.91,739.55 L396.92,739.55 L396.93,739.55 L396.93,739.55 L396.94,739.55 L396.95,739.54 L396.96,739.54 L396.97,739.54 L396.97,739.54 L396.98,739.54 L396.99,739.53 L397,739.53 L397,739.53 L397.01,739.53 L397.02,739.52 L397.03,739.52 L397.03,739.52 L397.04,739.52 L397.05,739.52 L397.06,739.51 L397.06,739.51 L397.07,739.51 L397.08,739.51 L397.09,739.51 L397.09,739.5 L397.1,739.5 L397.11,739.5 L397.12,739.5 L397.12,739.5 L397.13,739.49 L397.14,739.49 L397.15,739.49 L397.15,739.49 L397.16,739.49 L397.17,739.48 L397.18,739.48 L397.18,739.48 L397.19,739.48 L397.2,739.48 L397.21,739.47 L397.21,739.47 L397.22,739.47 L397.23,739.47 L397.23,739.47 L397.24,739.47 L397.25,739.46 L397.26,739.46 L397.26,739.46 L397.27,739.46 L397.28,739.46 L397.28,739.45 L397.29,739.45 L397.3,739.45 L397.31,739.45 L397.31,739.45 L397.32,739.45 L397.33,739.44 L397.33,739.44 L397.34,739.44 L397.35,739.44 L397.35,739.44 L397.36,739.43 L397.37,739.43 L397.37,739.43 L397.38,739.43 L397.39,739.43 L397.4,739.43 L397.4,739.42 L397.41,739.42 L397.42,739.42 L397.42,739.42 L397.43,739.42 L397.44,739.41 L397.44,739.41 L397.45,739.41 L397.46,739.41 L397.46,739.41 L397.47,739.41 L397.48,739.4 L397.48,739.4 L397.49,739.4 L397.5,739.4 L397.5,739.4 L397.51,739.4 L397.52,739.39 L397.52,739.39 L397.53,739.39 L397.54,739.39 L397.54,739.39 L397.55,739.39 L397.56,739.38 L397.56,739.38 L397.57,739.38 L397.58,739.38 L397.58,739.38 L397.59,739.38 L397.59,739.38 L397.6,739.37 L397.61,739.37 L397.61,739.37 L397.62,739.37 L397.63,739.37 L397.63,739.37 L397.64,739.36 L397.65,739.36 L397.65,739.36 L397.66,739.36 L397.66,739.36 L397.67,739.36 L397.68,739.36 L397.68,739.35 L397.69,739.35 L397.7,739.35 L397.7,739.35 L397.71,739.35 L397.71,739.35 L397.72,739.34 L397.73,739.34 L397.73,739.34 L397.74,739.34 L397.74,739.34 L397.75,739.34 L397.76,739.34 L397.76,739.33 L397.77,739.33 L397.77,739.33 L397.78,739.33 L397.79,739.33 L397.79,739.33 L397.8,739.33 L397.8,739.32 L397.81,739.32 L397.82,739.32 L397.82,739.32 L397.83,739.32 L397.83,739.32 L397.84,739.32 L397.85,739.31 L397.85,739.31 L397.86,739.31 L397.86,739.31 L397.87,739.31 L397.88,739.31 L397.88,739.31 L397.89,739.3 L397.89,739.3 L397.9,739.3 L397.9,739.3 L397.91,739.3 L397.92,739.3 L397.92,739.3 L397.93,739.3 L397.93,739.29 L397.94,739.29 L397.94,739.29 L397.95,739.29 L397.96,739.29 L397.96,739.29 L397.97,739.29 L397.97,739.28 L397.98,739.28 L397.98,739.28 L397.99,739.28 L397.99,739.28 L398,739.28 L398.01,739.28 L398.01,739.28 L398.02,739.27 L398.02,739.27 L398.03,739.27 L398.03,739.27 L398.04,739.27 L398.04,739.27 L398.05,739.27 L398.06,739.27 L398.06,739.26 L398.07,739.26 L398.07,739.26 L398.08,739.26 L398.08,739.26 L398.09,739.26 L398.09,739.26 L398.1,739.26 L398.1,739.26 L398.11,739.25 L398.11,739.25 L398.12,739.25 L398.12,739.25 L398.13,739.25 L398.14,739.25 L398.14,739.25 L398.15,739.25 L398.15,739.24 L398.16,739.24 L398.16,739.24 L398.17,739.24 L398.17,739.24 L398.18,739.24 L398.18,739.24 L398.19,739.24 L398.19,739.24 L398.2,739.23 L398.2,739.23 L398.21,739.23 L398.21,739.23 L398.22,739.23 L398.22,739.23 L398.23,739.23 L398.23,739.23 L398.24,739.23 L398.24,739.22 L398.25,739.22 L398.25,739.22 L398.26,739.22 L398.26,739.22 L398.27,739.22 L398.27,739.22 L398.28,739.22 L398.28,739.22 L398.29,739.21 L398.29,739.21 L398.3,739.21 L398.3,739.21 L398.31,739.21 L398.31,739.21 L398.32,739.21 L398.32,739.21 L398.33,739.21 L398.33,739.21 L398.34,739.2 L398.34,739.2 L398.35,739.2 L398.35,739.2 L398.36,739.2 L398.36,739.2 L398.37,739.2 L398.37,739.2 L398.37,739.2 L398.38,739.2 L398.38,739.19 L398.39,739.19 L398.39,739.19 L398.4,739.19 L398.4,739.19 L398.41,739.19 L398.41,739.19 L398.42,739.19 L398.42,739.19 L398.43,739.19 L398.43,739.18 L398.44,739.18 L398.44,739.18 L398.44,739.18 L398.45,739.18 L398.45,739.18 L398.46,739.18 L398.46,739.18 L398.47,739.18 L398.47,739.18 L398.48,739.18 L398.48,739.17 L398.49,739.17 L398.49,739.17 L398.49,739.17 L398.5,739.17 L398.5,739.17 L398.51,739.17 L398.51,739.17 L398.52,739.17 L398.52,739.17 L398.53,739.17 L398.53,739.16 L398.53,739.16 L398.54,739.16 L398.54,739.16 L398.55,739.16 L398.55,739.16 L398.56,739.16 L398.56,739.16 L398.56,739.16 L398.57,739.16 L398.57,739.16 L398.58,739.15 L398.58,739.15 L398.59,739.15 L398.59,739.15 L398.59,739.15 L398.6,739.15 L398.6,739.15 L398.61,739.15 L398.61,739.15 L398.62,739.15 L398.62,739.15 L398.62,739.15 L398.63,739.14 L398.63,739.14 L398.64,739.14 L398.64,739.14 L398.64,739.14 L398.65,739.14 L398.65,739.14 L398.66,739.14 L398.66,739.14 L398.67,739.14 L398.67,739.14 L398.67,739.14 L398.68,739.13 L398.68,739.13 L398.69,739.13 L398.69,739.13 L398.69,739.13 L398.7,739.13 L398.7,739.13 L398.71,739.13 L398.71,739.13 L398.71,739.13 L398.72,739.13 L398.72,739.13 L398.73,739.13 L398.73,739.12 L398.73,739.12 L398.74,739.12 L398.74,739.12 L398.75,739.12 L398.75,739.12 L398.75,739.12 L398.76,739.12 L398.76,739.12 L398.76,739.12 L398.77,739.12 L398.77,739.12 L398.78,739.12 L398.78,739.12 L398.78,739.11 L398.79,739.11 L398.79,739.11 L398.8,739.11 L398.8,739.11 L398.8,739.11 L398.81,739.11 L398.81,739.11 L398.81,739.11 L398.82,739.11 L398.82,739.11 L398.83,739.11 L398.83,739.11 L398.83,739.11 L398.84,739.1 L398.84,739.1 L398.84,739.1 L398.85,739.1 L398.85,739.1 L398.86,739.1 L398.86,739.1 L398.86,739.1 L398.87,739.1 L398.87,739.1 L398.87,739.1 L398.88,739.1 L398.88,739.1 L398.88,739.1 L398.89,739.1 L398.89,739.09 L398.9,739.09 L398.9,739.09 L398.9,739.09 L398.91,739.09 L398.91,739.09 L398.91,739.09 L398.92,739.09 L398.92,739.09 L398.92,739.09 L398.93,739.09 L398.93,739.09 L398.93,739.09 L398.94,739.09 L398.94,739.09 L398.94,739.08 L398.95,739.08 L398.95,739.08 L398.96,739.08 L398.96,739.08 L398.96,739.08 L398.97,739.08 L398.97,739.08 L398.97,739.08 L398.98,739.08 L398.98,739.08 L398.98,739.08 L398.99,739.08 L398.99,739.08 L398.99,739.08 L399,739.08 L399,739.08 L399,739.07 L399.01,739.07 L399.01,739.07 L399.01,739.07 L399.02,739.07 L399.02,739.07 L399.02,739.07 L399.03,739.07 L399.03,739.07 L399.03,739.07 L399.04,739.07 L399.04,739.07 L399.04,739.07 L399.05,739.07 L399.05,739.07 L399.05,739.07 L399.06,739.07 L399.06,739.06 L399.06,739.06 L399.07,739.06 L399.07,739.06 L399.07,739.06 L399.07,739.06 L399.08,739.06 L399.08,739.06 L399.08,739.06 L399.09,739.06 L399.09,739.06 L399.09,739.06 L399.1,739.06 L399.1,739.06 L399.1,739.06 L399.11,739.06 L399.11,739.06 L399.11,739.06 L399.12,739.06 L399.12,739.05 L399.12,739.05 L399.12,739.05 L399.13,739.05 L399.13,739.05 L399.13,739.05 L399.14,739.05 L399.14,739.05" fill="none" stroke="#e246e2" stroke-width="1.9" clip-path="url(#cn)"/>
<path d="M303.27,793.48 L303.83,794.46 L304.39,795.43 L304.97,796.4 L305.55,797.36 L306.15,798.31 L306.75,799.26 L307.36,800.2 L307.99,801.14 L308.62,802.07 L309.26,802.99 L309.91,803.9 L310.57,804.81 L311.24,805.72 L311.92,806.61 L312.6,807.5 L313.3,808.38 L314,809.26 L314.72,810.13 L315.44,810.99 L316.17,811.84 L316.91,812.69 L317.66,813.53 L318.41,814.36 L319.18,815.18 L319.95,816 L320.73,816.81 L321.52,817.61 L322.32,818.4 L323.12,819.18 L323.94,819.96 L324.76,820.72 L325.59,821.48 L326.42,822.23 L327.27,822.98 L328.12,823.71 L328.97,824.44 L329.84,825.15 L330.71,825.86 L331.59,826.56" fill="none" stroke="#000" stroke-width="2.2"/>
<circle cx="303.27" cy="793.48" r="4" fill="#fff" stroke="#000" stroke-width="2"/>
<path d="M121.75,977.3v-2.5M121.75,500.5v2.5M132.9,977.3v-2.5M132.9,500.5v2.5M144.05,977.3v-2.5M144.05,500.5v2.5M155.2,977.3v-2.5M155.2,500.5v2.5M166.35,977.3v-2.5M166.35,500.5v2.5M177.5,977.3v-4M177.5,500.5v4M188.65,977.3v-2.5M188.65,500.5v2.5M199.8,977.3v-2.5M199.8,500.5v2.5M210.95,977.3v-2.5M210.95,500.5v2.5M222.1,977.3v-2.5M222.1,500.5v2.5M233.25,977.3v-2.5M233.25,500.5v2.5M244.4,977.3v-2.5M244.4,500.5v2.5M255.55,977.3v-2.5M255.55,500.5v2.5M266.7,977.3v-2.5M266.7,500.5v2.5M277.85,977.3v-2.5M277.85,500.5v2.5M289,977.3v-4M289,500.5v4M300.15,977.3v-2.5M300.15,500.5v2.5M311.3,977.3v-2.5M311.3,500.5v2.5M322.45,977.3v-2.5M322.45,500.5v2.5M333.6,977.3v-2.5M333.6,500.5v2.5M344.75,977.3v-2.5M344.75,500.5v2.5M355.9,977.3v-2.5M355.9,500.5v2.5M367.05,977.3v-2.5M367.05,500.5v2.5M378.2,977.3v-2.5M378.2,500.5v2.5M389.35,977.3v-2.5M389.35,500.5v2.5M400.5,977.3v-4M400.5,500.5v4M411.65,977.3v-2.5M411.65,500.5v2.5M422.8,977.3v-2.5M422.8,500.5v2.5M433.95,977.3v-2.5M433.95,500.5v2.5M445.1,977.3v-2.5M445.1,500.5v2.5M456.25,977.3v-2.5M456.25,500.5v2.5M467.4,977.3v-2.5M467.4,500.5v2.5M478.55,977.3v-2.5M478.55,500.5v2.5M489.7,977.3v-2.5M489.7,500.5v2.5M500.85,977.3v-2.5M500.85,500.5v2.5M512,977.3v-4M512,500.5v4M523.15,977.3v-2.5M523.15,500.5v2.5M534.3,977.3v-2.5M534.3,500.5v2.5M545.45,977.3v-2.5M545.45,500.5v2.5M556.6,977.3v-2.5M556.6,500.5v2.5M567.75,977.3v-2.5M567.75,500.5v2.5M578.9,977.3v-2.5M578.9,500.5v2.5M590.05,977.3v-2.5M590.05,500.5v2.5M601.2,977.3v-2.5M601.2,500.5v2.5M612.35,977.3v-2.5M612.35,500.5v2.5M623.5,977.3v-4M623.5,500.5v4M634.65,977.3v-2.5M634.65,500.5v2.5M645.8,977.3v-2.5M645.8,500.5v2.5M656.95,977.3v-2.5M656.95,500.5v2.5M668.1,977.3v-2.5M668.1,500.5v2.5M679.25,977.3v-2.5M679.25,500.5v2.5M110,973.05h2.5M691.2,973.05h-2.5M110,961.9h4M691.2,961.9h-4M110,950.75h2.5M691.2,950.75h-2.5M110,939.6h2.5M691.2,939.6h-2.5M110,928.45h2.5M691.2,928.45h-2.5M110,917.3h2.5M691.2,917.3h-2.5M110,906.15h2.5M691.2,906.15h-2.5M110,895h2.5M691.2,895h-2.5M110,883.85h2.5M691.2,883.85h-2.5M110,872.7h2.5M691.2,872.7h-2.5M110,861.55h2.5M691.2,861.55h-2.5M110,850.4h4M691.2,850.4h-4M110,839.25h2.5M691.2,839.25h-2.5M110,828.1h2.5M691.2,828.1h-2.5M110,816.95h2.5M691.2,816.95h-2.5M110,805.8h2.5M691.2,805.8h-2.5M110,794.65h2.5M691.2,794.65h-2.5M110,783.5h2.5M691.2,783.5h-2.5M110,772.35h2.5M691.2,772.35h-2.5M110,761.2h2.5M691.2,761.2h-2.5M110,750.05h2.5M691.2,750.05h-2.5M110,738.9h4M691.2,738.9h-4M110,727.75h2.5M691.2,727.75h-2.5M110,716.6h2.5M691.2,716.6h-2.5M110,705.45h2.5M691.2,705.45h-2.5M110,694.3h2.5M691.2,694.3h-2.5M110,683.15h2.5M691.2,683.15h-2.5M110,672h2.5M691.2,672h-2.5M110,660.85h2.5M691.2,660.85h-2.5M110,649.7h2.5M691.2,649.7h-2.5M110,638.55h2.5M691.2,638.55h-2.5M110,627.4h4M691.2,627.4h-4M110,616.25h2.5M691.2,616.25h-2.5M110,605.1h2.5M691.2,605.1h-2.5M110,593.95h2.5M691.2,593.95h-2.5M110,582.8h2.5M691.2,582.8h-2.5M110,571.65h2.5M691.2,571.65h-2.5M110,560.5h2.5M691.2,560.5h-2.5M110,549.35h2.5M691.2,549.35h-2.5M110,538.2h2.5M691.2,538.2h-2.5M110,527.05h2.5M691.2,527.05h-2.5M110,515.9h4M691.2,515.9h-4M110,504.75h2.5M691.2,504.75h-2.5" stroke="#000" stroke-width="1.3" fill="none"/>
<rect x="110" y="500.5" width="581.2" height="476.8" fill="none" stroke="#000" stroke-width="1.5"/>
<text x="105" y="968.4" font-family='"Liberation Sans", sans-serif' font-size="16" font-weight="normal" font-style="normal" fill="#000" text-anchor="end" >-2</text>
<text x="105" y="912.65" font-family='"Liberation Sans", sans-serif' font-size="16" font-weight="normal" font-style="normal" fill="#000" text-anchor="end" >-1.5</text>
<text x="105" y="856.9" font-family='"Liberation Sans", sans-serif' font-size="16" font-weight="normal" font-style="normal" fill="#000" text-anchor="end" >-1</text>
<text x="105" y="801.15" font-family='"Liberation Sans", sans-serif' font-size="16" font-weight="normal" font-style="normal" fill="#000" text-anchor="end" >-0.5</text>
<text x="105" y="745.4" font-family='"Liberation Sans", sans-serif' font-size="16" font-weight="normal" font-style="normal" fill="#000" text-anchor="end" >0</text>
<text x="105" y="689.65" font-family='"Liberation Sans", sans-serif' font-size="16" font-weight="normal" font-style="normal" fill="#000" text-anchor="end" >0.5</text>
<text x="105" y="633.9" font-family='"Liberation Sans", sans-serif' font-size="16" font-weight="normal" font-style="normal" fill="#000" text-anchor="end" >1</text>
<text x="105" y="578.15" font-family='"Liberation Sans", sans-serif' font-size="16" font-weight="normal" font-style="normal" fill="#000" text-anchor="end" >1.5</text>
<text x="105" y="516.5" font-family='"Liberation Sans", sans-serif' font-size="16" font-weight="normal" font-style="normal" fill="#000" text-anchor="end" >Im(L)</text>
<text x="121.75" y="996.8" font-family='"Liberation Sans", sans-serif' font-size="16" font-weight="normal" font-style="normal" fill="#000" text-anchor="middle" >-2.5</text>
<text x="177.5" y="996.8" font-family='"Liberation Sans", sans-serif' font-size="16" font-weight="normal" font-style="normal" fill="#000" text-anchor="middle" >-2</text>
<text x="233.25" y="996.8" font-family='"Liberation Sans", sans-serif' font-size="16" font-weight="normal" font-style="normal" fill="#000" text-anchor="middle" >-1.5</text>
<text x="289" y="996.8" font-family='"Liberation Sans", sans-serif' font-size="16" font-weight="normal" font-style="normal" fill="#000" text-anchor="middle" >-1</text>
<text x="344.75" y="996.8" font-family='"Liberation Sans", sans-serif' font-size="16" font-weight="normal" font-style="normal" fill="#000" text-anchor="middle" >-0.5</text>
<text x="400.5" y="996.8" font-family='"Liberation Sans", sans-serif' font-size="16" font-weight="normal" font-style="normal" fill="#000" text-anchor="middle" >0</text>
<text x="456.25" y="996.8" font-family='"Liberation Sans", sans-serif' font-size="16" font-weight="normal" font-style="normal" fill="#000" text-anchor="middle" >0.5</text>
<text x="512" y="996.8" font-family='"Liberation Sans", sans-serif' font-size="16" font-weight="normal" font-style="normal" fill="#000" text-anchor="middle" >1</text>
<text x="567.75" y="996.8" font-family='"Liberation Sans", sans-serif' font-size="16" font-weight="normal" font-style="normal" fill="#000" text-anchor="middle" >1.5</text>
<text x="623.5" y="996.8" font-family='"Liberation Sans", sans-serif' font-size="16" font-weight="normal" font-style="normal" fill="#000" text-anchor="middle" >2</text>
<text x="691.2" y="996.8" font-family='"Liberation Sans", sans-serif' font-size="16" font-weight="normal" font-style="normal" fill="#000" text-anchor="end" >Re(L)</text>
<text x="110.5" y="490.8" font-family='"Liberation Sans", sans-serif' font-size="16" font-weight="bold" font-style="normal" fill="#000" text-anchor="start" >Nyquist diagram</text>
<rect x="586.5" y="913.1" width="97.1" height="48.4" fill="#fff" stroke="#000" stroke-width="1.3"/>
<path d="M590,925.4h11.5" stroke="#1f3ccf" stroke-width="1.8"/>
<path d="M590,949.4h11.5" stroke="#e246e2" stroke-width="1.8"/>
<text x="605.3" y="931.4" font-family='"Liberation Sans", sans-serif' font-size="15.7" font-weight="normal" font-style="normal" fill="#000" text-anchor="start" >Delay</text>
<text x="605.3" y="955.5" font-family='"Liberation Sans", sans-serif' font-size="15.7" font-weight="normal" font-style="normal" fill="#000" text-anchor="start" >No Delay</text>
<rect x="1513.3" y="79.8" width="17.4" height="17.4" fill="#fff" opacity="0.92"/>
<g fill="#000"><rect x="1520.2" y="80.2" width="3.6" height="3.6" transform="rotate(0 1522 88.5)"/><rect x="1520.2" y="80.2" width="3.6" height="3.6" transform="rotate(60 1522 88.5)"/><rect x="1520.2" y="80.2" width="3.6" height="3.6" transform="rotate(120 1522 88.5)"/><rect x="1520.2" y="80.2" width="3.6" height="3.6" transform="rotate(180 1522 88.5)"/><rect x="1520.2" y="80.2" width="3.6" height="3.6" transform="rotate(240 1522 88.5)"/><rect x="1520.2" y="80.2" width="3.6" height="3.6" transform="rotate(300 1522 88.5)"/></g>
<circle cx="1522" cy="88.5" r="5.5" fill="none" stroke="#000" stroke-width="2.4"/>
<path d="M1520,89.2h4l-1.1,1.3v1.9h-1.8v-1.9z" fill="#000"/>
<path d="M1520.4,87.2v1.8M1523.6,87.2v1.8" stroke="#000" stroke-width="0.7" opacity="0.55"/>
<rect x="1513.3" y="561.8" width="17.4" height="17.4" fill="#fff" opacity="0.92"/>
<g fill="#000"><rect x="1520.2" y="562.2" width="3.6" height="3.6" transform="rotate(0 1522 570.5)"/><rect x="1520.2" y="562.2" width="3.6" height="3.6" transform="rotate(60 1522 570.5)"/><rect x="1520.2" y="562.2" width="3.6" height="3.6" transform="rotate(120 1522 570.5)"/><rect x="1520.2" y="562.2" width="3.6" height="3.6" transform="rotate(180 1522 570.5)"/><rect x="1520.2" y="562.2" width="3.6" height="3.6" transform="rotate(240 1522 570.5)"/><rect x="1520.2" y="562.2" width="3.6" height="3.6" transform="rotate(300 1522 570.5)"/></g>
<circle cx="1522" cy="570.5" r="5.5" fill="none" stroke="#000" stroke-width="2.4"/>
<path d="M1520,571.2h4l-1.1,1.3v1.9h-1.8v-1.9z" fill="#000"/>
<path d="M1520.4,569.2v1.8M1523.6,569.2v1.8" stroke="#000" stroke-width="0.7" opacity="0.55"/>
<rect x="695.3" y="500.6" width="17.4" height="17.4" fill="#fff" opacity="0.92"/>
<g fill="#000"><rect x="702.2" y="501" width="3.6" height="3.6" transform="rotate(0 704 509.3)"/><rect x="702.2" y="501" width="3.6" height="3.6" transform="rotate(60 704 509.3)"/><rect x="702.2" y="501" width="3.6" height="3.6" transform="rotate(120 704 509.3)"/><rect x="702.2" y="501" width="3.6" height="3.6" transform="rotate(180 704 509.3)"/><rect x="702.2" y="501" width="3.6" height="3.6" transform="rotate(240 704 509.3)"/><rect x="702.2" y="501" width="3.6" height="3.6" transform="rotate(300 704 509.3)"/></g>
<circle cx="704" cy="509.3" r="5.5" fill="none" stroke="#000" stroke-width="2.4"/>
<path d="M702,510h4l-1.1,1.3v1.9h-1.8v-1.9z" fill="#000"/>
<path d="M702.4,508v1.8M705.6,508v1.8" stroke="#000" stroke-width="0.7" opacity="0.55"/>
<text x="103" y="105.1" font-family='"Liberation Sans", sans-serif' font-size="20" font-weight="bold" font-style="normal" fill="#000" text-anchor="start" >Time delay limitations</text>
<text x="107.2" y="132.7" font-family='"Liberation Sans", sans-serif' font-size="15.7" font-weight="bold" font-style="normal" fill="#000" text-anchor="start" >Parameters</text>
<text x="107.2" y="322" font-family='"Liberation Sans", sans-serif' font-size="16" font-weight="bold" font-style="normal" fill="#000" text-anchor="start" >Proportional controller gain, C(s)=K</text>
<text x="109" y="433.8" font-family='"Liberation Sans", sans-serif' font-size="16" font-weight="bold" font-style="normal" fill="#000" text-anchor="start" >Characteristics</text>
<rect x="152" y="151.4" width="156.5" height="21.2" fill="#fff" stroke="#c6c6c6" stroke-width="1"/>
<line x1="152" y1="151.4" x2="308.5" y2="151.4" stroke="#b2b2b2" stroke-width="1"/>
<line x1="152.5" y1="152.7" x2="308" y2="152.7" stroke="#efefef" stroke-width="1.2"/>
<text x="304.2" y="167" font-family='"Liberation Sans", sans-serif' font-size="15.5" font-weight="normal" font-style="normal" fill="#d42626" text-anchor="end" >1.000</text>
<text x="107.5" y="167.2" font-family='"Liberation Serif", serif' font-size="17"><tspan font-style="italic">k</tspan> [<tspan font-size="15.5">−</tspan><tspan dx="1.5">]</tspan></text>
<rect x="156.2" y="183.1" width="148" height="5.6" rx="2.8" fill="url(#trk)"/>
<circle cx="230.1" cy="185.9" r="7.5" fill="url(#thr)" stroke="#dd6b6b" stroke-width="0.8"/>
<rect x="152" y="199.3" width="156.5" height="21.2" fill="#fff" stroke="#c6c6c6" stroke-width="1"/>
<line x1="152" y1="199.3" x2="308.5" y2="199.3" stroke="#b2b2b2" stroke-width="1"/>
<line x1="152.5" y1="200.6" x2="308" y2="200.6" stroke="#efefef" stroke-width="1.2"/>
<text x="304.2" y="214.9" font-family='"Liberation Sans", sans-serif' font-size="15.5" font-weight="normal" font-style="normal" fill="#d42626" text-anchor="end" >1.000</text>
<text x="107.5" y="215.2" font-family='"Liberation Serif", serif' font-size="17"><tspan font-style="italic">τ</tspan> [<tspan font-style="italic">s</tspan>]</text>
<rect x="156.2" y="231.1" width="148" height="5.6" rx="2.8" fill="url(#trk)"/>
<circle cx="230.1" cy="233.9" r="7.5" fill="url(#thr)" stroke="#dd6b6b" stroke-width="0.8"/>
<rect x="152" y="247.3" width="156.5" height="21.2" fill="#fff" stroke="#c6c6c6" stroke-width="1"/>
<line x1="152" y1="247.3" x2="308.5" y2="247.3" stroke="#b2b2b2" stroke-width="1"/>
<line x1="152.5" y1="248.6" x2="308" y2="248.6" stroke="#efefef" stroke-width="1.2"/>
<text x="304.2" y="262.9" font-family='"Liberation Sans", sans-serif' font-size="15.5" font-weight="normal" font-style="normal" fill="#d42626" text-anchor="end" >0.500</text>
<text x="107.5" y="263.2" font-family='"Liberation Serif", serif' font-size="17"><tspan font-style="italic">t</tspan><tspan font-style="italic" font-size="12" dy="4">d</tspan><tspan dy="-4"> [</tspan><tspan font-style="italic">s</tspan>]</text>
<rect x="156.2" y="279" width="148" height="5.6" rx="2.8" fill="url(#trk)"/>
<circle cx="230.1" cy="281.8" r="7.5" fill="url(#thr)" stroke="#dd6b6b" stroke-width="0.8"/>
<rect x="152" y="342.5" width="156.5" height="21.2" fill="#fff" stroke="#c6c6c6" stroke-width="1"/>
<line x1="152" y1="342.5" x2="308.5" y2="342.5" stroke="#b2b2b2" stroke-width="1"/>
<line x1="152.5" y1="343.8" x2="308" y2="343.8" stroke="#efefef" stroke-width="1.2"/>
<text x="304.2" y="358.1" font-family='"Liberation Sans", sans-serif' font-size="15.5" font-weight="normal" font-style="normal" fill="#1f3fcf" text-anchor="end" >1.000</text>
<text x="107.5" y="358.3" font-family='"Liberation Serif", serif' font-size="17"><tspan font-style="italic">K</tspan> [<tspan font-size="15.5">−</tspan><tspan dx="1.5">]</tspan></text>
<rect x="156.2" y="374.1" width="148" height="5.6" rx="2.8" fill="url(#trk)"/>
<circle cx="230.1" cy="376.9" r="7.5" fill="url(#thb)" stroke="#7f86d6" stroke-width="0.8"/>
<text x="264.5" y="419.9" font-family='"Liberation Serif", serif' font-size="17" font-weight="normal" font-style="normal" fill="#2540c8" text-anchor="start" >GM [dB]: 6.65</text>
<text x="405.8" y="419.9" font-family='"Liberation Serif", serif' font-size="17" font-weight="normal" font-style="normal" fill="#2540c8" text-anchor="start" >PM [º]: 29.31</text>
<text x="264.5" y="450.6" font-family='"Liberation Serif", serif' font-size="17" font-weight="normal" font-style="normal" fill="#e04ae0" text-anchor="start" >GM [dB]: 257.35</text>
<text x="405.8" y="450.6" font-family='"Liberation Serif", serif' font-size="17" font-weight="normal" font-style="normal" fill="#e04ae0" text-anchor="start" >PM [º]: 51.83</text>
<text x="368.8" y="209.8" font-family='"Liberation Serif", serif' font-size="18.8" fill="#d42626"><tspan font-style="italic">G</tspan>(<tspan font-style="italic">s</tspan>)=1.00</text>
<line x1="448.6" y1="205.9" x2="545.8" y2="205.9" stroke="#d42626" stroke-width="1.2"/>
<text x="495.7" y="202.4" font-family='"Liberation Serif", serif' font-size="17.5" font-weight="normal" font-style="normal" fill="#d42626" text-anchor="middle" >1.00</text>
<text x="448.6" y="223.6" font-family='"Liberation Serif", serif' font-size="18" letter-spacing="0.3" fill="#d42626"><tspan font-style="italic">s</tspan> (1.00<tspan font-style="italic">s</tspan> + 1)</text>
<text x="552" y="209.8" font-family='"Liberation Serif", serif' font-size="18" fill="#d42626" font-style="italic">e</text>
<text x="559.2" y="201.7" font-family='"Liberation Serif", serif' font-size="14" fill="#d42626">−0.5<tspan font-style="italic">s</tspan></text>
<rect x="589" y="101" width="101.5" height="56" fill="#e8e8e8"/>
<rect x="589.7" y="101.3" width="66.1" height="55.3" fill="#fff"/>
<rect x="589.7" y="101.3" width="66.1" height="5" fill="#c4c4c4"/>
<rect x="614.5" y="102.6" width="23.5" height="2" fill="#555" opacity="0.45"/>
<rect x="589.7" y="151.3" width="66.1" height="5.3" fill="#c6c6c6"/>
<rect x="590.5" y="152.3" width="29" height="3.4" fill="#777" opacity="0.35"/>
<rect x="589.7" y="101.3" width="66.1" height="55.3" fill="none" stroke="#999" stroke-width="0.8"/>
<line x1="655.6" y1="101.3" x2="655.6" y2="156.6" stroke="#666" stroke-width="1"/>
<rect x="595.3" y="110.5" width="57.4" height="38" fill="none" stroke="#ccc" stroke-width="0.7"/>
<rect x="596" y="107.6" width="11" height="1.3" fill="#999" opacity="0.6"/>
<circle cx="624.1" cy="128.8" r="16.5" fill="none" stroke="#a9d2f0" stroke-width="0.9"/>
<path d="M640.5,128.8 C636,124 632,119.2 624.2,119.2 C618,119.2 614.4,123.5 614.4,129 C614.4,134.5 618,138.8 624.2,138.8 C632,138.8 636,133.5 640.5,128.8" fill="none" stroke="#ee9a9a" stroke-width="0.9"/>
<ellipse cx="627.8" cy="129.1" rx="5" ry="5.8" fill="none" stroke="#ee9a9a" stroke-width="0.9"/>
<path d="M635,110.3 Q646,128.8 633.9,148.5" fill="none" stroke="#777" stroke-width="0.8"/>
<line x1="595.5" y1="128.8" x2="607.2" y2="128.8" stroke="#bbb" stroke-width="1"/>
<rect x="606" y="127.7" width="2.4" height="2.4" fill="#666"/>
<rect x="594.5" y="127.9" width="2" height="2" fill="#888"/>
<path d="M641,129.5 C641,127.6 643,127.2 646,126.9 L656,126.2 C659,125.5 661,125 663,125.2 C670,125.6 677,126.5 682,127.3 C685,128 687.4,129.5 687.4,131.5 L687.4,142 C684,143.5 680,145 677,146.5 C672,149 667,151.5 662.5,152.5 C660,151.5 658.5,150 657.5,148 C655.5,146 654,143 654.2,140 C654.3,137.5 655,135.5 656.5,134 C655.5,132.8 654.5,132.3 652,132.2 L644,131.9 C642,131.7 641,130.9 641,129.5 Z" fill="#f0c98c" stroke="#4e3414" stroke-width="1"/>
<path d="M659.8,135.3 C658.3,137 658.3,141 659.3,143.5 C660.8,145.7 664.5,145.7 666,143.5 C667,141 666.5,137 665,135.3 C663.5,134.3 661.3,134.3 659.8,135.3 Z" fill="#e2e2e2" stroke="#6a4a20" stroke-width="0.7"/>
<path d="M656.5,134 C658,133.2 660,133.5 661,134.3 M657.8,148 C660,148.5 662,148 663,146.5 M668,136 C669,139 669.5,142 668.5,145" fill="none" stroke="#4e3414" stroke-width="0.8"/>
<path d="M677,135.5 C680,137 683,137.8 687,138" fill="none" stroke="#b89058" stroke-width="0.6"/>
</svg>
</body></html>
